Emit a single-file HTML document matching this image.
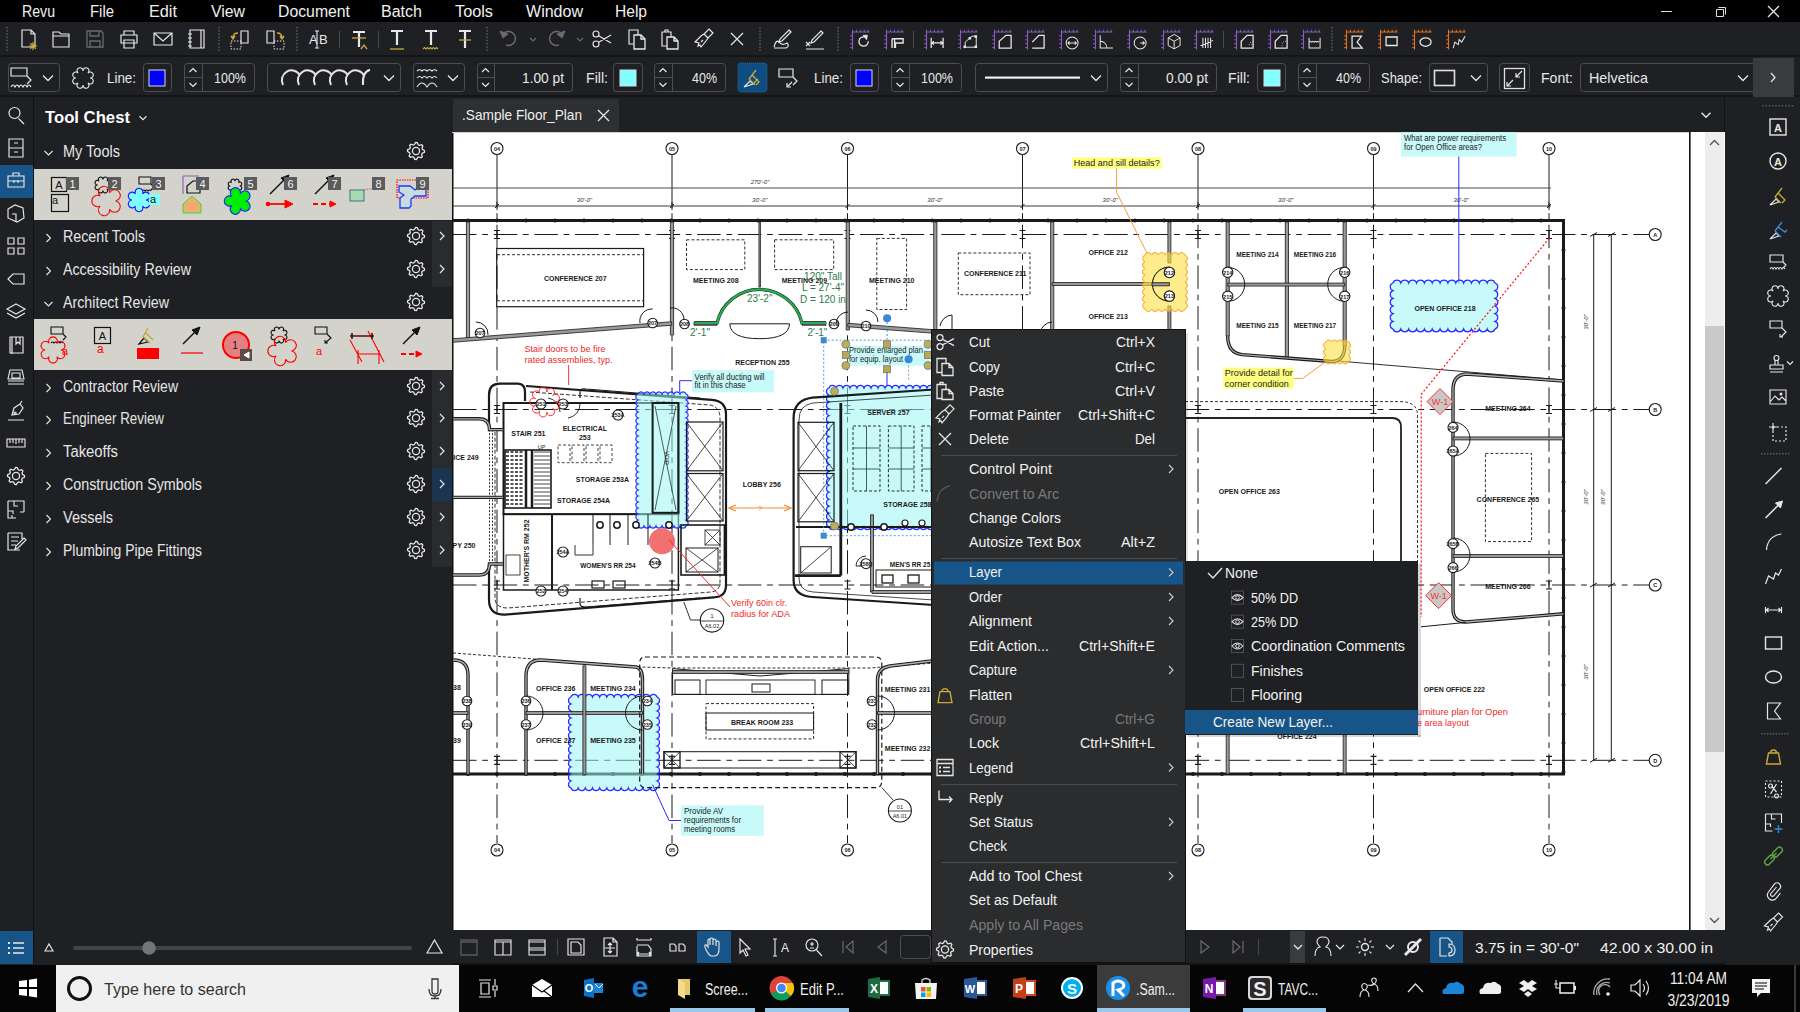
<!DOCTYPE html>
<html><head><meta charset="utf-8"><title>Revu</title>
<style>
*{margin:0;padding:0}
html,body{width:1800px;height:1012px;overflow:hidden;background:#1f2023}
svg{display:block;font-family:"Liberation Sans",sans-serif}
</style></head><body>
<svg width="1800" height="1012" viewBox="0 0 1800 1012" font-family="Liberation Sans, sans-serif">
<rect x="0" y="0" width="1800" height="1012" fill="#1f2023" /><rect x="0" y="0" width="1800" height="22" fill="#000" /><rect x="0" y="55" width="1800" height="2" fill="#141516" /><rect x="0" y="95" width="1800" height="2" fill="#141516" /><text x="22" y="17" font-size="16" fill="#f0f0f0" textLength="33" lengthAdjust="spacingAndGlyphs" >Revu</text><text x="90" y="17" font-size="16" fill="#f0f0f0" textLength="24" lengthAdjust="spacingAndGlyphs" >File</text><text x="149" y="17" font-size="16" fill="#f0f0f0" textLength="28" lengthAdjust="spacingAndGlyphs" >Edit</text><text x="211" y="17" font-size="16" fill="#f0f0f0" textLength="34" lengthAdjust="spacingAndGlyphs" >View</text><text x="278" y="17" font-size="16" fill="#f0f0f0" textLength="72" lengthAdjust="spacingAndGlyphs" >Document</text><text x="381" y="17" font-size="16" fill="#f0f0f0" textLength="41" lengthAdjust="spacingAndGlyphs" >Batch</text><text x="455" y="17" font-size="16" fill="#f0f0f0" textLength="38" lengthAdjust="spacingAndGlyphs" >Tools</text><text x="526" y="17" font-size="16" fill="#f0f0f0" textLength="57" lengthAdjust="spacingAndGlyphs" >Window</text><text x="615" y="17" font-size="16" fill="#f0f0f0" textLength="32" lengthAdjust="spacingAndGlyphs" >Help</text><rect x="1661" y="11" width="11" height="1" fill="#e0e0e0" /><path d="M1716.5,9.5 h7 v7 h-7 z M1718.5,7.5 h7 v7" stroke="#e0e0e0" stroke-width="1" fill="none" /><path d="M1768,6 L1779,17 M1779,6 L1768,17" stroke="#e8e8e8" stroke-width="1.3" fill="none" /><rect x="6.25" y="27" width="1.5" height="1.5" fill="#5a5a5a" /><rect x="6.25" y="30.2" width="1.5" height="1.5" fill="#5a5a5a" /><rect x="6.25" y="33.4" width="1.5" height="1.5" fill="#5a5a5a" /><rect x="6.25" y="36.6" width="1.5" height="1.5" fill="#5a5a5a" /><rect x="6.25" y="39.800000000000004" width="1.5" height="1.5" fill="#5a5a5a" /><rect x="6.25" y="43.00000000000001" width="1.5" height="1.5" fill="#5a5a5a" /><rect x="6.25" y="46.20000000000001" width="1.5" height="1.5" fill="#5a5a5a" /><rect x="6.25" y="49.40000000000001" width="1.5" height="1.5" fill="#5a5a5a" /><g transform="translate(28,39)"><path d="M-6,-9 H3 L7,-5 V8 H-6 Z M3,-9 V-5 H7" stroke="#e8e8e8" stroke-width="1.15" fill="none" /><path d="M5,3 V11 M1,7 H9 M2.2,4.2 L7.8,9.8 M7.8,4.2 L2.2,9.8" stroke="#c9a93a" stroke-width="1.2" fill="none" /></g><g transform="translate(61,39)"><path d="M-8,-7 H-2 L0,-5 H8 V8 H-8 Z M-8,-3 H8" stroke="#e8e8e8" stroke-width="1.15" fill="none" /></g><g transform="translate(95,39)"><path d="M-8,-8 H6 L8,-6 V8 H-8 Z M-5,-8 V-3 H4 V-8 M-5,8 V2 H5 V8" stroke="#6a6a6a" stroke-width="1.3" fill="none" /></g><g transform="translate(129,39)"><path d="M-5,-4 V-8 H5 V-4 M-8,-4 H8 V4 H-8 Z M-5,1 H5 V9 H-5 Z" stroke="#e8e8e8" stroke-width="1.2" fill="none" /></g><g transform="translate(163,39)"><path d="M-9,-6 H9 V6 H-9 Z M-9,-6 L0,2 L9,-6" stroke="#e8e8e8" stroke-width="1.2" fill="none" /></g><g transform="translate(197,39)"><path d="M-7,-9 H7 V9 H-7 Z M4,-9 V9 M-9,-5 H-5 M-9,-1 H-5 M-9,3 H-5 M-9,7 H-5" stroke="#e8e8e8" stroke-width="1.2" fill="none" /></g><rect x="218.25" y="27" width="1.5" height="1.5" fill="#5a5a5a" /><rect x="218.25" y="30.2" width="1.5" height="1.5" fill="#5a5a5a" /><rect x="218.25" y="33.4" width="1.5" height="1.5" fill="#5a5a5a" /><rect x="218.25" y="36.6" width="1.5" height="1.5" fill="#5a5a5a" /><rect x="218.25" y="39.800000000000004" width="1.5" height="1.5" fill="#5a5a5a" /><rect x="218.25" y="43.00000000000001" width="1.5" height="1.5" fill="#5a5a5a" /><rect x="218.25" y="46.20000000000001" width="1.5" height="1.5" fill="#5a5a5a" /><rect x="218.25" y="49.40000000000001" width="1.5" height="1.5" fill="#5a5a5a" /><g transform="translate(240,39)"><path d="M1,-8 H8 V4 H1 Z" stroke="#e8e8e8" stroke-width="1.15" fill="none" /><path d="M-9,2 H1 V10 H-9 Z" stroke="#e8e8e8" stroke-width="1" fill="none" stroke-dasharray="1.5,1.5"/><path d="M-2,-6 Q-7,-6 -7,-1 M-9,-3 L-7,0 L-5,-3" stroke="#c9a93a" stroke-width="1.4" fill="none" /></g><g transform="translate(275,39)"><path d="M-8,-8 H-1 V4 H-8 Z" stroke="#e8e8e8" stroke-width="1.15" fill="none" /><path d="M-1,2 H9 V10 H-1 Z" stroke="#e8e8e8" stroke-width="1" fill="none" stroke-dasharray="1.5,1.5"/><path d="M2,-6 Q7,-6 7,-1 M5,-3 L7,0 L9,-3" stroke="#c9a93a" stroke-width="1.4" fill="none" /></g><rect x="296.25" y="27" width="1.5" height="1.5" fill="#5a5a5a" /><rect x="296.25" y="30.2" width="1.5" height="1.5" fill="#5a5a5a" /><rect x="296.25" y="33.4" width="1.5" height="1.5" fill="#5a5a5a" /><rect x="296.25" y="36.6" width="1.5" height="1.5" fill="#5a5a5a" /><rect x="296.25" y="39.800000000000004" width="1.5" height="1.5" fill="#5a5a5a" /><rect x="296.25" y="43.00000000000001" width="1.5" height="1.5" fill="#5a5a5a" /><rect x="296.25" y="46.20000000000001" width="1.5" height="1.5" fill="#5a5a5a" /><rect x="296.25" y="49.40000000000001" width="1.5" height="1.5" fill="#5a5a5a" /><g transform="translate(318,39)"><text x="-9" y="5" font-size="13" fill="#e8e8e8" >A</text><text x="1" y="5" font-size="13" fill="#e8e8e8" >B</text><path d="M-1,-8 V9 M-3,-8 H1 M-3,9 H1" stroke="#e8e8e8" stroke-width="1.1" fill="none" /></g><rect x="339" y="31" width="1" height="17" fill="#4a4a4a" /><g transform="translate(359,39)"><path d="M-6,-7 H6 M0,-7 V8" stroke="#e8e8e8" stroke-width="2.2" fill="none" /><path d="M-7,-1 H7" stroke="#c9a93a" stroke-width="1.3" fill="none" /><path d="M2,10 L5,6 L8,10" stroke="#c9a93a" stroke-width="1.3" fill="none" /></g><rect x="378" y="31" width="1" height="17" fill="#4a4a4a" /><g transform="translate(397,39)"><path d="M-6,-8 H6 M0,-8 V6" stroke="#e8e8e8" stroke-width="2.2" fill="none" /><path d="M-7,10 H7" stroke="#c9a93a" stroke-width="1.3" fill="none" /></g><g transform="translate(431,39)"><path d="M-6,-8 H6 M0,-8 V6" stroke="#e8e8e8" stroke-width="2.2" fill="none" /><path d="M-8,10 l1.5,-1.5 l1.5,1.5 l1.5,-1.5 l1.5,1.5 l1.5,-1.5 l1.5,1.5 l1.5,-1.5 l1.5,1.5 l1.5,-1.5 l1.5,1.5" stroke="#c9a93a" stroke-width="1.1" fill="none" /></g><g transform="translate(465,39)"><path d="M-6,-8 H6 M0,-8 V9" stroke="#e8e8e8" stroke-width="2.2" fill="none" /><path d="M-6,1 H6" stroke="#c9a93a" stroke-width="1.3" fill="none" /></g><rect x="486.25" y="27" width="1.5" height="1.5" fill="#5a5a5a" /><rect x="486.25" y="30.2" width="1.5" height="1.5" fill="#5a5a5a" /><rect x="486.25" y="33.4" width="1.5" height="1.5" fill="#5a5a5a" /><rect x="486.25" y="36.6" width="1.5" height="1.5" fill="#5a5a5a" /><rect x="486.25" y="39.800000000000004" width="1.5" height="1.5" fill="#5a5a5a" /><rect x="486.25" y="43.00000000000001" width="1.5" height="1.5" fill="#5a5a5a" /><rect x="486.25" y="46.20000000000001" width="1.5" height="1.5" fill="#5a5a5a" /><rect x="486.25" y="49.40000000000001" width="1.5" height="1.5" fill="#5a5a5a" /><g transform="translate(509,39)"><path d="M-6,-5 A7,7 0 1 1 -3,6" stroke="#6a6a6a" stroke-width="1.5" fill="none" /><path d="M-9,-8 L-6,-1 L-1,-5 Z" stroke="#6a6a6a" stroke-width="1" fill="#6a6a6a" /></g><g transform="translate(533,39)"><path d="M-3,-1 L0,2 L3,-1" stroke="#6a6a6a" stroke-width="1.2" fill="none" /></g><g transform="translate(556,39)"><path d="M6,-5 A7,7 0 1 0 3,6" stroke="#6a6a6a" stroke-width="1.5" fill="none" /><path d="M9,-8 L6,-1 L1,-5 Z" stroke="#6a6a6a" stroke-width="1" fill="#6a6a6a" /></g><g transform="translate(580,39)"><path d="M-3,-1 L0,2 L3,-1" stroke="#6a6a6a" stroke-width="1.2" fill="none" /></g><g transform="translate(602,39)"><path d="M-9,-5 a3,3 0 1 0 6,0 a3,3 0 1 0 -6,0 M-9,5 a3,3 0 1 0 6,0 a3,3 0 1 0 -6,0 M-3,-3 L9,4 M-3,3 L9,-4" stroke="#e8e8e8" stroke-width="1.15" fill="none" /></g><g transform="translate(637,39)"><path d="M-8,-9 H1 V5 H-8 Z" stroke="#e8e8e8" stroke-width="1.15" fill="none" /><path d="M-3,-4 H4 L8,0 V10 H-3 Z M4,-4 V0 H8" stroke="#e8e8e8" stroke-width="1.3" fill="#1f2023" /></g><g transform="translate(670,39)"><path d="M-8,-7 H1 V7 H-8 Z M-5,-9 H-2 V-7 H-5 Z" stroke="#e8e8e8" stroke-width="1.15" fill="none" /><path d="M-3,-2 H4 L8,2 V10 H-3 Z M4,-2 V2 H8" stroke="#e8e8e8" stroke-width="1.3" fill="#1f2023" /></g><g transform="translate(704,39)"><path d="M5,-10 L9,-6 L4,-1 L0,-5 Z M0,-5 L4,-1 L2,2 L-3,8 L-4,6 L-6,7 L-5,4 L-9,3 L-3,-3 Z M-3,3 L-1,1" stroke="#e8e8e8" stroke-width="1.15" fill="none" /></g><g transform="translate(737,39)"><path d="M-6,-6 L6,6 M6,-6 L-6,6" stroke="#e8e8e8" stroke-width="1.2" fill="none" /></g><rect x="759.25" y="27" width="1.5" height="1.5" fill="#5a5a5a" /><rect x="759.25" y="30.2" width="1.5" height="1.5" fill="#5a5a5a" /><rect x="759.25" y="33.4" width="1.5" height="1.5" fill="#5a5a5a" /><rect x="759.25" y="36.6" width="1.5" height="1.5" fill="#5a5a5a" /><rect x="759.25" y="39.800000000000004" width="1.5" height="1.5" fill="#5a5a5a" /><rect x="759.25" y="43.00000000000001" width="1.5" height="1.5" fill="#5a5a5a" /><rect x="759.25" y="46.20000000000001" width="1.5" height="1.5" fill="#5a5a5a" /><rect x="759.25" y="49.40000000000001" width="1.5" height="1.5" fill="#5a5a5a" /><g transform="translate(782,39)"><path d="M7,-9 L9,-7 L0,2 L-3,3 L-2,0 Z" stroke="#e8e8e8" stroke-width="1.2" fill="none" /><path d="M-8,8 Q-6,0 -3,3 Q0,7 5,4 Q8,7 4,9 H-8" stroke="#e8e8e8" stroke-width="1.2" fill="none" /></g><g transform="translate(815,39)"><path d="M-9,3 L-5,7 M-5,3 L-9,7 M-9,10 H9" stroke="#e8e8e8" stroke-width="1.2" fill="none" /><path d="M6,-8 L8,-6 L-1,3 L-4,4 L-3,1 Z" stroke="#e8e8e8" stroke-width="1.2" fill="none" /></g><rect x="837.25" y="27" width="1.5" height="1.5" fill="#5a5a5a" /><rect x="837.25" y="30.2" width="1.5" height="1.5" fill="#5a5a5a" /><rect x="837.25" y="33.4" width="1.5" height="1.5" fill="#5a5a5a" /><rect x="837.25" y="36.6" width="1.5" height="1.5" fill="#5a5a5a" /><rect x="837.25" y="39.800000000000004" width="1.5" height="1.5" fill="#5a5a5a" /><rect x="837.25" y="43.00000000000001" width="1.5" height="1.5" fill="#5a5a5a" /><rect x="837.25" y="46.20000000000001" width="1.5" height="1.5" fill="#5a5a5a" /><rect x="837.25" y="49.40000000000001" width="1.5" height="1.5" fill="#5a5a5a" /><g transform="translate(861,39)"><path d="M-8.5,-7 H8.5 M-8.5,-7 V10.5" stroke="#8a5cc4" stroke-width="1.1" fill="none" /><path d="M-8.50,-7 V-9.3" stroke="#8a5cc4" stroke-width="1" fill="none" /><path d="M-4.60,-7 V-9.3" stroke="#8a5cc4" stroke-width="1" fill="none" /><path d="M-0.70,-7 V-9.3" stroke="#8a5cc4" stroke-width="1" fill="none" /><path d="M3.20,-7 V-9.3" stroke="#8a5cc4" stroke-width="1" fill="none" /><path d="M7.10,-7 V-9.3" stroke="#8a5cc4" stroke-width="1" fill="none" /><path d="M-8.5,-3.10 H-10.8" stroke="#8a5cc4" stroke-width="1" fill="none" /><path d="M-8.5,0.80 H-10.8" stroke="#8a5cc4" stroke-width="1" fill="none" /><path d="M-8.5,4.70 H-10.8" stroke="#8a5cc4" stroke-width="1" fill="none" /><path d="M-8.5,8.60 H-10.8" stroke="#8a5cc4" stroke-width="1" fill="none" /><g transform="translate(1.3,1.4) scale(0.85)"><path d="M7,1 A5.5,5.5 0 1 1 3,-4" stroke="#e8e8e8" stroke-width="1.5" fill="none" /><path d="M1,-6 L6,-6 L5,-1 Z" stroke="#e8e8e8" stroke-width="1" fill="#e8e8e8" /></g></g><g transform="translate(895,39)"><path d="M-8.5,-7 H8.5 M-8.5,-7 V10.5" stroke="#8a5cc4" stroke-width="1.1" fill="none" /><path d="M-8.50,-7 V-9.3" stroke="#8a5cc4" stroke-width="1" fill="none" /><path d="M-4.60,-7 V-9.3" stroke="#8a5cc4" stroke-width="1" fill="none" /><path d="M-0.70,-7 V-9.3" stroke="#8a5cc4" stroke-width="1" fill="none" /><path d="M3.20,-7 V-9.3" stroke="#8a5cc4" stroke-width="1" fill="none" /><path d="M7.10,-7 V-9.3" stroke="#8a5cc4" stroke-width="1" fill="none" /><path d="M-8.5,-3.10 H-10.8" stroke="#8a5cc4" stroke-width="1" fill="none" /><path d="M-8.5,0.80 H-10.8" stroke="#8a5cc4" stroke-width="1" fill="none" /><path d="M-8.5,4.70 H-10.8" stroke="#8a5cc4" stroke-width="1" fill="none" /><path d="M-8.5,8.60 H-10.8" stroke="#8a5cc4" stroke-width="1" fill="none" /><g transform="translate(1.3,1.4) scale(0.85)"><path d="M-5,-2 H8 V3 H-1 V9 M-5,-2 V9 M-2,-2 V9" stroke="#e8e8e8" stroke-width="1.6" fill="none" /></g></g><rect x="913" y="31" width="1" height="17" fill="#4a4a4a" /><g transform="translate(935,39)"><path d="M-8.5,-7 H8.5 M-8.5,-7 V10.5" stroke="#8a5cc4" stroke-width="1.1" fill="none" /><path d="M-8.50,-7 V-9.3" stroke="#8a5cc4" stroke-width="1" fill="none" /><path d="M-4.60,-7 V-9.3" stroke="#8a5cc4" stroke-width="1" fill="none" /><path d="M-0.70,-7 V-9.3" stroke="#8a5cc4" stroke-width="1" fill="none" /><path d="M3.20,-7 V-9.3" stroke="#8a5cc4" stroke-width="1" fill="none" /><path d="M7.10,-7 V-9.3" stroke="#8a5cc4" stroke-width="1" fill="none" /><path d="M-8.5,-3.10 H-10.8" stroke="#8a5cc4" stroke-width="1" fill="none" /><path d="M-8.5,0.80 H-10.8" stroke="#8a5cc4" stroke-width="1" fill="none" /><path d="M-8.5,4.70 H-10.8" stroke="#8a5cc4" stroke-width="1" fill="none" /><path d="M-8.5,8.60 H-10.8" stroke="#8a5cc4" stroke-width="1" fill="none" /><g transform="translate(1.3,1.4) scale(0.85)"><path d="M-6,-3 V9 M8,-3 V9 M-5,3 H7 M-3,1 L-5,3 L-3,5 M5,1 L7,3 L5,5" stroke="#e8e8e8" stroke-width="1.5" fill="none" /></g></g><g transform="translate(969,39)"><path d="M-8.5,-7 H8.5 M-8.5,-7 V10.5" stroke="#8a5cc4" stroke-width="1.1" fill="none" /><path d="M-8.50,-7 V-9.3" stroke="#8a5cc4" stroke-width="1" fill="none" /><path d="M-4.60,-7 V-9.3" stroke="#8a5cc4" stroke-width="1" fill="none" /><path d="M-0.70,-7 V-9.3" stroke="#8a5cc4" stroke-width="1" fill="none" /><path d="M3.20,-7 V-9.3" stroke="#8a5cc4" stroke-width="1" fill="none" /><path d="M7.10,-7 V-9.3" stroke="#8a5cc4" stroke-width="1" fill="none" /><path d="M-8.5,-3.10 H-10.8" stroke="#8a5cc4" stroke-width="1" fill="none" /><path d="M-8.5,0.80 H-10.8" stroke="#8a5cc4" stroke-width="1" fill="none" /><path d="M-8.5,4.70 H-10.8" stroke="#8a5cc4" stroke-width="1" fill="none" /><path d="M-8.5,8.60 H-10.8" stroke="#8a5cc4" stroke-width="1" fill="none" /><g transform="translate(1.3,1.4) scale(0.85)"><path d="M-6,8 H7 V-4 M-6,8 V2 L2,-5 H7" stroke="#e8e8e8" stroke-width="1.15" fill="none" /><rect x="-8" y="6" width="3" height="3" fill="#e8e8e8" /><rect x="5" y="6" width="3" height="3" fill="#e8e8e8" /><rect x="5" y="-6" width="3" height="3" fill="#e8e8e8" /><rect x="-2" y="-4" width="3" height="3" fill="#e8e8e8" /></g></g><g transform="translate(1003,39)"><path d="M-8.5,-7 H8.5 M-8.5,-7 V10.5" stroke="#8a5cc4" stroke-width="1.1" fill="none" /><path d="M-8.50,-7 V-9.3" stroke="#8a5cc4" stroke-width="1" fill="none" /><path d="M-4.60,-7 V-9.3" stroke="#8a5cc4" stroke-width="1" fill="none" /><path d="M-0.70,-7 V-9.3" stroke="#8a5cc4" stroke-width="1" fill="none" /><path d="M3.20,-7 V-9.3" stroke="#8a5cc4" stroke-width="1" fill="none" /><path d="M7.10,-7 V-9.3" stroke="#8a5cc4" stroke-width="1" fill="none" /><path d="M-8.5,-3.10 H-10.8" stroke="#8a5cc4" stroke-width="1" fill="none" /><path d="M-8.5,0.80 H-10.8" stroke="#8a5cc4" stroke-width="1" fill="none" /><path d="M-8.5,4.70 H-10.8" stroke="#8a5cc4" stroke-width="1" fill="none" /><path d="M-8.5,8.60 H-10.8" stroke="#8a5cc4" stroke-width="1" fill="none" /><g transform="translate(1.3,1.4) scale(0.85)"><path d="M-6,9 V1 L2,-6 H8 V9 Z" stroke="#e8e8e8" stroke-width="1.5" fill="none" /></g></g><g transform="translate(1036,39)"><path d="M-8.5,-7 H8.5 M-8.5,-7 V10.5" stroke="#8a5cc4" stroke-width="1.1" fill="none" /><path d="M-8.50,-7 V-9.3" stroke="#8a5cc4" stroke-width="1" fill="none" /><path d="M-4.60,-7 V-9.3" stroke="#8a5cc4" stroke-width="1" fill="none" /><path d="M-0.70,-7 V-9.3" stroke="#8a5cc4" stroke-width="1" fill="none" /><path d="M3.20,-7 V-9.3" stroke="#8a5cc4" stroke-width="1" fill="none" /><path d="M7.10,-7 V-9.3" stroke="#8a5cc4" stroke-width="1" fill="none" /><path d="M-8.5,-3.10 H-10.8" stroke="#8a5cc4" stroke-width="1" fill="none" /><path d="M-8.5,0.80 H-10.8" stroke="#8a5cc4" stroke-width="1" fill="none" /><path d="M-8.5,4.70 H-10.8" stroke="#8a5cc4" stroke-width="1" fill="none" /><path d="M-8.5,8.60 H-10.8" stroke="#8a5cc4" stroke-width="1" fill="none" /><g transform="translate(1.3,1.4) scale(0.85)"><path d="M-6,9 H8 V-6 H2 L-6,2" stroke="#e8e8e8" stroke-width="1.5" fill="none" /></g></g><g transform="translate(1070,39)"><path d="M-8.5,-7 H8.5 M-8.5,-7 V10.5" stroke="#8a5cc4" stroke-width="1.1" fill="none" /><path d="M-8.50,-7 V-9.3" stroke="#8a5cc4" stroke-width="1" fill="none" /><path d="M-4.60,-7 V-9.3" stroke="#8a5cc4" stroke-width="1" fill="none" /><path d="M-0.70,-7 V-9.3" stroke="#8a5cc4" stroke-width="1" fill="none" /><path d="M3.20,-7 V-9.3" stroke="#8a5cc4" stroke-width="1" fill="none" /><path d="M7.10,-7 V-9.3" stroke="#8a5cc4" stroke-width="1" fill="none" /><path d="M-8.5,-3.10 H-10.8" stroke="#8a5cc4" stroke-width="1" fill="none" /><path d="M-8.5,0.80 H-10.8" stroke="#8a5cc4" stroke-width="1" fill="none" /><path d="M-8.5,4.70 H-10.8" stroke="#8a5cc4" stroke-width="1" fill="none" /><path d="M-8.5,8.60 H-10.8" stroke="#8a5cc4" stroke-width="1" fill="none" /><g transform="translate(1.3,1.4) scale(0.85)"><path d="M-6,3 a7,7 0 1 0 14,0 a7,7 0 1 0 -14,0 M-4,3 H6 M-2,1 L-4,3 L-2,5 M4,1 L6,3 L4,5" stroke="#e8e8e8" stroke-width="1.2" fill="none" /></g></g><g transform="translate(1104,39)"><path d="M-8.5,-7 H8.5 M-8.5,-7 V10.5" stroke="#8a5cc4" stroke-width="1.1" fill="none" /><path d="M-8.50,-7 V-9.3" stroke="#8a5cc4" stroke-width="1" fill="none" /><path d="M-4.60,-7 V-9.3" stroke="#8a5cc4" stroke-width="1" fill="none" /><path d="M-0.70,-7 V-9.3" stroke="#8a5cc4" stroke-width="1" fill="none" /><path d="M3.20,-7 V-9.3" stroke="#8a5cc4" stroke-width="1" fill="none" /><path d="M7.10,-7 V-9.3" stroke="#8a5cc4" stroke-width="1" fill="none" /><path d="M-8.5,-3.10 H-10.8" stroke="#8a5cc4" stroke-width="1" fill="none" /><path d="M-8.5,0.80 H-10.8" stroke="#8a5cc4" stroke-width="1" fill="none" /><path d="M-8.5,4.70 H-10.8" stroke="#8a5cc4" stroke-width="1" fill="none" /><path d="M-8.5,8.60 H-10.8" stroke="#8a5cc4" stroke-width="1" fill="none" /><g transform="translate(1.3,1.4) scale(0.85)"><path d="M-6,-6 V9 H9 M-6,1 A8,8 0 0 1 2,9" stroke="#e8e8e8" stroke-width="1.2" fill="none" /></g></g><g transform="translate(1138,39)"><path d="M-8.5,-7 H8.5 M-8.5,-7 V10.5" stroke="#8a5cc4" stroke-width="1.1" fill="none" /><path d="M-8.50,-7 V-9.3" stroke="#8a5cc4" stroke-width="1" fill="none" /><path d="M-4.60,-7 V-9.3" stroke="#8a5cc4" stroke-width="1" fill="none" /><path d="M-0.70,-7 V-9.3" stroke="#8a5cc4" stroke-width="1" fill="none" /><path d="M3.20,-7 V-9.3" stroke="#8a5cc4" stroke-width="1" fill="none" /><path d="M7.10,-7 V-9.3" stroke="#8a5cc4" stroke-width="1" fill="none" /><path d="M-8.5,-3.10 H-10.8" stroke="#8a5cc4" stroke-width="1" fill="none" /><path d="M-8.5,0.80 H-10.8" stroke="#8a5cc4" stroke-width="1" fill="none" /><path d="M-8.5,4.70 H-10.8" stroke="#8a5cc4" stroke-width="1" fill="none" /><path d="M-8.5,8.60 H-10.8" stroke="#8a5cc4" stroke-width="1" fill="none" /><g transform="translate(1.3,1.4) scale(0.85)"><path d="M-6,3 a7,7 0 1 0 14,0 a7,7 0 1 0 -14,0 M1,3 H6 M4,1 L6,3 L4,5" stroke="#e8e8e8" stroke-width="1.2" fill="none" /></g></g><g transform="translate(1172,39)"><path d="M-8.5,-7 H8.5 M-8.5,-7 V10.5" stroke="#8a5cc4" stroke-width="1.1" fill="none" /><path d="M-8.50,-7 V-9.3" stroke="#8a5cc4" stroke-width="1" fill="none" /><path d="M-4.60,-7 V-9.3" stroke="#8a5cc4" stroke-width="1" fill="none" /><path d="M-0.70,-7 V-9.3" stroke="#8a5cc4" stroke-width="1" fill="none" /><path d="M3.20,-7 V-9.3" stroke="#8a5cc4" stroke-width="1" fill="none" /><path d="M7.10,-7 V-9.3" stroke="#8a5cc4" stroke-width="1" fill="none" /><path d="M-8.5,-3.10 H-10.8" stroke="#8a5cc4" stroke-width="1" fill="none" /><path d="M-8.5,0.80 H-10.8" stroke="#8a5cc4" stroke-width="1" fill="none" /><path d="M-8.5,4.70 H-10.8" stroke="#8a5cc4" stroke-width="1" fill="none" /><path d="M-8.5,8.60 H-10.8" stroke="#8a5cc4" stroke-width="1" fill="none" /><g transform="translate(1.3,1.4) scale(0.85)"><path d="M-6,-3 L1,-7 L8,-3 V6 L1,10 L-6,6 Z M-6,-3 L1,1 L8,-3 M1,1 V10" stroke="#e8e8e8" stroke-width="1.15" fill="none" /></g></g><g transform="translate(1205,39)"><path d="M-8.5,-7 H8.5 M-8.5,-7 V10.5" stroke="#8a5cc4" stroke-width="1.1" fill="none" /><path d="M-8.50,-7 V-9.3" stroke="#8a5cc4" stroke-width="1" fill="none" /><path d="M-4.60,-7 V-9.3" stroke="#8a5cc4" stroke-width="1" fill="none" /><path d="M-0.70,-7 V-9.3" stroke="#8a5cc4" stroke-width="1" fill="none" /><path d="M3.20,-7 V-9.3" stroke="#8a5cc4" stroke-width="1" fill="none" /><path d="M7.10,-7 V-9.3" stroke="#8a5cc4" stroke-width="1" fill="none" /><path d="M-8.5,-3.10 H-10.8" stroke="#8a5cc4" stroke-width="1" fill="none" /><path d="M-8.5,0.80 H-10.8" stroke="#8a5cc4" stroke-width="1" fill="none" /><path d="M-8.5,4.70 H-10.8" stroke="#8a5cc4" stroke-width="1" fill="none" /><path d="M-8.5,8.60 H-10.8" stroke="#8a5cc4" stroke-width="1" fill="none" /><g transform="translate(1.3,1.4) scale(0.85)"><path d="M-4,-3 V9 M-1,-3 V9 M2,-3 V9 M5,-3 V9 M-7,6 L8,0" stroke="#e8e8e8" stroke-width="1.2" fill="none" /></g></g><rect x="1223" y="31" width="1" height="17" fill="#4a4a4a" /><g transform="translate(1245,39)"><path d="M-8.5,-7 H8.5 M-8.5,-7 V10.5" stroke="#8a5cc4" stroke-width="1.1" fill="none" /><path d="M-8.50,-7 V-9.3" stroke="#8a5cc4" stroke-width="1" fill="none" /><path d="M-4.60,-7 V-9.3" stroke="#8a5cc4" stroke-width="1" fill="none" /><path d="M-0.70,-7 V-9.3" stroke="#8a5cc4" stroke-width="1" fill="none" /><path d="M3.20,-7 V-9.3" stroke="#8a5cc4" stroke-width="1" fill="none" /><path d="M7.10,-7 V-9.3" stroke="#8a5cc4" stroke-width="1" fill="none" /><path d="M-8.5,-3.10 H-10.8" stroke="#8a5cc4" stroke-width="1" fill="none" /><path d="M-8.5,0.80 H-10.8" stroke="#8a5cc4" stroke-width="1" fill="none" /><path d="M-8.5,4.70 H-10.8" stroke="#8a5cc4" stroke-width="1" fill="none" /><path d="M-8.5,8.60 H-10.8" stroke="#8a5cc4" stroke-width="1" fill="none" /><g transform="translate(1.3,1.4) scale(0.85)"><path d="M-6,9 V1 L1,-6 H8 V9 Z" stroke="#e8e8e8" stroke-width="1.5" fill="none" /><path d="M3,5 h1 M6,5 h1 M5,2 v1" stroke="#e8e8e8" stroke-width="1" fill="none" /></g></g><g transform="translate(1279,39)"><path d="M-8.5,-7 H8.5 M-8.5,-7 V10.5" stroke="#8a5cc4" stroke-width="1.1" fill="none" /><path d="M-8.50,-7 V-9.3" stroke="#8a5cc4" stroke-width="1" fill="none" /><path d="M-4.60,-7 V-9.3" stroke="#8a5cc4" stroke-width="1" fill="none" /><path d="M-0.70,-7 V-9.3" stroke="#8a5cc4" stroke-width="1" fill="none" /><path d="M3.20,-7 V-9.3" stroke="#8a5cc4" stroke-width="1" fill="none" /><path d="M7.10,-7 V-9.3" stroke="#8a5cc4" stroke-width="1" fill="none" /><path d="M-8.5,-3.10 H-10.8" stroke="#8a5cc4" stroke-width="1" fill="none" /><path d="M-8.5,0.80 H-10.8" stroke="#8a5cc4" stroke-width="1" fill="none" /><path d="M-8.5,4.70 H-10.8" stroke="#8a5cc4" stroke-width="1" fill="none" /><path d="M-8.5,8.60 H-10.8" stroke="#8a5cc4" stroke-width="1" fill="none" /><g transform="translate(1.3,1.4) scale(0.85)"><path d="M-6,9 V1 L1,-6 H8 V9 Z" stroke="#e8e8e8" stroke-width="1.5" fill="none" /><path d="M2,7 Q2,1 7,1" stroke="#e8e8e8" stroke-width="1" fill="none" stroke-dasharray="1,1.5"/></g></g><g transform="translate(1312,39)"><path d="M-8.5,-7 H8.5 M-8.5,-7 V10.5" stroke="#8a5cc4" stroke-width="1.1" fill="none" /><path d="M-8.50,-7 V-9.3" stroke="#8a5cc4" stroke-width="1" fill="none" /><path d="M-4.60,-7 V-9.3" stroke="#8a5cc4" stroke-width="1" fill="none" /><path d="M-0.70,-7 V-9.3" stroke="#8a5cc4" stroke-width="1" fill="none" /><path d="M3.20,-7 V-9.3" stroke="#8a5cc4" stroke-width="1" fill="none" /><path d="M7.10,-7 V-9.3" stroke="#8a5cc4" stroke-width="1" fill="none" /><path d="M-8.5,-3.10 H-10.8" stroke="#8a5cc4" stroke-width="1" fill="none" /><path d="M-8.5,0.80 H-10.8" stroke="#8a5cc4" stroke-width="1" fill="none" /><path d="M-8.5,4.70 H-10.8" stroke="#8a5cc4" stroke-width="1" fill="none" /><path d="M-8.5,8.60 H-10.8" stroke="#8a5cc4" stroke-width="1" fill="none" /><g transform="translate(1.3,1.4) scale(0.85)"><path d="M-5,-3 V9 H8 V-3 M-5,2 l1.5,-1 l1.5,1 l1.5,-1 l1.5,1 l1.5,-1 l1.5,1 l1.5,-1 l1.5,1" stroke="#e8e8e8" stroke-width="1.2" fill="none" /></g></g><rect x="1331.25" y="27" width="1.5" height="1.5" fill="#5a5a5a" /><rect x="1331.25" y="30.2" width="1.5" height="1.5" fill="#5a5a5a" /><rect x="1331.25" y="33.4" width="1.5" height="1.5" fill="#5a5a5a" /><rect x="1331.25" y="36.6" width="1.5" height="1.5" fill="#5a5a5a" /><rect x="1331.25" y="39.800000000000004" width="1.5" height="1.5" fill="#5a5a5a" /><rect x="1331.25" y="43.00000000000001" width="1.5" height="1.5" fill="#5a5a5a" /><rect x="1331.25" y="46.20000000000001" width="1.5" height="1.5" fill="#5a5a5a" /><rect x="1331.25" y="49.40000000000001" width="1.5" height="1.5" fill="#5a5a5a" /><g transform="translate(1355,39)"><path d="M-8.5,-7 H8.5 M-8.5,-7 V10.5" stroke="#e8731c" stroke-width="1.1" fill="none" /><path d="M-8.50,-7 V-9.3" stroke="#e8731c" stroke-width="1" fill="none" /><path d="M-4.60,-7 V-9.3" stroke="#e8731c" stroke-width="1" fill="none" /><path d="M-0.70,-7 V-9.3" stroke="#e8731c" stroke-width="1" fill="none" /><path d="M3.20,-7 V-9.3" stroke="#e8731c" stroke-width="1" fill="none" /><path d="M7.10,-7 V-9.3" stroke="#e8731c" stroke-width="1" fill="none" /><path d="M-8.5,-3.10 H-10.8" stroke="#e8731c" stroke-width="1" fill="none" /><path d="M-8.5,0.80 H-10.8" stroke="#e8731c" stroke-width="1" fill="none" /><path d="M-8.5,4.70 H-10.8" stroke="#e8731c" stroke-width="1" fill="none" /><path d="M-8.5,8.60 H-10.8" stroke="#e8731c" stroke-width="1" fill="none" /><g transform="translate(1.3,1.4) scale(0.85)"><path d="M-5,-5 H6 L1,2 L7,9 H-5 Z" stroke="#e8e8e8" stroke-width="1.5" fill="none" /></g></g><g transform="translate(1389,39)"><path d="M-8.5,-7 H8.5 M-8.5,-7 V10.5" stroke="#e8731c" stroke-width="1.1" fill="none" /><path d="M-8.50,-7 V-9.3" stroke="#e8731c" stroke-width="1" fill="none" /><path d="M-4.60,-7 V-9.3" stroke="#e8731c" stroke-width="1" fill="none" /><path d="M-0.70,-7 V-9.3" stroke="#e8731c" stroke-width="1" fill="none" /><path d="M3.20,-7 V-9.3" stroke="#e8731c" stroke-width="1" fill="none" /><path d="M7.10,-7 V-9.3" stroke="#e8731c" stroke-width="1" fill="none" /><path d="M-8.5,-3.10 H-10.8" stroke="#e8731c" stroke-width="1" fill="none" /><path d="M-8.5,0.80 H-10.8" stroke="#e8731c" stroke-width="1" fill="none" /><path d="M-8.5,4.70 H-10.8" stroke="#e8731c" stroke-width="1" fill="none" /><path d="M-8.5,8.60 H-10.8" stroke="#e8731c" stroke-width="1" fill="none" /><g transform="translate(1.3,1.4) scale(0.85)"><path d="M-5,-4 H8 V6 H-5 Z" stroke="#e8e8e8" stroke-width="1.5" fill="none" /></g></g><g transform="translate(1423,39)"><path d="M-8.5,-7 H8.5 M-8.5,-7 V10.5" stroke="#e8731c" stroke-width="1.1" fill="none" /><path d="M-8.50,-7 V-9.3" stroke="#e8731c" stroke-width="1" fill="none" /><path d="M-4.60,-7 V-9.3" stroke="#e8731c" stroke-width="1" fill="none" /><path d="M-0.70,-7 V-9.3" stroke="#e8731c" stroke-width="1" fill="none" /><path d="M3.20,-7 V-9.3" stroke="#e8731c" stroke-width="1" fill="none" /><path d="M7.10,-7 V-9.3" stroke="#e8731c" stroke-width="1" fill="none" /><path d="M-8.5,-3.10 H-10.8" stroke="#e8731c" stroke-width="1" fill="none" /><path d="M-8.5,0.80 H-10.8" stroke="#e8731c" stroke-width="1" fill="none" /><path d="M-8.5,4.70 H-10.8" stroke="#e8731c" stroke-width="1" fill="none" /><path d="M-8.5,8.60 H-10.8" stroke="#e8731c" stroke-width="1" fill="none" /><g transform="translate(1.3,1.4) scale(0.85)"><path d="M-5,2 a6.5,5 0 1 0 13,0 a6.5,5 0 1 0 -13,0" stroke="#e8e8e8" stroke-width="1.5" fill="none" /></g></g><g transform="translate(1457,39)"><path d="M-8.5,-7 H8.5 M-8.5,-7 V10.5" stroke="#e8731c" stroke-width="1.1" fill="none" /><path d="M-8.50,-7 V-9.3" stroke="#e8731c" stroke-width="1" fill="none" /><path d="M-4.60,-7 V-9.3" stroke="#e8731c" stroke-width="1" fill="none" /><path d="M-0.70,-7 V-9.3" stroke="#e8731c" stroke-width="1" fill="none" /><path d="M3.20,-7 V-9.3" stroke="#e8731c" stroke-width="1" fill="none" /><path d="M7.10,-7 V-9.3" stroke="#e8731c" stroke-width="1" fill="none" /><path d="M-8.5,-3.10 H-10.8" stroke="#e8731c" stroke-width="1" fill="none" /><path d="M-8.5,0.80 H-10.8" stroke="#e8731c" stroke-width="1" fill="none" /><path d="M-8.5,4.70 H-10.8" stroke="#e8731c" stroke-width="1" fill="none" /><path d="M-8.5,8.60 H-10.8" stroke="#e8731c" stroke-width="1" fill="none" /><g transform="translate(1.3,1.4) scale(0.85)"><path d="M-6,9 L-4,2 L0,5 L1,-1 L4,2 L8,-5" stroke="#e8e8e8" stroke-width="1.2" fill="none" /></g></g><rect x="8.5" y="63.5" width="51" height="28" rx="3" fill="none" stroke="#4d4e51" stroke-width="1"/><g transform="translate(21,77)"><path d="M-10,-9 H6 V-1 H-10 Z M6,-1 L10,3 L6,7" stroke="#e8e8e8" stroke-width="1.2" fill="none" /><path d="M-10,10 q2,-4 4,0 q2,-4 4,0 q2,-4 4,0 q2,-4 4,0 q2,-4 4,0" stroke="#e8e8e8" stroke-width="1.15" fill="none" /></g><path d="M43,75.5 L48,80.5 L53,75.5" stroke="#e8e8e8" stroke-width="1.3" fill="none" /><g transform="translate(83,78)"><path d="M7.02,0.00 A3.01,3.01 0 1 1 4.96,4.96 A3.01,3.01 0 1 1 0.00,7.02 A3.01,3.01 0 1 1 -4.96,4.96 A3.01,3.01 0 1 1 -7.02,0.00 A3.01,3.01 0 1 1 -4.96,-4.96 A3.01,3.01 0 1 1 -0.00,-7.02 A3.01,3.01 0 1 1 4.96,-4.96 A3.01,3.01 0 1 1 7.02,-0.00 Z" stroke="#e8e8e8" stroke-width="1.15" fill="none" /></g><text x="107" y="83" font-size="15" fill="#e8e8e8" textLength="29" lengthAdjust="spacingAndGlyphs" >Line:</text><rect x="143.5" y="63.5" width="28" height="28" rx="3" fill="none" stroke="#4d4e51" stroke-width="1"/><rect x="149" y="70" width="16" height="16" fill="#0000ff" stroke="#dcdcdc" stroke-width="1"/><rect x="184.5" y="63.5" width="70" height="28" rx="3" fill="none" stroke="#4d4e51" stroke-width="1"/><rect x="202" y="64" width="1" height="27" fill="#4d4e51" /><rect x="185" y="77" width="17" height="1" fill="#4d4e51" /><path d="M189.5,72 L193.0,68.5 L196.5,72" stroke="#e8e8e8" stroke-width="1.2" fill="none" /><path d="M189.5,83 L193.0,86.5 L196.5,83" stroke="#e8e8e8" stroke-width="1.2" fill="none" /><text x="246" y="83" font-size="15" fill="#e8e8e8" text-anchor="end" textLength="32" lengthAdjust="spacingAndGlyphs" >100%</text><rect x="267.5" y="63.5" width="133" height="28" rx="3" fill="none" stroke="#4d4e51" stroke-width="1"/><path d="M283.0,85 A9,9.2 0 1 1 300.0,75.5" stroke="#e4e4e4" stroke-width="2" fill="none"/><path d="M299.0,85 A9,9.2 0 1 1 316.0,75.5" stroke="#e4e4e4" stroke-width="2" fill="none"/><path d="M315.0,85 A9,9.2 0 1 1 332.0,75.5" stroke="#e4e4e4" stroke-width="2" fill="none"/><path d="M331.0,85 A9,9.2 0 1 1 348.0,75.5" stroke="#e4e4e4" stroke-width="2" fill="none"/><path d="M347.0,85 A9,9.2 0 1 1 364.0,75.5" stroke="#e4e4e4" stroke-width="2" fill="none"/><path d="M363,85 Q362,72 370,69.8" stroke="#e4e4e4" stroke-width="2" fill="none"/><path d="M384,75.5 L389,80.5 L394,75.5" stroke="#e8e8e8" stroke-width="1.3" fill="none" /><rect x="413.5" y="63.5" width="51" height="28" rx="3" fill="none" stroke="#4d4e51" stroke-width="1"/><g transform="translate(427,78)"><path d="M-10,-7 q2.5,-2.5 5,0 q2.5,-2.5 5,0 q2.5,-2.5 5,0 q2.5,-2.5 5,0 M-10,0 q2.5,-3 5,0 q2.5,-3 5,0 q2.5,-3 5,0 q2.5,-3 5,0 M-10,9 q5,-8 10,0 q5,-8 10,0" stroke="#e8e8e8" stroke-width="1.15" fill="none" /></g><path d="M448,75.5 L453,80.5 L458,75.5" stroke="#e8e8e8" stroke-width="1.3" fill="none" /><rect x="477.5" y="63.5" width="95" height="28" rx="3" fill="none" stroke="#4d4e51" stroke-width="1"/><rect x="494" y="64" width="1" height="27" fill="#4d4e51" /><rect x="478" y="77" width="16" height="1" fill="#4d4e51" /><path d="M482.0,72 L485.5,68.5 L489.0,72" stroke="#e8e8e8" stroke-width="1.2" fill="none" /><path d="M482.0,83 L485.5,86.5 L489.0,83" stroke="#e8e8e8" stroke-width="1.2" fill="none" /><text x="564" y="83" font-size="15" fill="#e8e8e8" text-anchor="end" textLength="42" lengthAdjust="spacingAndGlyphs" >1.00 pt</text><text x="586" y="83" font-size="15" fill="#e8e8e8" textLength="22" lengthAdjust="spacingAndGlyphs" >Fill:</text><rect x="613.5" y="63.5" width="29" height="28" rx="3" fill="none" stroke="#4d4e51" stroke-width="1"/><rect x="620" y="70" width="16" height="16" fill="#80ffff" stroke="#dcdcdc" stroke-width="1"/><rect x="654.5" y="63.5" width="71" height="28" rx="3" fill="none" stroke="#4d4e51" stroke-width="1"/><rect x="672" y="64" width="1" height="27" fill="#4d4e51" /><rect x="655" y="77" width="17" height="1" fill="#4d4e51" /><path d="M659.5,72 L663.0,68.5 L666.5,72" stroke="#e8e8e8" stroke-width="1.2" fill="none" /><path d="M659.5,83 L663.0,86.5 L666.5,83" stroke="#e8e8e8" stroke-width="1.2" fill="none" /><text x="717" y="83" font-size="15" fill="#e8e8e8" text-anchor="end" textLength="25" lengthAdjust="spacingAndGlyphs" >40%</text><rect x="738" y="63" width="29" height="29" rx="3" fill="#0f4c7f" stroke="#2f6a9c" stroke-width="1" stroke-dasharray="1,1"/><g transform="translate(752,78)"><path d="M-8,9 L-2,3 L1,6 Z" stroke="#e8e8e8" stroke-width="1.15" fill="none" /><path d="M-3,1 L4,-8 M-3,1 L3,7 M0,-3 L7,4 L4,7 M2,5 L6,1" stroke="#c9a93a" stroke-width="1.3" fill="none" /></g><g transform="translate(789,78)"><path d="M-10,-9 H4 V-1 H-10 Z M4,-1 L8,3 L4,7" stroke="#e8e8e8" stroke-width="1.2" fill="none" /><path d="M3,4 L-1,8 M-2,5 V9 H2" stroke="#e8e8e8" stroke-width="1.2" fill="none" /></g><text x="814" y="83" font-size="15" fill="#e8e8e8" textLength="29" lengthAdjust="spacingAndGlyphs" >Line:</text><rect x="850.5" y="63.5" width="28" height="28" rx="3" fill="none" stroke="#4d4e51" stroke-width="1"/><rect x="856" y="70" width="16" height="16" fill="#0000ff" stroke="#dcdcdc" stroke-width="1"/><rect x="891.5" y="63.5" width="70" height="28" rx="3" fill="none" stroke="#4d4e51" stroke-width="1"/><rect x="909" y="64" width="1" height="27" fill="#4d4e51" /><rect x="892" y="77" width="17" height="1" fill="#4d4e51" /><path d="M896.5,72 L900.0,68.5 L903.5,72" stroke="#e8e8e8" stroke-width="1.2" fill="none" /><path d="M896.5,83 L900.0,86.5 L903.5,83" stroke="#e8e8e8" stroke-width="1.2" fill="none" /><text x="953" y="83" font-size="15" fill="#e8e8e8" text-anchor="end" textLength="32" lengthAdjust="spacingAndGlyphs" >100%</text><rect x="975.5" y="63.5" width="132" height="28" rx="3" fill="none" stroke="#4d4e51" stroke-width="1"/><rect x="985" y="76.5" width="95" height="2.2" fill="#f0f0f0" /><path d="M1091,75.5 L1096,80.5 L1101,75.5" stroke="#e8e8e8" stroke-width="1.3" fill="none" /><rect x="1120.5" y="63.5" width="96" height="28" rx="3" fill="none" stroke="#4d4e51" stroke-width="1"/><rect x="1138" y="64" width="1" height="27" fill="#4d4e51" /><rect x="1121" y="77" width="17" height="1" fill="#4d4e51" /><path d="M1125.5,72 L1129.0,68.5 L1132.5,72" stroke="#e8e8e8" stroke-width="1.2" fill="none" /><path d="M1125.5,83 L1129.0,86.5 L1132.5,83" stroke="#e8e8e8" stroke-width="1.2" fill="none" /><text x="1208" y="83" font-size="15" fill="#e8e8e8" text-anchor="end" textLength="42" lengthAdjust="spacingAndGlyphs" >0.00 pt</text><text x="1228" y="83" font-size="15" fill="#e8e8e8" textLength="22" lengthAdjust="spacingAndGlyphs" >Fill:</text><rect x="1257.5" y="63.5" width="28" height="28" rx="3" fill="none" stroke="#4d4e51" stroke-width="1"/><rect x="1264" y="70" width="16" height="16" fill="#80ffff" stroke="#dcdcdc" stroke-width="1"/><rect x="1298.5" y="63.5" width="71" height="28" rx="3" fill="none" stroke="#4d4e51" stroke-width="1"/><rect x="1316" y="64" width="1" height="27" fill="#4d4e51" /><rect x="1299" y="77" width="17" height="1" fill="#4d4e51" /><path d="M1303.5,72 L1307.0,68.5 L1310.5,72" stroke="#e8e8e8" stroke-width="1.2" fill="none" /><path d="M1303.5,83 L1307.0,86.5 L1310.5,83" stroke="#e8e8e8" stroke-width="1.2" fill="none" /><text x="1361" y="83" font-size="15" fill="#e8e8e8" text-anchor="end" textLength="25" lengthAdjust="spacingAndGlyphs" >40%</text><text x="1381" y="83" font-size="15" fill="#e8e8e8" textLength="41" lengthAdjust="spacingAndGlyphs" >Shape:</text><rect x="1429.5" y="63.5" width="58" height="28" rx="3" fill="none" stroke="#4d4e51" stroke-width="1"/><rect x="1434.5" y="70.5" width="20" height="15" fill="none" stroke="#e0e0e0" stroke-width="1.6"/><path d="M1471,75.5 L1476,80.5 L1481,75.5" stroke="#e8e8e8" stroke-width="1.3" fill="none" /><rect x="1499.5" y="63.5" width="30" height="28" rx="3" fill="none" stroke="#4d4e51" stroke-width="1"/><rect x="1504.5" y="68.5" width="20" height="20" fill="none" stroke="#e0e0e0" stroke-width="1.3"/><path d="M1507,86 L1513,80 M1507,82 V86 H1511 M1522,71 L1516,77 M1516,73 V77 H1520" stroke="#e8e8e8" stroke-width="1.15" fill="none" /><text x="1541" y="83" font-size="15" fill="#e8e8e8" textLength="32" lengthAdjust="spacingAndGlyphs" >Font:</text><rect x="1580.5" y="63.5" width="179" height="28" rx="3" fill="none" stroke="#4d4e51" stroke-width="1"/><text x="1589" y="83" font-size="15" fill="#e8e8e8" textLength="59" lengthAdjust="spacingAndGlyphs" >Helvetica</text><path d="M1738,75.5 L1743,80.5 L1748,75.5" stroke="#e8e8e8" stroke-width="1.3" fill="none" /><rect x="1753" y="58" width="41" height="39" fill="#3a3b3e" /><path d="M1771,73 L1775,77.5 L1771,82" stroke="#e0e0e0" stroke-width="1.3" fill="none" /><rect x="33" y="97" width="1" height="868" fill="#111214" /><rect x="0" y="165" width="33" height="33" fill="#175589" /><g transform="translate(16,115)"><path d="M-7,-2 a5.5,5.5 0 1 0 11,0 a5.5,5.5 0 1 0 -11,0 M2.5,3.5 L8,9" stroke="#e6e6e6" stroke-width="1.2" fill="none" /></g><g transform="translate(16,148)"><path d="M-7,-9 H7 V9 H-7 Z M-7,0 H7 M-2,-5 H2 M-2,4 H2" stroke="#e6e6e6" stroke-width="1.15" fill="none" /></g><g transform="translate(16,180)"><path d="M-8,-4 H8 V7 H-8 Z M-3,-4 V-7 H3 V-4 M-8,1 H8 M-2,0 V3 M2,0 V3" stroke="#e6e6e6" stroke-width="1.15" fill="none" /></g><g transform="translate(16,213)"><path d="M-8,-4 L-1,-8 L7,-5 L8,5 L1,9 L-8,5 Z M-4,1 H0 V8" stroke="#e6e6e6" stroke-width="1.15" fill="none" /></g><g transform="translate(16,246)"><path d="M-8,-8 h6 v6 h-6 z M2,-8 h6 v6 h-6 z M-8,2 h6 v6 h-6 z M2,2 h6 v6 h-6 z" stroke="#e6e6e6" stroke-width="1.15" fill="none" /></g><g transform="translate(16,279)"><path d="M-8,0 L-3,-5 H8 V5 H-3 Z" stroke="#e6e6e6" stroke-width="1.15" fill="none" /></g><g transform="translate(16,312)"><path d="M0,-8 L9,-3 L0,2 L-9,-3 Z M-9,1 L0,6 L9,1" stroke="#e6e6e6" stroke-width="1.15" fill="none" /></g><g transform="translate(16,345)"><path d="M-6,-8 H7 V8 H-6 Z M-4,-8 V9 M0,-8 V-1 L2,-3 L4,-1 V-8" stroke="#e6e6e6" stroke-width="1.2" fill="none" /></g><g transform="translate(16,377)"><path d="M-6,-7 H6 L8,2 H-8 Z M-4,-4 H4 V1 H-4 Z M-8,4 H8 M-8,7 H8" stroke="#e6e6e6" stroke-width="1.15" fill="none" /></g><g transform="translate(16,411)"><path d="M-8,9 H8 M-4,4 L-2,-3 L4,-7 L7,-3 L3,3 Z M4,-7 L6,-10 M-1,1 a1,1 0 1 0 .1,0" stroke="#e6e6e6" stroke-width="1.2" fill="none" /></g><g transform="translate(16,443)"><path d="M-9,-4 H9 V4 H-9 Z M-6,-4 V0 M-3,-4 V0 M0,-4 V1 M3,-4 V0 M6,-4 V0" stroke="#e6e6e6" stroke-width="1.15" fill="none" /></g><path d="M24.49,475.58 L24.41,477.25 L22.24,478.23 L21.69,479.41 L22.30,481.71 L21.06,482.83 L18.83,481.99 L17.61,482.43 L16.42,484.49 L14.75,484.41 L13.77,482.24 L12.59,481.69 L10.29,482.30 L9.17,481.06 L10.01,478.83 L9.57,477.61 L7.51,476.42 L7.59,474.75 L9.76,473.77 L10.31,472.59 L9.70,470.29 L10.94,469.17 L13.17,470.01 L14.39,469.57 L15.58,467.51 L17.25,467.59 L18.23,469.76 L19.41,470.31 L21.71,469.70 L22.83,470.94 L21.99,473.17 L22.43,474.39 Z" stroke="#e6e6e6" stroke-width="1.3" fill="none" /><circle cx="16" cy="476" r="3.57" stroke="#e6e6e6" stroke-width="1.3" fill="none"/><g transform="translate(16,509)"><path d="M-8,-8 H8 V3 M-8,-8 V9 H0 M-2,-8 V-3 H2 M-8,2 H-3 V5 M4,3 H8 M-4,9 V6" stroke="#e6e6e6" stroke-width="1.15" fill="none" /></g><g transform="translate(16,541)"><path d="M-8,-8 H6 V-2 M-8,-8 V9 H4 M-5,-4 H3 M-5,0 H2 M-5,4 H0 M8,-3 L10,-1 L2,7 L-1,8 L0,5 Z" stroke="#e6e6e6" stroke-width="1.2" fill="none" /></g><rect x="0" y="931" width="33" height="33" fill="#175589" /><g transform="translate(16,948)"><path d="M-3,-5 H8 M-3,0 H8 M-3,5 H8" stroke="#e6e6e6" stroke-width="1.5" fill="none" /><rect x="-8" y="-6" width="2" height="2" fill="#e6e6e6" /><rect x="-8" y="-1" width="2" height="2" fill="#e6e6e6" /><rect x="-8" y="4" width="2" height="2" fill="#e6e6e6" /></g><rect x="34" y="169" width="418" height="51" fill="#d3d3cb" /><rect x="51.5" y="177.5" width="15" height="14" fill="none" stroke="#111" stroke-width="1.2"/><text x="59" y="189" font-size="11" fill="#111" text-anchor="middle" >A</text><rect x="51.5" y="194.5" width="17" height="17" fill="none" stroke="#111" stroke-width="1.2"/><text x="52" y="204" font-size="11" fill="#111" >a</text><rect x="66" y="177" width="13" height="13" fill="#5b5b5b" /><text x="72.5" y="188" font-size="11" fill="#f4f4f4" text-anchor="middle" >1</text><g transform="translate(103,185)"><path d="M5.46,0.00 A2.34,2.34 0 1 1 3.86,3.86 A2.34,2.34 0 1 1 0.00,5.46 A2.34,2.34 0 1 1 -3.86,3.86 A2.34,2.34 0 1 1 -5.46,0.00 A2.34,2.34 0 1 1 -3.86,-3.86 A2.34,2.34 0 1 1 -0.00,-5.46 A2.34,2.34 0 1 1 3.86,-3.86 A2.34,2.34 0 1 1 5.46,-0.00 Z" stroke="#111" stroke-width="1.1" fill="none" /></g><g transform="translate(107,201)"><path d="M8.58,0.00 A5.65,5.65 0 1 1 2.65,8.16 A5.65,5.65 0 1 1 -6.94,5.04 A5.65,5.65 0 1 1 -6.94,-5.04 A5.65,5.65 0 1 1 2.65,-8.16 A5.65,5.65 0 1 1 8.58,-0.00 Z" stroke="#f01010" stroke-width="1.1" fill="none" /></g><rect x="108" y="177" width="13" height="13" fill="#5b5b5b" /><text x="114.5" y="188" font-size="11" fill="#f4f4f4" text-anchor="middle" >2</text><path d="M139,177 H151 V184 H139 Z M151,184 L154,187 L151,190 M139,191 q1.5,-2 3,0 q1.5,-2 3,0 q1.5,-2 3,0 q1.5,-2 3,0" stroke="#111" stroke-width="1.1" fill="none" /><g transform="translate(139,200)"><path d="M7.02,0.00 A3.93,3.93 0 1 1 3.51,6.08 A3.93,3.93 0 1 1 -3.51,6.08 A3.93,3.93 0 1 1 -7.02,0.00 A3.93,3.93 0 1 1 -3.51,-6.08 A3.93,3.93 0 1 1 3.51,-6.08 A3.93,3.93 0 1 1 7.02,-0.00 Z" stroke="#1a1aff" stroke-width="1.1" fill="#80ffff" /></g><rect x="149" y="194" width="11" height="11" fill="#80ffff" /><text x="150" y="203" font-size="11" fill="#111" >a</text><rect x="152" y="177" width="13" height="13" fill="#5b5b5b" /><text x="158.5" y="188" font-size="11" fill="#f4f4f4" text-anchor="middle" >3</text><path d="M183,176 H199 M183,176 V194" stroke="#8a5cc4" stroke-width="1.1" fill="none" /><path d="M187,193 V186 L193,181 H200 V193 Z" stroke="#111" stroke-width="1.2" fill="none" /><path d="M183,204 L192,196 L201,204 V213 H183 Z" stroke="#2ee02e" stroke-width="1" fill="#f4ab72" /><rect x="196" y="177" width="13" height="13" fill="#5b5b5b" /><text x="202.5" y="188" font-size="11" fill="#f4f4f4" text-anchor="middle" >4</text><g transform="translate(235,186)"><path d="M4.68,0.00 A2.01,2.01 0 1 1 3.31,3.31 A2.01,2.01 0 1 1 0.00,4.68 A2.01,2.01 0 1 1 -3.31,3.31 A2.01,2.01 0 1 1 -4.68,0.00 A2.01,2.01 0 1 1 -3.31,-3.31 A2.01,2.01 0 1 1 -0.00,-4.68 A2.01,2.01 0 1 1 3.31,-3.31 A2.01,2.01 0 1 1 4.68,-0.00 Z" stroke="#111" stroke-width="1.1" fill="none" /></g><g transform="translate(238,201)"><path d="M7.80,0.00 A5.13,5.13 0 1 1 2.41,7.42 A5.13,5.13 0 1 1 -6.31,4.58 A5.13,5.13 0 1 1 -6.31,-4.58 A5.13,5.13 0 1 1 2.41,-7.42 A5.13,5.13 0 1 1 7.80,-0.00 Z" stroke="#1a1aff" stroke-width="1.1" fill="#00ee00" /></g><rect x="244" y="177" width="13" height="13" fill="#5b5b5b" /><text x="250.5" y="188" font-size="11" fill="#f4f4f4" text-anchor="middle" >5</text><path d="M270,194 L287,177" stroke="#111" stroke-width="1.4" fill="none" /><path d="M289,175 L281,178 L286,183 Z" stroke="#111" stroke-width="1" fill="#111" /><path d="M267,204 H290" stroke="#ff0000" stroke-width="1.8" fill="none" /><circle cx="268" cy="204" r="2.3" fill="#f00"/><path d="M285,200 L293,204 L285,208 Z" stroke="#f00" stroke-width="1" fill="#f00" /><rect x="284" y="177" width="13" height="13" fill="#5b5b5b" /><text x="290.5" y="188" font-size="11" fill="#f4f4f4" text-anchor="middle" >6</text><path d="M315,194 L332,177" stroke="#111" stroke-width="1.4" fill="none" /><path d="M334,175 L326,178 L331,183 Z" stroke="#111" stroke-width="1" fill="#111" /><path d="M313,204 H330" stroke="#ff0000" stroke-width="1.8" fill="none" stroke-dasharray="5,3"/><path d="M330,201 L336,204 L330,207 Z" stroke="#f00" stroke-width="1" fill="#f00" /><rect x="328" y="177" width="13" height="13" fill="#5b5b5b" /><text x="334.5" y="188" font-size="11" fill="#f4f4f4" text-anchor="middle" >7</text><rect x="350" y="190" width="14" height="11" fill="#a4dcb0" stroke="#4a6a8a" stroke-width="1"/><path d="M364,190 L368,189 H372" stroke="#e03030" stroke-width="0.8" fill="none" stroke-dasharray="1.5,1"/><rect x="372" y="177" width="13" height="13" fill="#5b5b5b" /><text x="378.5" y="188" font-size="11" fill="#f4f4f4" text-anchor="middle" >8</text><path d="M397,180 H428 V198 H397 Z" stroke="#f00" stroke-width="1.2" fill="none" stroke-dasharray="1.5,1"/><path d="M399,186 H410 L415,190 L420,186 H426 V196 H415 L411,199 V206 L409,208 H400 V198 L404,195 L399,192 Z" stroke="#1a3aff" stroke-width="1.3" fill="#c8dce0" /><rect x="416" y="177" width="13" height="13" fill="#5b5b5b" /><text x="422.5" y="188" font-size="11" fill="#f4f4f4" text-anchor="middle" >9</text><rect x="34" y="319" width="418" height="51" fill="#d3d3cb" /><path d="M51,327 H63 V334 H51 Z M63,334 L66,337 L63,340 M51,343 q1.5,-2 3,0 q1.5,-2 3,0 q1.5,-2 3,0 q1.5,-2 3,0" stroke="#111" stroke-width="1.1" fill="none" /><g transform="translate(53,350)"><path d="M7.80,0.00 A4.37,4.37 0 1 1 3.90,6.75 A4.37,4.37 0 1 1 -3.90,6.75 A4.37,4.37 0 1 1 -7.80,0.00 A4.37,4.37 0 1 1 -3.90,-6.75 A4.37,4.37 0 1 1 3.90,-6.75 A4.37,4.37 0 1 1 7.80,-0.00 Z" stroke="#f00" stroke-width="1.1" fill="none" /></g><text x="62" y="355" font-size="11" fill="#f00" >a</text><rect x="94.5" y="327.5" width="16" height="16" fill="none" stroke="#111" stroke-width="1.2"/><text x="102.5" y="340" font-size="11" fill="#111" text-anchor="middle" >A</text><text x="97" y="353" font-size="12" fill="#f00" >a</text><path d="M139,344 L144,338 L148,342 Z" stroke="#111" stroke-width="1.2" fill="none" /><path d="M143,337 L148,328 M143,337 L150,343 M146,333 L153,340" stroke="#b8a830" stroke-width="1.2" fill="none" /><rect x="137" y="348" width="22" height="11" fill="#f00" /><path d="M183,344 L198,329" stroke="#111" stroke-width="1.4" fill="none" /><path d="M200,327 L192,330 L197,335 Z" stroke="#111" stroke-width="1" fill="#111" /><path d="M181,353 H203" stroke="#f00" stroke-width="1.2" fill="none" /><circle cx="236" cy="345" r="13" fill="#e48080" stroke="#f00" stroke-width="2"/><text x="235" y="349" font-size="10" fill="#111" text-anchor="middle" >1</text><rect x="240" y="349" width="12" height="12" fill="#5a4a48" /><path d="M249,352 L244,355 L249,358 Z" stroke="#fff" stroke-width="1" fill="#fff" /><g transform="translate(279,335)"><path d="M5.46,0.00 A2.34,2.34 0 1 1 3.86,3.86 A2.34,2.34 0 1 1 0.00,5.46 A2.34,2.34 0 1 1 -3.86,3.86 A2.34,2.34 0 1 1 -5.46,0.00 A2.34,2.34 0 1 1 -3.86,-3.86 A2.34,2.34 0 1 1 -0.00,-5.46 A2.34,2.34 0 1 1 3.86,-3.86 A2.34,2.34 0 1 1 5.46,-0.00 Z" stroke="#111" stroke-width="1.1" fill="none" /></g><g transform="translate(283,351)"><path d="M8.58,0.00 A5.65,5.65 0 1 1 2.65,8.16 A5.65,5.65 0 1 1 -6.94,5.04 A5.65,5.65 0 1 1 -6.94,-5.04 A5.65,5.65 0 1 1 2.65,-8.16 A5.65,5.65 0 1 1 8.58,-0.00 Z" stroke="#f00" stroke-width="1.1" fill="none" /></g><path d="M315,327 H327 V334 H315 Z M327,334 L331,338 L325,343 M325,340 V343 H328" stroke="#111" stroke-width="1.1" fill="none" /><text x="316" y="355" font-size="11" fill="#f00" >a</text><path d="M350,336 H374 M352,333 V339 M372,333 V339 M368,331 L384,362 M350,340 L362,362 M358,354 H380 M358,350 V364 M379,350 V364" stroke="#f00" stroke-width="1.1" fill="none" /><path d="M350,336 H374 M352,333 V339 M372,333 V339" stroke="#111" stroke-width="1.2" fill="none" /><path d="M403,344 L418,329" stroke="#111" stroke-width="1.4" fill="none" /><path d="M420,327 L412,330 L417,335 Z" stroke="#111" stroke-width="1" fill="#111" /><path d="M401,354 H416" stroke="#f00" stroke-width="1.8" fill="none" stroke-dasharray="5,3"/><path d="M416,351 L422,354 L416,357 Z" stroke="#f00" stroke-width="1" fill="#f00" /><text x="45" y="123" font-size="17" fill="#ffffff" font-weight="bold" textLength="85" lengthAdjust="spacingAndGlyphs" >Tool Chest</text><path d="M139.5,116.25 L143,119.75 L146.5,116.25" stroke="#e6e6e6" stroke-width="1.2" fill="none" /><rect x="432" y="221" width="20" height="66" fill="#2a2b2e" /><rect x="432" y="370" width="20" height="197" fill="#2a2b2e" /><rect x="432" y="468" width="20" height="33" fill="#1b3550" /><path d="M44.5,151.0 L48.5,155.0 L52.5,151.0" stroke="#e6e6e6" stroke-width="1.1" fill="none" /><text x="63" y="157" font-size="16" fill="#e6e6e6" textLength="57" lengthAdjust="spacingAndGlyphs" >My Tools</text><path d="M424.49,150.58 L424.41,152.25 L422.24,153.23 L421.69,154.41 L422.30,156.71 L421.06,157.83 L418.83,156.99 L417.61,157.43 L416.42,159.49 L414.75,159.41 L413.77,157.24 L412.59,156.69 L410.29,157.30 L409.17,156.06 L410.01,153.83 L409.57,152.61 L407.51,151.42 L407.59,149.75 L409.76,148.77 L410.31,147.59 L409.70,145.29 L410.94,144.17 L413.17,145.01 L414.39,144.57 L415.58,142.51 L417.25,142.59 L418.23,144.76 L419.41,145.31 L421.71,144.70 L422.83,145.94 L421.99,148.17 L422.43,149.39 Z" stroke="#e6e6e6" stroke-width="1.3" fill="none" /><circle cx="416" cy="151" r="3.57" stroke="#e6e6e6" stroke-width="1.3" fill="none"/><path d="M46.5,234 L50.5,238 L46.5,242" stroke="#e6e6e6" stroke-width="1.1" fill="none" /><text x="63" y="242" font-size="16" fill="#e6e6e6" textLength="82" lengthAdjust="spacingAndGlyphs" >Recent Tools</text><path d="M424.49,235.58 L424.41,237.25 L422.24,238.23 L421.69,239.41 L422.30,241.71 L421.06,242.83 L418.83,241.99 L417.61,242.43 L416.42,244.49 L414.75,244.41 L413.77,242.24 L412.59,241.69 L410.29,242.30 L409.17,241.06 L410.01,238.83 L409.57,237.61 L407.51,236.42 L407.59,234.75 L409.76,233.77 L410.31,232.59 L409.70,230.29 L410.94,229.17 L413.17,230.01 L414.39,229.57 L415.58,227.51 L417.25,227.59 L418.23,229.76 L419.41,230.31 L421.71,229.70 L422.83,230.94 L421.99,233.17 L422.43,234.39 Z" stroke="#e6e6e6" stroke-width="1.3" fill="none" /><circle cx="416" cy="236" r="3.57" stroke="#e6e6e6" stroke-width="1.3" fill="none"/><path d="M440.0,232 L444.0,236 L440.0,240" stroke="#e6e6e6" stroke-width="1.2" fill="none" /><path d="M46.5,267 L50.5,271 L46.5,275" stroke="#e6e6e6" stroke-width="1.1" fill="none" /><text x="63" y="275" font-size="16" fill="#e6e6e6" textLength="128" lengthAdjust="spacingAndGlyphs" >Accessibility Review</text><path d="M424.49,268.58 L424.41,270.25 L422.24,271.23 L421.69,272.41 L422.30,274.71 L421.06,275.83 L418.83,274.99 L417.61,275.43 L416.42,277.49 L414.75,277.41 L413.77,275.24 L412.59,274.69 L410.29,275.30 L409.17,274.06 L410.01,271.83 L409.57,270.61 L407.51,269.42 L407.59,267.75 L409.76,266.77 L410.31,265.59 L409.70,263.29 L410.94,262.17 L413.17,263.01 L414.39,262.57 L415.58,260.51 L417.25,260.59 L418.23,262.76 L419.41,263.31 L421.71,262.70 L422.83,263.94 L421.99,266.17 L422.43,267.39 Z" stroke="#e6e6e6" stroke-width="1.3" fill="none" /><circle cx="416" cy="269" r="3.57" stroke="#e6e6e6" stroke-width="1.3" fill="none"/><path d="M440.0,265 L444.0,269 L440.0,273" stroke="#e6e6e6" stroke-width="1.2" fill="none" /><path d="M44.5,302.0 L48.5,306.0 L52.5,302.0" stroke="#e6e6e6" stroke-width="1.1" fill="none" /><text x="63" y="308" font-size="16" fill="#e6e6e6" textLength="106" lengthAdjust="spacingAndGlyphs" >Architect Review</text><path d="M424.49,301.58 L424.41,303.25 L422.24,304.23 L421.69,305.41 L422.30,307.71 L421.06,308.83 L418.83,307.99 L417.61,308.43 L416.42,310.49 L414.75,310.41 L413.77,308.24 L412.59,307.69 L410.29,308.30 L409.17,307.06 L410.01,304.83 L409.57,303.61 L407.51,302.42 L407.59,300.75 L409.76,299.77 L410.31,298.59 L409.70,296.29 L410.94,295.17 L413.17,296.01 L414.39,295.57 L415.58,293.51 L417.25,293.59 L418.23,295.76 L419.41,296.31 L421.71,295.70 L422.83,296.94 L421.99,299.17 L422.43,300.39 Z" stroke="#e6e6e6" stroke-width="1.3" fill="none" /><circle cx="416" cy="302" r="3.57" stroke="#e6e6e6" stroke-width="1.3" fill="none"/><path d="M46.5,384 L50.5,388 L46.5,392" stroke="#e6e6e6" stroke-width="1.1" fill="none" /><text x="63" y="392" font-size="16" fill="#e6e6e6" textLength="115" lengthAdjust="spacingAndGlyphs" >Contractor Review</text><path d="M424.49,385.58 L424.41,387.25 L422.24,388.23 L421.69,389.41 L422.30,391.71 L421.06,392.83 L418.83,391.99 L417.61,392.43 L416.42,394.49 L414.75,394.41 L413.77,392.24 L412.59,391.69 L410.29,392.30 L409.17,391.06 L410.01,388.83 L409.57,387.61 L407.51,386.42 L407.59,384.75 L409.76,383.77 L410.31,382.59 L409.70,380.29 L410.94,379.17 L413.17,380.01 L414.39,379.57 L415.58,377.51 L417.25,377.59 L418.23,379.76 L419.41,380.31 L421.71,379.70 L422.83,380.94 L421.99,383.17 L422.43,384.39 Z" stroke="#e6e6e6" stroke-width="1.3" fill="none" /><circle cx="416" cy="386" r="3.57" stroke="#e6e6e6" stroke-width="1.3" fill="none"/><path d="M440.0,382 L444.0,386 L440.0,390" stroke="#e6e6e6" stroke-width="1.2" fill="none" /><path d="M46.5,416 L50.5,420 L46.5,424" stroke="#e6e6e6" stroke-width="1.1" fill="none" /><text x="63" y="424" font-size="16" fill="#e6e6e6" textLength="101" lengthAdjust="spacingAndGlyphs" >Engineer Review</text><path d="M424.49,417.58 L424.41,419.25 L422.24,420.23 L421.69,421.41 L422.30,423.71 L421.06,424.83 L418.83,423.99 L417.61,424.43 L416.42,426.49 L414.75,426.41 L413.77,424.24 L412.59,423.69 L410.29,424.30 L409.17,423.06 L410.01,420.83 L409.57,419.61 L407.51,418.42 L407.59,416.75 L409.76,415.77 L410.31,414.59 L409.70,412.29 L410.94,411.17 L413.17,412.01 L414.39,411.57 L415.58,409.51 L417.25,409.59 L418.23,411.76 L419.41,412.31 L421.71,411.70 L422.83,412.94 L421.99,415.17 L422.43,416.39 Z" stroke="#e6e6e6" stroke-width="1.3" fill="none" /><circle cx="416" cy="418" r="3.57" stroke="#e6e6e6" stroke-width="1.3" fill="none"/><path d="M440.0,414 L444.0,418 L440.0,422" stroke="#e6e6e6" stroke-width="1.2" fill="none" /><path d="M46.5,449 L50.5,453 L46.5,457" stroke="#e6e6e6" stroke-width="1.1" fill="none" /><text x="63" y="457" font-size="16" fill="#e6e6e6" textLength="55" lengthAdjust="spacingAndGlyphs" >Takeoffs</text><path d="M424.49,450.58 L424.41,452.25 L422.24,453.23 L421.69,454.41 L422.30,456.71 L421.06,457.83 L418.83,456.99 L417.61,457.43 L416.42,459.49 L414.75,459.41 L413.77,457.24 L412.59,456.69 L410.29,457.30 L409.17,456.06 L410.01,453.83 L409.57,452.61 L407.51,451.42 L407.59,449.75 L409.76,448.77 L410.31,447.59 L409.70,445.29 L410.94,444.17 L413.17,445.01 L414.39,444.57 L415.58,442.51 L417.25,442.59 L418.23,444.76 L419.41,445.31 L421.71,444.70 L422.83,445.94 L421.99,448.17 L422.43,449.39 Z" stroke="#e6e6e6" stroke-width="1.3" fill="none" /><circle cx="416" cy="451" r="3.57" stroke="#e6e6e6" stroke-width="1.3" fill="none"/><path d="M440.0,447 L444.0,451 L440.0,455" stroke="#e6e6e6" stroke-width="1.2" fill="none" /><path d="M46.5,482 L50.5,486 L46.5,490" stroke="#e6e6e6" stroke-width="1.1" fill="none" /><text x="63" y="490" font-size="16" fill="#e6e6e6" textLength="139" lengthAdjust="spacingAndGlyphs" >Construction Symbols</text><path d="M424.49,483.58 L424.41,485.25 L422.24,486.23 L421.69,487.41 L422.30,489.71 L421.06,490.83 L418.83,489.99 L417.61,490.43 L416.42,492.49 L414.75,492.41 L413.77,490.24 L412.59,489.69 L410.29,490.30 L409.17,489.06 L410.01,486.83 L409.57,485.61 L407.51,484.42 L407.59,482.75 L409.76,481.77 L410.31,480.59 L409.70,478.29 L410.94,477.17 L413.17,478.01 L414.39,477.57 L415.58,475.51 L417.25,475.59 L418.23,477.76 L419.41,478.31 L421.71,477.70 L422.83,478.94 L421.99,481.17 L422.43,482.39 Z" stroke="#e6e6e6" stroke-width="1.3" fill="none" /><circle cx="416" cy="484" r="3.57" stroke="#e6e6e6" stroke-width="1.3" fill="none"/><path d="M440.0,480 L444.0,484 L440.0,488" stroke="#e6e6e6" stroke-width="1.2" fill="none" /><path d="M46.5,515 L50.5,519 L46.5,523" stroke="#e6e6e6" stroke-width="1.1" fill="none" /><text x="63" y="523" font-size="16" fill="#e6e6e6" textLength="50" lengthAdjust="spacingAndGlyphs" >Vessels</text><path d="M424.49,516.58 L424.41,518.25 L422.24,519.23 L421.69,520.41 L422.30,522.71 L421.06,523.83 L418.83,522.99 L417.61,523.43 L416.42,525.49 L414.75,525.41 L413.77,523.24 L412.59,522.69 L410.29,523.30 L409.17,522.06 L410.01,519.83 L409.57,518.61 L407.51,517.42 L407.59,515.75 L409.76,514.77 L410.31,513.59 L409.70,511.29 L410.94,510.17 L413.17,511.01 L414.39,510.57 L415.58,508.51 L417.25,508.59 L418.23,510.76 L419.41,511.31 L421.71,510.70 L422.83,511.94 L421.99,514.17 L422.43,515.39 Z" stroke="#e6e6e6" stroke-width="1.3" fill="none" /><circle cx="416" cy="517" r="3.57" stroke="#e6e6e6" stroke-width="1.3" fill="none"/><path d="M440.0,513 L444.0,517 L440.0,521" stroke="#e6e6e6" stroke-width="1.2" fill="none" /><path d="M46.5,548 L50.5,552 L46.5,556" stroke="#e6e6e6" stroke-width="1.1" fill="none" /><text x="63" y="556" font-size="16" fill="#e6e6e6" textLength="139" lengthAdjust="spacingAndGlyphs" >Plumbing Pipe Fittings</text><path d="M424.49,549.58 L424.41,551.25 L422.24,552.23 L421.69,553.41 L422.30,555.71 L421.06,556.83 L418.83,555.99 L417.61,556.43 L416.42,558.49 L414.75,558.41 L413.77,556.24 L412.59,555.69 L410.29,556.30 L409.17,555.06 L410.01,552.83 L409.57,551.61 L407.51,550.42 L407.59,548.75 L409.76,547.77 L410.31,546.59 L409.70,544.29 L410.94,543.17 L413.17,544.01 L414.39,543.57 L415.58,541.51 L417.25,541.59 L418.23,543.76 L419.41,544.31 L421.71,543.70 L422.83,544.94 L421.99,547.17 L422.43,548.39 Z" stroke="#e6e6e6" stroke-width="1.3" fill="none" /><circle cx="416" cy="550" r="3.57" stroke="#e6e6e6" stroke-width="1.3" fill="none"/><path d="M440.0,546 L444.0,550 L440.0,554" stroke="#e6e6e6" stroke-width="1.2" fill="none" /><path d="M45,951 L49,944 L53,951 Z" stroke="#e6e6e6" stroke-width="1.15" fill="none" /><rect x="73" y="946" width="339" height="4" rx="2" fill="#434447"/><circle cx="149" cy="948" r="6.8" fill="#737476"/><path d="M427,953 L434.5,940 L442,953 Z" stroke="#e6e6e6" stroke-width="1.2" fill="none" /><rect x="452" y="97" width="1273" height="35" fill="#1f2023" /><rect x="453" y="99" width="166" height="33" fill="#2e2f32" /><text x="462" y="120" font-size="15" fill="#f0f0f0" textLength="120" lengthAdjust="spacingAndGlyphs" >.Sample Floor_Plan</text><path d="M598,110 L609,121 M609,110 L598,121" stroke="#e8e8e8" stroke-width="1.3" fill="none" /><path d="M1701.5,112.75 L1706,117.25 L1710.5,112.75" stroke="#e6e6e6" stroke-width="1.4" fill="none" /><rect x="1724" y="97" width="1" height="868" fill="#111214" /><rect x="1762.0" y="105" width="1.5" height="1.5" fill="#5a5a5a" /><rect x="1765.3" y="105" width="1.5" height="1.5" fill="#5a5a5a" /><rect x="1768.6" y="105" width="1.5" height="1.5" fill="#5a5a5a" /><rect x="1771.9" y="105" width="1.5" height="1.5" fill="#5a5a5a" /><rect x="1775.2" y="105" width="1.5" height="1.5" fill="#5a5a5a" /><rect x="1778.5" y="105" width="1.5" height="1.5" fill="#5a5a5a" /><rect x="1781.8" y="105" width="1.5" height="1.5" fill="#5a5a5a" /><rect x="1785.1" y="105" width="1.5" height="1.5" fill="#5a5a5a" /><rect x="1788.4" y="105" width="1.5" height="1.5" fill="#5a5a5a" /><rect x="1791.7" y="105" width="1.5" height="1.5" fill="#5a5a5a" /><rect x="1761" y="453" width="1.5" height="1.5" fill="#5a5a5a" /><rect x="1764" y="453" width="1.5" height="1.5" fill="#5a5a5a" /><rect x="1767" y="453" width="1.5" height="1.5" fill="#5a5a5a" /><rect x="1770" y="453" width="1.5" height="1.5" fill="#5a5a5a" /><rect x="1773" y="453" width="1.5" height="1.5" fill="#5a5a5a" /><rect x="1776" y="453" width="1.5" height="1.5" fill="#5a5a5a" /><rect x="1779" y="453" width="1.5" height="1.5" fill="#5a5a5a" /><rect x="1782" y="453" width="1.5" height="1.5" fill="#5a5a5a" /><rect x="1785" y="453" width="1.5" height="1.5" fill="#5a5a5a" /><rect x="1788" y="453" width="1.5" height="1.5" fill="#5a5a5a" /><rect x="1761.0" y="733" width="1.5" height="1.5" fill="#5a5a5a" /><rect x="1763.9" y="733" width="1.5" height="1.5" fill="#5a5a5a" /><rect x="1766.8" y="733" width="1.5" height="1.5" fill="#5a5a5a" /><rect x="1769.7" y="733" width="1.5" height="1.5" fill="#5a5a5a" /><rect x="1772.6" y="733" width="1.5" height="1.5" fill="#5a5a5a" /><rect x="1775.5" y="733" width="1.5" height="1.5" fill="#5a5a5a" /><rect x="1778.4" y="733" width="1.5" height="1.5" fill="#5a5a5a" /><rect x="1781.3" y="733" width="1.5" height="1.5" fill="#5a5a5a" /><rect x="1784.2" y="733" width="1.5" height="1.5" fill="#5a5a5a" /><rect x="1787.1" y="733" width="1.5" height="1.5" fill="#5a5a5a" /><g transform="translate(1778,127)"><rect x="-8" y="-8" width="16" height="16" fill="none" stroke="#e6e6e6" stroke-width="1.4"/><text x="0" y="4.5" font-size="11" fill="#e6e6e6" text-anchor="middle" font-weight="bold" >A</text></g><g transform="translate(1778,161)"><circle cx="0" cy="0" r="8" stroke="#e6e6e6" stroke-width="1.4" fill="none"/><text x="0" y="4.5" font-size="11" fill="#e6e6e6" text-anchor="middle" font-weight="bold" >A</text></g><g transform="translate(1778,196)"><path d="M-8,9 L-2,3 L1,6 Z" stroke="#e6e6e6" stroke-width="1.15" fill="none" /><path d="M-3,1 L4,-8 M-3,1 L3,7 M0,-3 L7,4 L4,7" stroke="#c9a93a" stroke-width="1.3" fill="none" /></g><g transform="translate(1778,230)"><path d="M-8,9 L-2,3 L1,6 Z" stroke="#e6e6e6" stroke-width="1.15" fill="none" /><path d="M-3,1 L4,-8 M-3,1 L3,7 M0,-3 L7,2 L9,0" stroke="#3a8ee0" stroke-width="1.4" fill="none" /></g><g transform="translate(1778,263)"><path d="M-8,-8 H5 V-1 H-8 Z M5,-1 L8,2 L5,5 M-8,6 q1.5,-3 3,0 q1.5,-3 3,0 q1.5,-3 3,0 q1.5,-3 3,0 q1.5,-3 3,0" stroke="#e6e6e6" stroke-width="1.15" fill="none" /></g><g transform="translate(1778,296)"><path d="M7.02,0.00 A3.01,3.01 0 1 1 4.96,4.96 A3.01,3.01 0 1 1 0.00,7.02 A3.01,3.01 0 1 1 -4.96,4.96 A3.01,3.01 0 1 1 -7.02,0.00 A3.01,3.01 0 1 1 -4.96,-4.96 A3.01,3.01 0 1 1 -0.00,-7.02 A3.01,3.01 0 1 1 4.96,-4.96 A3.01,3.01 0 1 1 7.02,-0.00 Z" stroke="#e6e6e6" stroke-width="1.15" fill="none" /></g><g transform="translate(1778,329)"><path d="M-8,-8 H4 V-1 H-8 Z M4,-1 L8,3 L3,8 M2,5 V8 H5" stroke="#e6e6e6" stroke-width="1.15" fill="none" /></g><g transform="translate(1778,363)"><path d="M-8,6 H5 V2 H-8 Z M-8,9 H5 M-3,2 V-3 M0,2 V-3 M-4,-5 a2.5,2.5 0 1 0 5,0 a2.5,2.5 0 1 0 -5,0" stroke="#e6e6e6" stroke-width="1.15" fill="none" /><path d="M9,-1.5 L12,1.5 L15,-1.5" stroke="#e6e6e6" stroke-width="1.1" fill="none" /></g><g transform="translate(1778,397)"><path d="M-8,-7 H8 V7 H-8 Z M-8,5 L-3,-1 L1,3 L4,0 L8,4" stroke="#e6e6e6" stroke-width="1.15" fill="none" /><circle cx="3" cy="-3" r="1.5" fill="#e6e6e6"/></g><g transform="translate(1778,432)"><path d="M-5,-5 H8 V9 H-5 Z" stroke="#e6e6e6" stroke-width="1.2" fill="none" stroke-dasharray="2,2"/><path d="M-9,-5 H-1 M-5,-9 V-1" stroke="#e6e6e6" stroke-width="1.15" fill="none" /></g><g transform="translate(1773.5,476)"><path d="M-8,8 L8,-8" stroke="#e6e6e6" stroke-width="1.5" fill="none" /></g><g transform="translate(1773.5,509)"><path d="M-8,9 L7,-6" stroke="#e6e6e6" stroke-width="1.5" fill="none" /><path d="M9,-8 L2,-6 L7,-1 Z" stroke="#e6e6e6" stroke-width="1" fill="#e6e6e6" /></g><g transform="translate(1773.5,542)"><path d="M-7,8 Q-6,-6 8,-8" stroke="#e6e6e6" stroke-width="1.2" fill="none" /></g><g transform="translate(1773.5,576)"><path d="M-8,8 L-5,0 L0,3 L2,-3 L5,-1 L8,-7" stroke="#e6e6e6" stroke-width="1.2" fill="none" /></g><g transform="translate(1773.5,610)"><path d="M-8,-3 V3 M8,-3 V3 M-7,0 H7 M-5,-2 L-7,0 L-5,2 M5,-2 L7,0 L5,2" stroke="#e6e6e6" stroke-width="1.2" fill="none" /></g><g transform="translate(1773.5,643)"><rect x="-8" y="-6" width="16" height="12" fill="none" stroke="#e6e6e6" stroke-width="1.4"/></g><g transform="translate(1773.5,677)"><ellipse cx="0" cy="0" rx="8" ry="6" stroke="#e6e6e6" stroke-width="1.4" fill="none"/></g><g transform="translate(1773.5,711)"><path d="M-6,-8 H7 L1,0 L7,8 H-6 Z" stroke="#e6e6e6" stroke-width="1.2" fill="none" /></g><g transform="translate(1773.5,756)"><path d="M-7,8 L-5,-3 H5 L7,8 Z M-3,-3 a3,3 0 0 1 6,0" stroke="#c9a93a" stroke-width="1.4" fill="none" /></g><g transform="translate(1773.5,789)"><path d="M-8,-8 H8 V8 H-8 Z" stroke="#e6e6e6" stroke-width="1.1" fill="none" stroke-dasharray="2,2"/><path d="M-3,-5 a2,2 0 1 0 0.1,0 M3,5 a2,2 0 1 0 0.1,0 M-2,-3 L3,3 M3,-5 L-3,5" stroke="#e6e6e6" stroke-width="1.2" fill="none" /></g><g transform="translate(1773.5,822)"><path d="M-8,-8 H8 V1 M-8,-8 V9 H-1 M-2,-8 V-3 H2 M-8,2 H-3 V5" stroke="#e6e6e6" stroke-width="1.15" fill="none" /><path d="M5,3 V11 M1,7 H9" stroke="#2e8ad8" stroke-width="1.4" fill="none" /></g><g transform="translate(1773.5,856)"><path d="M-8,4 L-4,0 a2.8,2.8 0 0 1 4,4 L-4,8 a2.8,2.8 0 0 1 -4,-4 M8,-4 L4,0 a2.8,2.8 0 0 1 -4,-4 L4,-8 a2.8,2.8 0 0 1 4,4 M-3,3 L3,-3" stroke="#5aaa40" stroke-width="1.4" fill="none" /></g><g transform="translate(1773.5,890)"><path d="M3,-3 L-3,4 a2,2 0 0 0 3,2 L6,-1 a3.5,3.5 0 0 0 -5,-5 L-5,2 a5,5 0 0 0 7,7 L7,3" stroke="#e6e6e6" stroke-width="1.15" fill="none" /></g><g transform="translate(1773.5,923)"><path d="M5,-10 L9,-6 L4,-1 L0,-5 Z M0,-5 L4,-1 L2,2 L-3,8 L-4,6 L-6,7 L-5,4 L-9,3 L-3,-3 Z M-3,3 L-1,1" stroke="#e6e6e6" stroke-width="1.15" fill="none" /></g><defs><clipPath id="docclip"><rect x="453" y="132" width="1236" height="798"/></clipPath></defs><rect x="452" y="132" width="1273" height="798" fill="#ffffff" /><rect x="452" y="132" width="1.5" height="798" fill="#111" /><rect x="452" y="132" width="1237" height="1" fill="#d0d0d0" /><g clip-path="url(#docclip)"><line x1="497" y1="155" x2="497" y2="184" stroke="#1a1a1a" stroke-width="1" /><line x1="497" y1="184" x2="497" y2="843" stroke="#1a1a1a" stroke-width="1" stroke-dasharray="23.5,5.7,5.8,5.7" stroke-dashoffset="0"/><circle cx="497" cy="148.5" r="6" stroke="#1a1a1a" stroke-width="1.1" fill="#fff" /><text x="497" y="150.7" font-size="5.5" fill="#1a1a1a" text-anchor="middle" font-weight="bold" >04</text><circle cx="497" cy="850" r="6" stroke="#1a1a1a" stroke-width="1.1" fill="#fff" /><text x="497" y="852.2" font-size="5.5" fill="#1a1a1a" text-anchor="middle" font-weight="bold" >04</text><line x1="672" y1="155" x2="672" y2="184" stroke="#1a1a1a" stroke-width="1" /><line x1="672" y1="184" x2="672" y2="843" stroke="#1a1a1a" stroke-width="1" stroke-dasharray="23.5,5.7,5.8,5.7" stroke-dashoffset="0"/><circle cx="672" cy="148.5" r="6" stroke="#1a1a1a" stroke-width="1.1" fill="#fff" /><text x="672" y="150.7" font-size="5.5" fill="#1a1a1a" text-anchor="middle" font-weight="bold" >05</text><circle cx="672" cy="850" r="6" stroke="#1a1a1a" stroke-width="1.1" fill="#fff" /><text x="672" y="852.2" font-size="5.5" fill="#1a1a1a" text-anchor="middle" font-weight="bold" >05</text><line x1="847.5" y1="155" x2="847.5" y2="184" stroke="#1a1a1a" stroke-width="1" /><line x1="847.5" y1="184" x2="847.5" y2="843" stroke="#1a1a1a" stroke-width="1" stroke-dasharray="23.5,5.7,5.8,5.7" stroke-dashoffset="0"/><circle cx="847.5" cy="148.5" r="6" stroke="#1a1a1a" stroke-width="1.1" fill="#fff" /><text x="847.5" y="150.7" font-size="5.5" fill="#1a1a1a" text-anchor="middle" font-weight="bold" >06</text><circle cx="847.5" cy="850" r="6" stroke="#1a1a1a" stroke-width="1.1" fill="#fff" /><text x="847.5" y="852.2" font-size="5.5" fill="#1a1a1a" text-anchor="middle" font-weight="bold" >06</text><line x1="1022.5" y1="155" x2="1022.5" y2="184" stroke="#1a1a1a" stroke-width="1" /><line x1="1022.5" y1="184" x2="1022.5" y2="843" stroke="#1a1a1a" stroke-width="1" stroke-dasharray="23.5,5.7,5.8,5.7" stroke-dashoffset="0"/><circle cx="1022.5" cy="148.5" r="6" stroke="#1a1a1a" stroke-width="1.1" fill="#fff" /><text x="1022.5" y="150.7" font-size="5.5" fill="#1a1a1a" text-anchor="middle" font-weight="bold" >07</text><circle cx="1022.5" cy="850" r="6" stroke="#1a1a1a" stroke-width="1.1" fill="#fff" /><text x="1022.5" y="852.2" font-size="5.5" fill="#1a1a1a" text-anchor="middle" font-weight="bold" >07</text><line x1="1198" y1="155" x2="1198" y2="184" stroke="#1a1a1a" stroke-width="1" /><line x1="1198" y1="184" x2="1198" y2="843" stroke="#1a1a1a" stroke-width="1" stroke-dasharray="23.5,5.7,5.8,5.7" stroke-dashoffset="0"/><circle cx="1198" cy="148.5" r="6" stroke="#1a1a1a" stroke-width="1.1" fill="#fff" /><text x="1198" y="150.7" font-size="5.5" fill="#1a1a1a" text-anchor="middle" font-weight="bold" >08</text><circle cx="1198" cy="850" r="6" stroke="#1a1a1a" stroke-width="1.1" fill="#fff" /><text x="1198" y="852.2" font-size="5.5" fill="#1a1a1a" text-anchor="middle" font-weight="bold" >08</text><line x1="1373.5" y1="155" x2="1373.5" y2="184" stroke="#1a1a1a" stroke-width="1" /><line x1="1373.5" y1="184" x2="1373.5" y2="843" stroke="#1a1a1a" stroke-width="1" stroke-dasharray="23.5,5.7,5.8,5.7" stroke-dashoffset="0"/><circle cx="1373.5" cy="148.5" r="6" stroke="#1a1a1a" stroke-width="1.1" fill="#fff" /><text x="1373.5" y="150.7" font-size="5.5" fill="#1a1a1a" text-anchor="middle" font-weight="bold" >09</text><circle cx="1373.5" cy="850" r="6" stroke="#1a1a1a" stroke-width="1.1" fill="#fff" /><text x="1373.5" y="852.2" font-size="5.5" fill="#1a1a1a" text-anchor="middle" font-weight="bold" >09</text><line x1="1549" y1="155" x2="1549" y2="184" stroke="#1a1a1a" stroke-width="1" /><line x1="1549" y1="184" x2="1549" y2="843" stroke="#1a1a1a" stroke-width="1" stroke-dasharray="23.5,5.7,5.8,5.7" stroke-dashoffset="0"/><circle cx="1549" cy="148.5" r="6" stroke="#1a1a1a" stroke-width="1.1" fill="#fff" /><text x="1549" y="150.7" font-size="5.5" fill="#1a1a1a" text-anchor="middle" font-weight="bold" >10</text><circle cx="1549" cy="850" r="6" stroke="#1a1a1a" stroke-width="1.1" fill="#fff" /><text x="1549" y="852.2" font-size="5.5" fill="#1a1a1a" text-anchor="middle" font-weight="bold" >10</text><line x1="453" y1="234.5" x2="1649" y2="234.5" stroke="#1a1a1a" stroke-width="1" stroke-dasharray="23.5,5.7,5.8,5.7"/><circle cx="1655.2" cy="234.5" r="6" stroke="#1a1a1a" stroke-width="1.1" fill="#fff" /><text x="1655.2" y="236.7" font-size="5.5" fill="#1a1a1a" text-anchor="middle" font-weight="bold" >A</text><line x1="453" y1="409.5" x2="1649" y2="409.5" stroke="#1a1a1a" stroke-width="1" stroke-dasharray="23.5,5.7,5.8,5.7"/><circle cx="1655.2" cy="409.5" r="6" stroke="#1a1a1a" stroke-width="1.1" fill="#fff" /><text x="1655.2" y="411.7" font-size="5.5" fill="#1a1a1a" text-anchor="middle" font-weight="bold" >B</text><line x1="453" y1="585" x2="1649" y2="585" stroke="#1a1a1a" stroke-width="1" stroke-dasharray="23.5,5.7,5.8,5.7"/><circle cx="1655.2" cy="585" r="6" stroke="#1a1a1a" stroke-width="1.1" fill="#fff" /><text x="1655.2" y="587.2" font-size="5.5" fill="#1a1a1a" text-anchor="middle" font-weight="bold" >C</text><line x1="453" y1="760.3" x2="1649" y2="760.3" stroke="#1a1a1a" stroke-width="1" stroke-dasharray="23.5,5.7,5.8,5.7"/><circle cx="1655.2" cy="760.3" r="6" stroke="#1a1a1a" stroke-width="1.1" fill="#fff" /><text x="1655.2" y="762.5" font-size="5.5" fill="#1a1a1a" text-anchor="middle" font-weight="bold" >D</text><path d="M494,230.5 H500 M494,238.5 H500 M497,230.5 V238.5" stroke="#1a1a1a" stroke-width="1.2" fill="none" /><path d="M494,405.5 H500 M494,413.5 H500 M497,405.5 V413.5" stroke="#1a1a1a" stroke-width="1.2" fill="none" /><path d="M494,581 H500 M494,589 H500 M497,581 V589" stroke="#1a1a1a" stroke-width="1.2" fill="none" /><path d="M494,756.3 H500 M494,764.3 H500 M497,756.3 V764.3" stroke="#1a1a1a" stroke-width="1.2" fill="none" /><path d="M669,230.5 H675 M669,238.5 H675 M672,230.5 V238.5" stroke="#1a1a1a" stroke-width="1.2" fill="none" /><path d="M669,405.5 H675 M669,413.5 H675 M672,405.5 V413.5" stroke="#1a1a1a" stroke-width="1.2" fill="none" /><path d="M669,581 H675 M669,589 H675 M672,581 V589" stroke="#1a1a1a" stroke-width="1.2" fill="none" /><path d="M669,756.3 H675 M669,764.3 H675 M672,756.3 V764.3" stroke="#1a1a1a" stroke-width="1.2" fill="none" /><path d="M844.5,230.5 H850.5 M844.5,238.5 H850.5 M847.5,230.5 V238.5" stroke="#1a1a1a" stroke-width="1.2" fill="none" /><path d="M844.5,405.5 H850.5 M844.5,413.5 H850.5 M847.5,405.5 V413.5" stroke="#1a1a1a" stroke-width="1.2" fill="none" /><path d="M844.5,581 H850.5 M844.5,589 H850.5 M847.5,581 V589" stroke="#1a1a1a" stroke-width="1.2" fill="none" /><path d="M844.5,756.3 H850.5 M844.5,764.3 H850.5 M847.5,756.3 V764.3" stroke="#1a1a1a" stroke-width="1.2" fill="none" /><path d="M1019.5,230.5 H1025.5 M1019.5,238.5 H1025.5 M1022.5,230.5 V238.5" stroke="#1a1a1a" stroke-width="1.2" fill="none" /><path d="M1019.5,405.5 H1025.5 M1019.5,413.5 H1025.5 M1022.5,405.5 V413.5" stroke="#1a1a1a" stroke-width="1.2" fill="none" /><path d="M1019.5,581 H1025.5 M1019.5,589 H1025.5 M1022.5,581 V589" stroke="#1a1a1a" stroke-width="1.2" fill="none" /><path d="M1019.5,756.3 H1025.5 M1019.5,764.3 H1025.5 M1022.5,756.3 V764.3" stroke="#1a1a1a" stroke-width="1.2" fill="none" /><path d="M1195,230.5 H1201 M1195,238.5 H1201 M1198,230.5 V238.5" stroke="#1a1a1a" stroke-width="1.2" fill="none" /><path d="M1195,405.5 H1201 M1195,413.5 H1201 M1198,405.5 V413.5" stroke="#1a1a1a" stroke-width="1.2" fill="none" /><path d="M1195,581 H1201 M1195,589 H1201 M1198,581 V589" stroke="#1a1a1a" stroke-width="1.2" fill="none" /><path d="M1195,756.3 H1201 M1195,764.3 H1201 M1198,756.3 V764.3" stroke="#1a1a1a" stroke-width="1.2" fill="none" /><path d="M1370.5,230.5 H1376.5 M1370.5,238.5 H1376.5 M1373.5,230.5 V238.5" stroke="#1a1a1a" stroke-width="1.2" fill="none" /><path d="M1370.5,405.5 H1376.5 M1370.5,413.5 H1376.5 M1373.5,405.5 V413.5" stroke="#1a1a1a" stroke-width="1.2" fill="none" /><path d="M1370.5,581 H1376.5 M1370.5,589 H1376.5 M1373.5,581 V589" stroke="#1a1a1a" stroke-width="1.2" fill="none" /><path d="M1370.5,756.3 H1376.5 M1370.5,764.3 H1376.5 M1373.5,756.3 V764.3" stroke="#1a1a1a" stroke-width="1.2" fill="none" /><path d="M1546,230.5 H1552 M1546,238.5 H1552 M1549,230.5 V238.5" stroke="#1a1a1a" stroke-width="1.2" fill="none" /><path d="M1546,405.5 H1552 M1546,413.5 H1552 M1549,405.5 V413.5" stroke="#1a1a1a" stroke-width="1.2" fill="none" /><path d="M1546,581 H1552 M1546,589 H1552 M1549,581 V589" stroke="#1a1a1a" stroke-width="1.2" fill="none" /><path d="M1546,756.3 H1552 M1546,764.3 H1552 M1549,756.3 V764.3" stroke="#1a1a1a" stroke-width="1.2" fill="none" /><line x1="453" y1="188" x2="1551" y2="188" stroke="#4a4a4a" stroke-width="1" /><line x1="453" y1="206" x2="1551" y2="206" stroke="#3a3a3a" stroke-width="1" /><path d="M495,208 L499,204 M497,202 V210" stroke="#1a1a1a" stroke-width="1" fill="none" /><path d="M670,208 L674,204 M672,202 V210" stroke="#1a1a1a" stroke-width="1" fill="none" /><path d="M845.5,208 L849.5,204 M847.5,202 V210" stroke="#1a1a1a" stroke-width="1" fill="none" /><path d="M1020.5,208 L1024.5,204 M1022.5,202 V210" stroke="#1a1a1a" stroke-width="1" fill="none" /><path d="M1196,208 L1200,204 M1198,202 V210" stroke="#1a1a1a" stroke-width="1" fill="none" /><path d="M1371.5,208 L1375.5,204 M1373.5,202 V210" stroke="#1a1a1a" stroke-width="1" fill="none" /><path d="M1547,208 L1551,204 M1549,202 V210" stroke="#1a1a1a" stroke-width="1" fill="none" /><text x="760" y="183.5" font-size="6" fill="#333" text-anchor="middle" font-style="italic">270'-0&quot;</text><text x="584.5" y="201.5" font-size="6" fill="#333" text-anchor="middle" font-style="italic">30'-0&quot;</text><text x="759.75" y="201.5" font-size="6" fill="#333" text-anchor="middle" font-style="italic">30'-0&quot;</text><text x="935.0" y="201.5" font-size="6" fill="#333" text-anchor="middle" font-style="italic">30'-0&quot;</text><text x="1110.25" y="201.5" font-size="6" fill="#333" text-anchor="middle" font-style="italic">30'-0&quot;</text><text x="1285.75" y="201.5" font-size="6" fill="#333" text-anchor="middle" font-style="italic">30'-0&quot;</text><text x="1461.25" y="201.5" font-size="6" fill="#333" text-anchor="middle" font-style="italic">30'-0&quot;</text><line x1="1593.7" y1="234.5" x2="1593.7" y2="760.3" stroke="#1a1a1a" stroke-width="1" /><line x1="1611.3" y1="234.5" x2="1611.3" y2="760.3" stroke="#1a1a1a" stroke-width="1" /><path d="M1590,236.5 L1597,232.5 M1608,236.5 L1615,232.5" stroke="#1a1a1a" stroke-width="1" fill="none" /><path d="M1590,411.5 L1597,407.5 M1608,411.5 L1615,407.5" stroke="#1a1a1a" stroke-width="1" fill="none" /><path d="M1590,587 L1597,583 M1608,587 L1615,583" stroke="#1a1a1a" stroke-width="1" fill="none" /><path d="M1590,762.3 L1597,758.3 M1608,762.3 L1615,758.3" stroke="#1a1a1a" stroke-width="1" fill="none" /><text x="1587.5" y="322" font-size="6" fill="#333" text-anchor="middle" font-style="italic" transform="rotate(-90 1587.5 322)">30'-0"</text><text x="1587.5" y="497" font-size="6" fill="#333" text-anchor="middle" font-style="italic" transform="rotate(-90 1587.5 497)">30'-0"</text><text x="1587.5" y="672" font-size="6" fill="#333" text-anchor="middle" font-style="italic" transform="rotate(-90 1587.5 672)">30'-0"</text><text x="1605" y="497" font-size="6" fill="#333" text-anchor="middle" font-style="italic" transform="rotate(-90 1605 497)">90'-0"</text><path d="M453,220.5 H1563.5 V773.9 H453" stroke="#1a1a1a" stroke-width="3" fill="none" /><circle cx="468.0" cy="220.5" r="2.0" stroke="#1a1a1a" stroke-width="0" fill="#1a1a1a" /><circle cx="468.0" cy="773.9" r="2.0" stroke="#1a1a1a" stroke-width="0" fill="#1a1a1a" /><circle cx="497.0" cy="220.5" r="2.0" stroke="#1a1a1a" stroke-width="0" fill="#1a1a1a" /><circle cx="497.0" cy="773.9" r="2.0" stroke="#1a1a1a" stroke-width="0" fill="#1a1a1a" /><circle cx="526.0" cy="220.5" r="2.0" stroke="#1a1a1a" stroke-width="0" fill="#1a1a1a" /><circle cx="526.0" cy="773.9" r="2.0" stroke="#1a1a1a" stroke-width="0" fill="#1a1a1a" /><circle cx="555.0" cy="220.5" r="2.0" stroke="#1a1a1a" stroke-width="0" fill="#1a1a1a" /><circle cx="555.0" cy="773.9" r="2.0" stroke="#1a1a1a" stroke-width="0" fill="#1a1a1a" /><circle cx="584.0" cy="220.5" r="2.0" stroke="#1a1a1a" stroke-width="0" fill="#1a1a1a" /><circle cx="584.0" cy="773.9" r="2.0" stroke="#1a1a1a" stroke-width="0" fill="#1a1a1a" /><circle cx="613.0" cy="220.5" r="2.0" stroke="#1a1a1a" stroke-width="0" fill="#1a1a1a" /><circle cx="613.0" cy="773.9" r="2.0" stroke="#1a1a1a" stroke-width="0" fill="#1a1a1a" /><circle cx="642.0" cy="220.5" r="2.0" stroke="#1a1a1a" stroke-width="0" fill="#1a1a1a" /><circle cx="642.0" cy="773.9" r="2.0" stroke="#1a1a1a" stroke-width="0" fill="#1a1a1a" /><circle cx="671.0" cy="220.5" r="2.0" stroke="#1a1a1a" stroke-width="0" fill="#1a1a1a" /><circle cx="671.0" cy="773.9" r="2.0" stroke="#1a1a1a" stroke-width="0" fill="#1a1a1a" /><circle cx="700.0" cy="220.5" r="2.0" stroke="#1a1a1a" stroke-width="0" fill="#1a1a1a" /><circle cx="700.0" cy="773.9" r="2.0" stroke="#1a1a1a" stroke-width="0" fill="#1a1a1a" /><circle cx="729.0" cy="220.5" r="2.0" stroke="#1a1a1a" stroke-width="0" fill="#1a1a1a" /><circle cx="729.0" cy="773.9" r="2.0" stroke="#1a1a1a" stroke-width="0" fill="#1a1a1a" /><circle cx="758.0" cy="220.5" r="2.0" stroke="#1a1a1a" stroke-width="0" fill="#1a1a1a" /><circle cx="758.0" cy="773.9" r="2.0" stroke="#1a1a1a" stroke-width="0" fill="#1a1a1a" /><circle cx="787.0" cy="220.5" r="2.0" stroke="#1a1a1a" stroke-width="0" fill="#1a1a1a" /><circle cx="787.0" cy="773.9" r="2.0" stroke="#1a1a1a" stroke-width="0" fill="#1a1a1a" /><circle cx="816.0" cy="220.5" r="2.0" stroke="#1a1a1a" stroke-width="0" fill="#1a1a1a" /><circle cx="816.0" cy="773.9" r="2.0" stroke="#1a1a1a" stroke-width="0" fill="#1a1a1a" /><circle cx="845.0" cy="220.5" r="2.0" stroke="#1a1a1a" stroke-width="0" fill="#1a1a1a" /><circle cx="845.0" cy="773.9" r="2.0" stroke="#1a1a1a" stroke-width="0" fill="#1a1a1a" /><circle cx="874.0" cy="220.5" r="2.0" stroke="#1a1a1a" stroke-width="0" fill="#1a1a1a" /><circle cx="874.0" cy="773.9" r="2.0" stroke="#1a1a1a" stroke-width="0" fill="#1a1a1a" /><circle cx="903.0" cy="220.5" r="2.0" stroke="#1a1a1a" stroke-width="0" fill="#1a1a1a" /><circle cx="903.0" cy="773.9" r="2.0" stroke="#1a1a1a" stroke-width="0" fill="#1a1a1a" /><circle cx="932.0" cy="220.5" r="2.0" stroke="#1a1a1a" stroke-width="0" fill="#1a1a1a" /><circle cx="932.0" cy="773.9" r="2.0" stroke="#1a1a1a" stroke-width="0" fill="#1a1a1a" /><circle cx="961.0" cy="220.5" r="2.0" stroke="#1a1a1a" stroke-width="0" fill="#1a1a1a" /><circle cx="961.0" cy="773.9" r="2.0" stroke="#1a1a1a" stroke-width="0" fill="#1a1a1a" /><circle cx="990.0" cy="220.5" r="2.0" stroke="#1a1a1a" stroke-width="0" fill="#1a1a1a" /><circle cx="990.0" cy="773.9" r="2.0" stroke="#1a1a1a" stroke-width="0" fill="#1a1a1a" /><circle cx="1019.0" cy="220.5" r="2.0" stroke="#1a1a1a" stroke-width="0" fill="#1a1a1a" /><circle cx="1019.0" cy="773.9" r="2.0" stroke="#1a1a1a" stroke-width="0" fill="#1a1a1a" /><circle cx="1048.0" cy="220.5" r="2.0" stroke="#1a1a1a" stroke-width="0" fill="#1a1a1a" /><circle cx="1048.0" cy="773.9" r="2.0" stroke="#1a1a1a" stroke-width="0" fill="#1a1a1a" /><circle cx="1077.0" cy="220.5" r="2.0" stroke="#1a1a1a" stroke-width="0" fill="#1a1a1a" /><circle cx="1077.0" cy="773.9" r="2.0" stroke="#1a1a1a" stroke-width="0" fill="#1a1a1a" /><circle cx="1106.0" cy="220.5" r="2.0" stroke="#1a1a1a" stroke-width="0" fill="#1a1a1a" /><circle cx="1106.0" cy="773.9" r="2.0" stroke="#1a1a1a" stroke-width="0" fill="#1a1a1a" /><circle cx="1135.0" cy="220.5" r="2.0" stroke="#1a1a1a" stroke-width="0" fill="#1a1a1a" /><circle cx="1135.0" cy="773.9" r="2.0" stroke="#1a1a1a" stroke-width="0" fill="#1a1a1a" /><circle cx="1164.0" cy="220.5" r="2.0" stroke="#1a1a1a" stroke-width="0" fill="#1a1a1a" /><circle cx="1164.0" cy="773.9" r="2.0" stroke="#1a1a1a" stroke-width="0" fill="#1a1a1a" /><circle cx="1193.0" cy="220.5" r="2.0" stroke="#1a1a1a" stroke-width="0" fill="#1a1a1a" /><circle cx="1193.0" cy="773.9" r="2.0" stroke="#1a1a1a" stroke-width="0" fill="#1a1a1a" /><circle cx="1222.0" cy="220.5" r="2.0" stroke="#1a1a1a" stroke-width="0" fill="#1a1a1a" /><circle cx="1222.0" cy="773.9" r="2.0" stroke="#1a1a1a" stroke-width="0" fill="#1a1a1a" /><circle cx="1251.0" cy="220.5" r="2.0" stroke="#1a1a1a" stroke-width="0" fill="#1a1a1a" /><circle cx="1251.0" cy="773.9" r="2.0" stroke="#1a1a1a" stroke-width="0" fill="#1a1a1a" /><circle cx="1280.0" cy="220.5" r="2.0" stroke="#1a1a1a" stroke-width="0" fill="#1a1a1a" /><circle cx="1280.0" cy="773.9" r="2.0" stroke="#1a1a1a" stroke-width="0" fill="#1a1a1a" /><circle cx="1309.0" cy="220.5" r="2.0" stroke="#1a1a1a" stroke-width="0" fill="#1a1a1a" /><circle cx="1309.0" cy="773.9" r="2.0" stroke="#1a1a1a" stroke-width="0" fill="#1a1a1a" /><circle cx="1338.0" cy="220.5" r="2.0" stroke="#1a1a1a" stroke-width="0" fill="#1a1a1a" /><circle cx="1338.0" cy="773.9" r="2.0" stroke="#1a1a1a" stroke-width="0" fill="#1a1a1a" /><circle cx="1367.0" cy="220.5" r="2.0" stroke="#1a1a1a" stroke-width="0" fill="#1a1a1a" /><circle cx="1367.0" cy="773.9" r="2.0" stroke="#1a1a1a" stroke-width="0" fill="#1a1a1a" /><circle cx="1396.0" cy="220.5" r="2.0" stroke="#1a1a1a" stroke-width="0" fill="#1a1a1a" /><circle cx="1396.0" cy="773.9" r="2.0" stroke="#1a1a1a" stroke-width="0" fill="#1a1a1a" /><circle cx="1425.0" cy="220.5" r="2.0" stroke="#1a1a1a" stroke-width="0" fill="#1a1a1a" /><circle cx="1425.0" cy="773.9" r="2.0" stroke="#1a1a1a" stroke-width="0" fill="#1a1a1a" /><circle cx="1454.0" cy="220.5" r="2.0" stroke="#1a1a1a" stroke-width="0" fill="#1a1a1a" /><circle cx="1454.0" cy="773.9" r="2.0" stroke="#1a1a1a" stroke-width="0" fill="#1a1a1a" /><circle cx="1483.0" cy="220.5" r="2.0" stroke="#1a1a1a" stroke-width="0" fill="#1a1a1a" /><circle cx="1483.0" cy="773.9" r="2.0" stroke="#1a1a1a" stroke-width="0" fill="#1a1a1a" /><circle cx="1512.0" cy="220.5" r="2.0" stroke="#1a1a1a" stroke-width="0" fill="#1a1a1a" /><circle cx="1512.0" cy="773.9" r="2.0" stroke="#1a1a1a" stroke-width="0" fill="#1a1a1a" /><circle cx="1541.0" cy="220.5" r="2.0" stroke="#1a1a1a" stroke-width="0" fill="#1a1a1a" /><circle cx="1541.0" cy="773.9" r="2.0" stroke="#1a1a1a" stroke-width="0" fill="#1a1a1a" /><circle cx="1563.5" cy="250" r="2.0" stroke="#1a1a1a" stroke-width="0" fill="#1a1a1a" /><circle cx="1563.5" cy="279" r="2.0" stroke="#1a1a1a" stroke-width="0" fill="#1a1a1a" /><circle cx="1563.5" cy="308" r="2.0" stroke="#1a1a1a" stroke-width="0" fill="#1a1a1a" /><circle cx="1563.5" cy="337" r="2.0" stroke="#1a1a1a" stroke-width="0" fill="#1a1a1a" /><circle cx="1563.5" cy="366" r="2.0" stroke="#1a1a1a" stroke-width="0" fill="#1a1a1a" /><circle cx="1563.5" cy="395" r="2.0" stroke="#1a1a1a" stroke-width="0" fill="#1a1a1a" /><circle cx="1563.5" cy="424" r="2.0" stroke="#1a1a1a" stroke-width="0" fill="#1a1a1a" /><circle cx="1563.5" cy="453" r="2.0" stroke="#1a1a1a" stroke-width="0" fill="#1a1a1a" /><circle cx="1563.5" cy="482" r="2.0" stroke="#1a1a1a" stroke-width="0" fill="#1a1a1a" /><circle cx="1563.5" cy="511" r="2.0" stroke="#1a1a1a" stroke-width="0" fill="#1a1a1a" /><circle cx="1563.5" cy="540" r="2.0" stroke="#1a1a1a" stroke-width="0" fill="#1a1a1a" /><circle cx="1563.5" cy="569" r="2.0" stroke="#1a1a1a" stroke-width="0" fill="#1a1a1a" /><circle cx="1563.5" cy="598" r="2.0" stroke="#1a1a1a" stroke-width="0" fill="#1a1a1a" /><circle cx="1563.5" cy="627" r="2.0" stroke="#1a1a1a" stroke-width="0" fill="#1a1a1a" /><circle cx="1563.5" cy="656" r="2.0" stroke="#1a1a1a" stroke-width="0" fill="#1a1a1a" /><circle cx="1563.5" cy="685" r="2.0" stroke="#1a1a1a" stroke-width="0" fill="#1a1a1a" /><circle cx="1563.5" cy="714" r="2.0" stroke="#1a1a1a" stroke-width="0" fill="#1a1a1a" /><circle cx="1563.5" cy="743" r="2.0" stroke="#1a1a1a" stroke-width="0" fill="#1a1a1a" /><circle cx="1563.5" cy="772" r="2.0" stroke="#1a1a1a" stroke-width="0" fill="#1a1a1a" /><polygon points="466.40,222.00 466.40,338.00 469.60,338.00 469.60,222.00" fill="#9a9a9a" stroke="#1a1a1a" stroke-width="0.8"/><polygon points="670.40,222.00 670.40,335.00 673.60,335.00 673.60,222.00" fill="#9a9a9a" stroke="#1a1a1a" stroke-width="0.8"/><polygon points="846.20,222.00 846.20,330.00 849.40,330.00 849.40,222.00" fill="#9a9a9a" stroke="#1a1a1a" stroke-width="0.8"/><polygon points="933.70,222.00 933.70,332.00 936.90,332.00 936.90,222.00" fill="#9a9a9a" stroke="#1a1a1a" stroke-width="0.8"/><polygon points="1050.60,222.00 1050.60,340.00 1053.80,340.00 1053.80,222.00" fill="#9a9a9a" stroke="#1a1a1a" stroke-width="0.8"/><polygon points="1226.10,222.00 1226.10,336.00 1229.30,336.00 1229.30,222.00" fill="#9a9a9a" stroke="#1a1a1a" stroke-width="0.8"/><polygon points="1285.30,222.00 1285.30,358.00 1288.50,358.00 1288.50,222.00" fill="#9a9a9a" stroke="#1a1a1a" stroke-width="0.8"/><polygon points="1343.10,222.00 1343.10,346.00 1346.30,346.00 1346.30,222.00" fill="#9a9a9a" stroke="#1a1a1a" stroke-width="0.8"/><polygon points="758.95,222.00 758.95,287.00 760.45,287.00 760.45,222.00" fill="#9a9a9a" stroke="#1a1a1a" stroke-width="0.8"/><polygon points="453.14,342.24 671.74,325.24 671.46,321.76 452.86,338.76" fill="#9a9a9a" stroke="#1a1a1a" stroke-width="0.8"/><polygon points="694.00,325.25 717.00,325.25 717.00,321.75 694.00,321.75" fill="#9a9a9a" stroke="#1a1a1a" stroke-width="0.8"/><polygon points="802.00,325.25 826.00,325.25 826.00,321.75 802.00,321.75" fill="#9a9a9a" stroke="#1a1a1a" stroke-width="0.8"/><polygon points="847.67,326.75 934.87,333.35 935.13,329.85 847.93,323.25" fill="#9a9a9a" stroke="#1a1a1a" stroke-width="0.8"/><polygon points="934.89,333.10 1051.89,341.50 1052.11,338.50 935.11,330.10" fill="#9a9a9a" stroke="#1a1a1a" stroke-width="0.8"/><path d="M1227.7,336 Q1227.7,353 1242,354.6 L1332,361.5 Q1344.7,361 1344.7,346" stroke="#1a1a1a" stroke-width="3.4" fill="none" /><path d="M1227.7,336 Q1227.7,353 1242,354.6 L1332,361.5 Q1344.7,361 1344.7,346" stroke="#aaa" stroke-width="1.2" fill="none" /><line x1="1338" y1="361" x2="1563.5" y2="380" stroke="#1a1a1a" stroke-width="0.9" /><rect x="496.7" y="248.5" width="146.90000000000003" height="58.19999999999999" rx="0" stroke="#1a1a1a" stroke-width="1.2" fill="none"/><line x1="497" y1="254.7" x2="643" y2="254.7" stroke="#1a1a1a" stroke-width="0.9" stroke-dasharray="3,2"/><line x1="497" y1="300.8" x2="643" y2="300.8" stroke="#1a1a1a" stroke-width="0.9" stroke-dasharray="3,2"/><text x="575.3" y="281" font-size="7" fill="#1a1a1a" text-anchor="middle" font-weight="bold" >CONFERENCE  207</text><rect x="686.5" y="239.8" width="58.299999999999955" height="29.80000000000001" stroke="#1a1a1a" stroke-width="0.9" fill="none" stroke-dasharray="3,2"/><text x="715.8" y="283" font-size="7" fill="#1a1a1a" text-anchor="middle" font-weight="bold" >MEETING  208</text><rect x="774.6" y="239.8" width="59.10000000000002" height="29.80000000000001" stroke="#1a1a1a" stroke-width="0.9" fill="none" stroke-dasharray="3,2"/><text x="804.4" y="283" font-size="7" fill="#1a1a1a" text-anchor="middle" font-weight="bold" >MEETING  209</text><rect x="876.8" y="238.4" width="29.800000000000068" height="71.1" stroke="#1a1a1a" stroke-width="0.9" fill="none" stroke-dasharray="3,2"/><text x="891.7" y="283" font-size="7" fill="#1a1a1a" text-anchor="middle" font-weight="bold" >MEETING  210</text><rect x="958.3" y="253" width="71.70000000000005" height="41.69999999999999" stroke="#1a1a1a" stroke-width="0.9" fill="none" stroke-dasharray="3,2"/><text x="995.2" y="275.5" font-size="7" fill="#1a1a1a" text-anchor="middle" font-weight="bold" >CONFERENCE  211</text><text x="1108.2" y="254.5" font-size="7" fill="#1a1a1a" text-anchor="middle" font-weight="bold" >OFFICE  212</text><text x="1108.2" y="318.7" font-size="7" fill="#1a1a1a" text-anchor="middle" font-weight="bold" >OFFICE  213</text><polygon points="1052.20,285.50 1169.40,285.50 1169.40,282.50 1052.20,282.50" fill="#9a9a9a" stroke="#1a1a1a" stroke-width="0.8"/><polygon points="1167.90,222.00 1167.90,263.00 1170.90,263.00 1170.90,222.00" fill="#9a9a9a" stroke="#1a1a1a" stroke-width="0.8"/><polygon points="1167.90,306.00 1167.90,333.00 1170.90,333.00 1170.90,306.00" fill="#9a9a9a" stroke="#1a1a1a" stroke-width="0.8"/><polygon points="1227.70,286.10 1344.70,286.10 1344.70,283.10 1227.70,283.10" fill="#9a9a9a" stroke="#1a1a1a" stroke-width="0.8"/><text x="1257.4" y="257" font-size="6.5" fill="#1a1a1a" text-anchor="middle" font-weight="bold" >MEETING  214</text><text x="1315" y="257" font-size="6.5" fill="#1a1a1a" text-anchor="middle" font-weight="bold" >MEETING  216</text><text x="1257.4" y="328" font-size="6.5" fill="#1a1a1a" text-anchor="middle" font-weight="bold" >MEETING  215</text><text x="1315" y="328" font-size="6.5" fill="#1a1a1a" text-anchor="middle" font-weight="bold" >MEETING  217</text><path d="" stroke="#1a1a1a" stroke-width="1" fill="none" /><path d="" stroke="#1a1a1a" stroke-width="1" fill="none" /><path d="" stroke="#1a1a1a" stroke-width="1" fill="none" /><path d="" stroke="#1a1a1a" stroke-width="1" fill="none" /><path d="" stroke="#1a1a1a" stroke-width="1" fill="none" /><path d="" stroke="#1a1a1a" stroke-width="1" fill="none" /><path d="M1227.7,267.3 A17,17 0 0 1 1227.7,301.3" stroke="#1a1a1a" stroke-width="1" fill="none" /><circle cx="1227.7" cy="272.3" r="5.2" stroke="#1a1a1a" stroke-width="1.1" fill="#fff" /><text x="1227.7" y="274.5" font-size="5.5" fill="#1a1a1a" text-anchor="middle" font-weight="bold" >214</text><circle cx="1227.7" cy="296.3" r="5.2" stroke="#1a1a1a" stroke-width="1.1" fill="#fff" /><text x="1227.7" y="298.5" font-size="5.5" fill="#1a1a1a" text-anchor="middle" font-weight="bold" >215</text><path d="M1344.7,267.3 A17,17 0 0 0 1344.7,301.3" stroke="#1a1a1a" stroke-width="1" fill="none" /><circle cx="1344.7" cy="272.3" r="5.2" stroke="#1a1a1a" stroke-width="1.1" fill="#fff" /><text x="1344.7" y="274.5" font-size="5.5" fill="#1a1a1a" text-anchor="middle" font-weight="bold" >216</text><circle cx="1344.7" cy="296.3" r="5.2" stroke="#1a1a1a" stroke-width="1.1" fill="#fff" /><text x="1344.7" y="298.5" font-size="5.5" fill="#1a1a1a" text-anchor="middle" font-weight="bold" >217</text><path d="M1169.4,267.3 A17,17 0 0 0 1169.4,301.3" stroke="#1a1a1a" stroke-width="1" fill="none" /><circle cx="1169.4" cy="272.3" r="5.2" stroke="#1a1a1a" stroke-width="1.1" fill="#fff" /><text x="1169.4" y="274.5" font-size="5.5" fill="#1a1a1a" text-anchor="middle" font-weight="bold" >212</text><circle cx="1169.4" cy="296.3" r="5.2" stroke="#1a1a1a" stroke-width="1.1" fill="#fff" /><text x="1169.4" y="298.5" font-size="5.5" fill="#1a1a1a" text-anchor="middle" font-weight="bold" >213</text><path d="M694.6,323 H717 A43.7,43.7 0 0 1 802,323 H826" stroke="#1a1a1a" stroke-width="3.2" fill="none" /><path d="M694.6,323 H717 A43.7,43.7 0 0 1 802,323 H826" stroke="#22b050" stroke-width="2.2" fill="none" /><text x="759.7" y="302" font-size="10" fill="#2d7a4a" text-anchor="middle" >23'-2&quot;</text><text x="700" y="335.5" font-size="10" fill="#2d7a4a" text-anchor="middle" >2'-1&quot;</text><text x="817.4" y="335.5" font-size="10" fill="#2d7a4a" text-anchor="middle" >2'-1&quot;</text><text x="823" y="279.5" font-size="10" fill="#2d7a4a" text-anchor="middle" >120&quot; Tall</text><text x="823" y="291" font-size="10" fill="#2d7a4a" text-anchor="middle" >L = 27'-4&quot;</text><text x="823" y="303" font-size="10" fill="#2d7a4a" text-anchor="middle" >D = 120 in</text><path d="M729.8,323.8 H789.5 Q789,338.7 759.7,338.7 Q730,338.7 729.8,323.8 Z" stroke="#1a1a1a" stroke-width="1" fill="none" /><path d="M652.6,309 A12,12 0 0 0 640,323" stroke="#1a1a1a" stroke-width="1" fill="none" /><path d="M476,322 A12,12 0 0 1 488,335" stroke="#1a1a1a" stroke-width="1" fill="none" /><circle cx="480" cy="333" r="4.8" stroke="#1a1a1a" stroke-width="1.1" fill="#fff" /><text x="480" y="335.2" font-size="5.5" fill="#1a1a1a" text-anchor="middle" font-weight="bold" >207</text><circle cx="652.6" cy="323" r="4.8" stroke="#1a1a1a" stroke-width="1.1" fill="#fff" /><text x="652.6" y="325.2" font-size="5.5" fill="#1a1a1a" text-anchor="middle" font-weight="bold" >207</text><circle cx="684.5" cy="324" r="4.8" stroke="#1a1a1a" stroke-width="1.1" fill="#fff" /><text x="684.5" y="326.2" font-size="5.5" fill="#1a1a1a" text-anchor="middle" font-weight="bold" >208</text><circle cx="834" cy="324" r="4.8" stroke="#1a1a1a" stroke-width="1.1" fill="#fff" /><text x="834" y="326.2" font-size="5.5" fill="#1a1a1a" text-anchor="middle" font-weight="bold" >209</text><circle cx="866" cy="326" r="4.8" stroke="#1a1a1a" stroke-width="1.1" fill="#fff" /><text x="866" y="328.2" font-size="5.5" fill="#1a1a1a" text-anchor="middle" font-weight="bold" >210</text><path d="M670,308 A12,12 0 0 1 684,320" stroke="#1a1a1a" stroke-width="1" fill="none" /><path d="M848,312 A12,12 0 0 0 836,324" stroke="#1a1a1a" stroke-width="1" fill="none" /><path d="M866,310 A12,12 0 0 1 878,322" stroke="#1a1a1a" stroke-width="1" fill="none" /><path d="M940,326 A13,13 0 0 1 952,315 V330" stroke="#1a1a1a" stroke-width="1" fill="none" /><path d="M1052,322 A13,13 0 0 0 1040,333" stroke="#1a1a1a" stroke-width="1" fill="none" /><text x="524.6" y="352" font-size="9" fill="#ee2a2a" textLength="81" lengthAdjust="spacingAndGlyphs" >Stair doors to be fire</text><text x="524.6" y="362.5" font-size="9" fill="#ee2a2a" textLength="88" lengthAdjust="spacingAndGlyphs" >rated assemblies, typ.</text><line x1="568.6" y1="365" x2="568.6" y2="385" stroke="#ee2a2a" stroke-width="0.9" /><text x="762.4" y="364.5" font-size="7" fill="#1a1a1a" text-anchor="middle" font-weight="bold" >RECEPTION  255</text><rect x="692" y="370" width="82" height="22.4" fill="#c8fafa" /><text x="694.6" y="379.5" font-size="8.5" fill="#222" textLength="70" lengthAdjust="spacingAndGlyphs" >Verify all ducting will</text><text x="694.6" y="388.3" font-size="8.5" fill="#222" textLength="51" lengthAdjust="spacingAndGlyphs" >fit in this chase</text><path d="M692,380.7 H679.7 V392.4" stroke="#2a2aff" stroke-width="1" fill="none" /><rect x="1072.3" y="157.4" width="89.3" height="11.2" fill="#ffff80" /><text x="1073.7" y="166" font-size="9" fill="#222" textLength="86" lengthAdjust="spacingAndGlyphs" >Head and sill details?</text><path d="M1116.6,168.6 V192.3 L1147.2,253.5" stroke="#f0a040" stroke-width="1" fill="none" /><path d="M1145,255 A3.50,3.50 0 0 1 1151.67,255.00 A3.50,3.50 0 0 1 1158.33,255.00 A3.50,3.50 0 0 1 1165.00,255.00 A3.50,3.50 0 0 1 1171.67,255.00 A3.50,3.50 0 0 1 1178.33,255.00 A3.50,3.50 0 0 1 1185.00,255.00 A3.54,3.54 0 0 1 1185.00,261.75 A3.54,3.54 0 0 1 1185.00,268.50 A3.54,3.54 0 0 1 1185.00,275.25 A3.54,3.54 0 0 1 1185.00,282.00 A3.54,3.54 0 0 1 1185.00,288.75 A3.54,3.54 0 0 1 1185.00,295.50 A3.54,3.54 0 0 1 1185.00,302.25 A3.54,3.54 0 0 1 1185.00,309.00 A3.50,3.50 0 0 1 1178.33,309.00 A3.50,3.50 0 0 1 1171.67,309.00 A3.50,3.50 0 0 1 1165.00,309.00 A3.50,3.50 0 0 1 1158.33,309.00 A3.50,3.50 0 0 1 1151.67,309.00 A3.50,3.50 0 0 1 1145.00,309.00 A3.54,3.54 0 0 1 1145.00,302.25 A3.54,3.54 0 0 1 1145.00,295.50 A3.54,3.54 0 0 1 1145.00,288.75 A3.54,3.54 0 0 1 1145.00,282.00 A3.54,3.54 0 0 1 1145.00,275.25 A3.54,3.54 0 0 1 1145.00,268.50 A3.54,3.54 0 0 1 1145.00,261.75 A3.54,3.54 0 0 1 1145.00,255.00 Z" stroke="#f5a030" stroke-width="1" fill="#ffe040" fill-opacity="0.6"/><path d="M1169.4,267 A17,17 0 0 0 1169.4,301" stroke="#1a1a1a" stroke-width="1" fill="none" /><circle cx="1169.4" cy="272.5" r="5.2" stroke="#1a1a1a" stroke-width="1.1" fill="#fff" /><text x="1169.4" y="274.7" font-size="5.5" fill="#1a1a1a" text-anchor="middle" font-weight="bold" >212</text><circle cx="1169.4" cy="296.1" r="5.2" stroke="#1a1a1a" stroke-width="1.1" fill="#fff" /><text x="1169.4" y="298.3" font-size="5.5" fill="#1a1a1a" text-anchor="middle" font-weight="bold" >213</text><polygon points="1152.00,285.80 1169.40,285.80 1169.40,282.80 1152.00,282.80" fill="#9a9a9a" stroke="#1a1a1a" stroke-width="0.8"/><rect x="1401" y="132.3" width="115.6" height="24.3" fill="#c8fafa" /><text x="1404" y="141" font-size="8.5" fill="#222" textLength="102" lengthAdjust="spacingAndGlyphs" >What are power requirements</text><text x="1404" y="149.8" font-size="8.5" fill="#222" textLength="78" lengthAdjust="spacingAndGlyphs" >for Open Office areas?</text><line x1="1458.8" y1="156.6" x2="1458.8" y2="283" stroke="#2a2aff" stroke-width="1" /><path d="M1393,283 A4.12,4.12 0 0 1 1400.85,283.00 A4.12,4.12 0 0 1 1408.69,283.00 A4.12,4.12 0 0 1 1416.54,283.00 A4.12,4.12 0 0 1 1424.38,283.00 A4.12,4.12 0 0 1 1432.23,283.00 A4.12,4.12 0 0 1 1440.08,283.00 A4.12,4.12 0 0 1 1447.92,283.00 A4.12,4.12 0 0 1 1455.77,283.00 A4.12,4.12 0 0 1 1463.62,283.00 A4.12,4.12 0 0 1 1471.46,283.00 A4.12,4.12 0 0 1 1479.31,283.00 A4.12,4.12 0 0 1 1487.15,283.00 A4.12,4.12 0 0 1 1495.00,283.00 A4.03,4.03 0 0 1 1495.00,290.67 A4.03,4.03 0 0 1 1495.00,298.33 A4.03,4.03 0 0 1 1495.00,306.00 A4.03,4.03 0 0 1 1495.00,313.67 A4.03,4.03 0 0 1 1495.00,321.33 A4.03,4.03 0 0 1 1495.00,329.00 A4.12,4.12 0 0 1 1487.15,329.00 A4.12,4.12 0 0 1 1479.31,329.00 A4.12,4.12 0 0 1 1471.46,329.00 A4.12,4.12 0 0 1 1463.62,329.00 A4.12,4.12 0 0 1 1455.77,329.00 A4.12,4.12 0 0 1 1447.92,329.00 A4.12,4.12 0 0 1 1440.08,329.00 A4.12,4.12 0 0 1 1432.23,329.00 A4.12,4.12 0 0 1 1424.38,329.00 A4.12,4.12 0 0 1 1416.54,329.00 A4.12,4.12 0 0 1 1408.69,329.00 A4.12,4.12 0 0 1 1400.85,329.00 A4.12,4.12 0 0 1 1393.00,329.00 A4.03,4.03 0 0 1 1393.00,321.33 A4.03,4.03 0 0 1 1393.00,313.67 A4.03,4.03 0 0 1 1393.00,306.00 A4.03,4.03 0 0 1 1393.00,298.33 A4.03,4.03 0 0 1 1393.00,290.67 A4.03,4.03 0 0 1 1393.00,283.00 Z" stroke="#2a2aff" stroke-width="1.2" fill="#9af5f5" fill-opacity="0.55"/><text x="1445" y="311" font-size="7" fill="#1a1a1a" text-anchor="middle" font-weight="bold" >OPEN OFFICE  218</text><path d="M1326,342 A2.89,2.89 0 0 1 1331.50,342.00 A2.89,2.89 0 0 1 1337.00,342.00 A2.89,2.89 0 0 1 1342.50,342.00 A2.89,2.89 0 0 1 1348.00,342.00 A3.50,3.50 0 0 1 1348.00,348.67 A3.50,3.50 0 0 1 1348.00,355.33 A3.50,3.50 0 0 1 1348.00,362.00 A2.89,2.89 0 0 1 1342.50,362.00 A2.89,2.89 0 0 1 1337.00,362.00 A2.89,2.89 0 0 1 1331.50,362.00 A2.89,2.89 0 0 1 1326.00,362.00 A3.50,3.50 0 0 1 1326.00,355.33 A3.50,3.50 0 0 1 1326.00,348.67 A3.50,3.50 0 0 1 1326.00,342.00 Z" stroke="#f5a030" stroke-width="1" fill="#ffe040" fill-opacity="0.6"/><rect x="1223.3" y="367.5" width="70.2" height="21.1" fill="#ffff80" /><text x="1224.8" y="376.3" font-size="9" fill="#222" textLength="68" lengthAdjust="spacingAndGlyphs" >Provide detail for</text><text x="1224.8" y="386.8" font-size="9" fill="#222" textLength="64" lengthAdjust="spacingAndGlyphs" >corner condition</text><path d="M1293.5,378.4 H1302.8 L1324.4,362.6" stroke="#f0a040" stroke-width="1" fill="none" /><path d="M1549.2,238.3 L1421.2,394.3 V617" stroke="#ff2020" stroke-width="1.3" fill="none" stroke-dasharray="2,2"/><path d="M526,386 L712,399.8 Q726,401 726,414 V585 Q726,597 713.7,597.3 L505,614.6 Q489,615 489,600 V564" stroke="#1a1a1a" stroke-width="2.2" fill="none" /><path d="M489.5,429.6 V564 M492.5,429.6 V564" stroke="#1a1a1a" stroke-width="0.9" fill="none" stroke-dasharray="2,1.5"/><path d="M489,428 V395 Q489,383.7 500,383.7 H518 Q525,384 525,392 V401" stroke="#1a1a1a" stroke-width="2.2" fill="none" /><path d="M530,392 L710,405 Q720,407 720,418 V582 Q720,591 711,592 L508,608 Q495,608 495,598 V430" stroke="#1a1a1a" stroke-width="0.9" fill="none" stroke-dasharray="4,2"/><path d="M580,398 V392 Q580,388 586,389 L700,398" stroke="#1a1a1a" stroke-width="1.2" fill="none" /><path d="M580,598 V604 Q580,607 586,607 L700,598" stroke="#1a1a1a" stroke-width="1.2" fill="none" /><rect x="503.5" y="403" width="174.89999999999998" height="111.20000000000005" rx="0" stroke="#1a1a1a" stroke-width="2" fill="none"/><rect x="503.5" y="514.2" width="174.89999999999998" height="75.79999999999995" rx="0" stroke="#1a1a1a" stroke-width="1.5" fill="none"/><text x="528.4" y="436" font-size="7" fill="#1a1a1a" text-anchor="middle" font-weight="bold" >STAIR 251</text><text x="584.8" y="430.5" font-size="7" fill="#1a1a1a" text-anchor="middle" font-weight="bold" >ELECTRICAL</text><text x="584.8" y="440" font-size="7" fill="#1a1a1a" text-anchor="middle" font-weight="bold" >253</text><text x="541.5" y="448.5" font-size="5.5" fill="#1a1a1a" text-anchor="middle" >UP</text><line x1="506" y1="452" x2="524" y2="452" stroke="#1a1a1a" stroke-width="1.6" stroke-dasharray="3,1.5"/><line x1="534" y1="452" x2="550" y2="452" stroke="#1a1a1a" stroke-width="0.8" /><line x1="506" y1="456" x2="524" y2="456" stroke="#1a1a1a" stroke-width="1.6" stroke-dasharray="3,1.5"/><line x1="534" y1="456" x2="550" y2="456" stroke="#1a1a1a" stroke-width="0.8" /><line x1="506" y1="460" x2="524" y2="460" stroke="#1a1a1a" stroke-width="1.6" stroke-dasharray="3,1.5"/><line x1="534" y1="460" x2="550" y2="460" stroke="#1a1a1a" stroke-width="0.8" /><line x1="506" y1="464" x2="524" y2="464" stroke="#1a1a1a" stroke-width="1.6" stroke-dasharray="3,1.5"/><line x1="534" y1="464" x2="550" y2="464" stroke="#1a1a1a" stroke-width="0.8" /><line x1="506" y1="468" x2="524" y2="468" stroke="#1a1a1a" stroke-width="1.6" stroke-dasharray="3,1.5"/><line x1="534" y1="468" x2="550" y2="468" stroke="#1a1a1a" stroke-width="0.8" /><line x1="506" y1="472" x2="524" y2="472" stroke="#1a1a1a" stroke-width="1.6" stroke-dasharray="3,1.5"/><line x1="534" y1="472" x2="550" y2="472" stroke="#1a1a1a" stroke-width="0.8" /><line x1="506" y1="476" x2="524" y2="476" stroke="#1a1a1a" stroke-width="1.6" stroke-dasharray="3,1.5"/><line x1="534" y1="476" x2="550" y2="476" stroke="#1a1a1a" stroke-width="0.8" /><line x1="506" y1="480" x2="524" y2="480" stroke="#1a1a1a" stroke-width="1.6" stroke-dasharray="3,1.5"/><line x1="534" y1="480" x2="550" y2="480" stroke="#1a1a1a" stroke-width="0.8" /><line x1="506" y1="484" x2="524" y2="484" stroke="#1a1a1a" stroke-width="1.6" stroke-dasharray="3,1.5"/><line x1="534" y1="484" x2="550" y2="484" stroke="#1a1a1a" stroke-width="0.8" /><line x1="506" y1="488" x2="524" y2="488" stroke="#1a1a1a" stroke-width="1.6" stroke-dasharray="3,1.5"/><line x1="534" y1="488" x2="550" y2="488" stroke="#1a1a1a" stroke-width="0.8" /><line x1="506" y1="492" x2="524" y2="492" stroke="#1a1a1a" stroke-width="1.6" stroke-dasharray="3,1.5"/><line x1="534" y1="492" x2="550" y2="492" stroke="#1a1a1a" stroke-width="0.8" /><line x1="506" y1="496" x2="524" y2="496" stroke="#1a1a1a" stroke-width="1.6" stroke-dasharray="3,1.5"/><line x1="534" y1="496" x2="550" y2="496" stroke="#1a1a1a" stroke-width="0.8" /><line x1="506" y1="500" x2="524" y2="500" stroke="#1a1a1a" stroke-width="1.6" stroke-dasharray="3,1.5"/><line x1="534" y1="500" x2="550" y2="500" stroke="#1a1a1a" stroke-width="0.8" /><line x1="506" y1="504" x2="524" y2="504" stroke="#1a1a1a" stroke-width="1.6" stroke-dasharray="3,1.5"/><line x1="534" y1="504" x2="550" y2="504" stroke="#1a1a1a" stroke-width="0.8" /><rect x="505" y="450" width="46" height="58" rx="0" stroke="#1a1a1a" stroke-width="1.6" fill="none"/><line x1="526" y1="450" x2="526" y2="508" stroke="#1a1a1a" stroke-width="2.5" /><line x1="532" y1="450" x2="532" y2="508" stroke="#1a1a1a" stroke-width="2.5" /><rect x="558" y="445" width="12" height="17.69999999999999" stroke="#1a1a1a" stroke-width="0.8" fill="none" stroke-dasharray="3,2"/><rect x="572" y="445" width="12" height="17.69999999999999" stroke="#1a1a1a" stroke-width="0.8" fill="none" stroke-dasharray="3,2"/><rect x="586" y="445" width="12" height="17.69999999999999" stroke="#1a1a1a" stroke-width="0.8" fill="none" stroke-dasharray="3,2"/><rect x="600" y="445" width="12" height="17.69999999999999" stroke="#1a1a1a" stroke-width="0.8" fill="none" stroke-dasharray="3,2"/><text x="602.4" y="481.5" font-size="7" fill="#1a1a1a" text-anchor="middle" font-weight="bold" >STORAGE  253A</text><text x="583.5" y="502.5" font-size="7" fill="#1a1a1a" text-anchor="middle" font-weight="bold" >STORAGE  254A</text><line x1="552" y1="514" x2="552" y2="590" stroke="#1a1a1a" stroke-width="2" /><path d="M638,394 A3.15,3.15 0 0 1 644.00,394.00 A3.15,3.15 0 0 1 650.00,394.00 A3.15,3.15 0 0 1 656.00,394.00 A3.15,3.15 0 0 1 662.00,394.00 A3.15,3.15 0 0 1 668.00,394.00 A3.15,3.15 0 0 1 674.00,394.00 A3.15,3.15 0 0 1 680.00,394.00 A3.15,3.15 0 0 1 686.00,394.00 A3.15,3.15 0 0 1 686.00,400.00 A3.15,3.15 0 0 1 686.00,406.00 A3.15,3.15 0 0 1 686.00,412.00 A3.15,3.15 0 0 1 686.00,418.00 A3.15,3.15 0 0 1 686.00,424.00 A3.15,3.15 0 0 1 686.00,430.00 A3.15,3.15 0 0 1 686.00,436.00 A3.15,3.15 0 0 1 686.00,442.00 A3.15,3.15 0 0 1 686.00,448.00 A3.15,3.15 0 0 1 686.00,454.00 A3.15,3.15 0 0 1 686.00,460.00 A3.15,3.15 0 0 1 686.00,466.00 A3.15,3.15 0 0 1 686.00,472.00 A3.15,3.15 0 0 1 686.00,478.00 A3.15,3.15 0 0 1 686.00,484.00 A3.15,3.15 0 0 1 686.00,490.00 A3.15,3.15 0 0 1 686.00,496.00 A3.15,3.15 0 0 1 686.00,502.00 A3.15,3.15 0 0 1 686.00,508.00 A3.15,3.15 0 0 1 686.00,514.00 A3.15,3.15 0 0 1 686.00,520.00 A3.15,3.15 0 0 1 686.00,526.00 A3.15,3.15 0 0 1 680.00,526.00 A3.15,3.15 0 0 1 674.00,526.00 A3.15,3.15 0 0 1 668.00,526.00 A3.15,3.15 0 0 1 662.00,526.00 A3.15,3.15 0 0 1 656.00,526.00 A3.15,3.15 0 0 1 650.00,526.00 A3.15,3.15 0 0 1 644.00,526.00 A3.15,3.15 0 0 1 638.00,526.00 A3.15,3.15 0 0 1 638.00,520.00 A3.15,3.15 0 0 1 638.00,514.00 A3.15,3.15 0 0 1 638.00,508.00 A3.15,3.15 0 0 1 638.00,502.00 A3.15,3.15 0 0 1 638.00,496.00 A3.15,3.15 0 0 1 638.00,490.00 A3.15,3.15 0 0 1 638.00,484.00 A3.15,3.15 0 0 1 638.00,478.00 A3.15,3.15 0 0 1 638.00,472.00 A3.15,3.15 0 0 1 638.00,466.00 A3.15,3.15 0 0 1 638.00,460.00 A3.15,3.15 0 0 1 638.00,454.00 A3.15,3.15 0 0 1 638.00,448.00 A3.15,3.15 0 0 1 638.00,442.00 A3.15,3.15 0 0 1 638.00,436.00 A3.15,3.15 0 0 1 638.00,430.00 A3.15,3.15 0 0 1 638.00,424.00 A3.15,3.15 0 0 1 638.00,418.00 A3.15,3.15 0 0 1 638.00,412.00 A3.15,3.15 0 0 1 638.00,406.00 A3.15,3.15 0 0 1 638.00,400.00 A3.15,3.15 0 0 1 638.00,394.00 Z" stroke="#2a2aff" stroke-width="1.2" fill="#9af5f5" fill-opacity="0.55"/><rect x="652.6" y="403" width="25.799999999999955" height="109.79999999999995" rx="0" stroke="#1a1a1a" stroke-width="2" fill="none"/><line x1="655" y1="406" x2="676" y2="510" stroke="#1a1a1a" stroke-width="0.7" /><line x1="676" y1="406" x2="655" y2="510" stroke="#1a1a1a" stroke-width="0.7" /><text x="665" y="458" font-size="5.5" fill="#222" text-anchor="middle" transform="rotate(90 665 458)">VOID</text><rect x="686.5" y="422" width="36.5" height="48.80000000000001" stroke="#1a1a1a" stroke-width="1.2" fill="none"/><line x1="686.5" y1="422" x2="723" y2="470.8" stroke="#1a1a1a" stroke-width="0.8" /><line x1="723" y1="422" x2="686.5" y2="470.8" stroke="#1a1a1a" stroke-width="0.8" /><rect x="686.5" y="473.5" width="36.5" height="47.5" stroke="#1a1a1a" stroke-width="1.2" fill="none"/><line x1="686.5" y1="473.5" x2="723" y2="521" stroke="#1a1a1a" stroke-width="0.8" /><line x1="723" y1="473.5" x2="686.5" y2="521" stroke="#1a1a1a" stroke-width="0.8" /><rect x="681" y="525" width="43.39999999999998" height="50" rx="0" stroke="#1a1a1a" stroke-width="1.6" fill="none"/><rect x="686" y="548" width="32" height="24" stroke="#1a1a1a" stroke-width="1" fill="none"/><line x1="686" y1="548" x2="718" y2="572" stroke="#1a1a1a" stroke-width="0.8" /><line x1="718" y1="548" x2="686" y2="572" stroke="#1a1a1a" stroke-width="0.8" /><rect x="705" y="530" width="15" height="15" stroke="#1a1a1a" stroke-width="0.8" fill="none"/><line x1="705" y1="530" x2="720" y2="545" stroke="#1a1a1a" stroke-width="0.8" /><line x1="720" y1="530" x2="705" y2="545" stroke="#1a1a1a" stroke-width="0.8" /><text x="529.3" y="551" font-size="7" font-weight="bold" fill="#1a1a1a" text-anchor="middle" transform="rotate(-90 529.3 551)">MOTHER'S RM 252</text><text x="607.9" y="568" font-size="6.5" fill="#1a1a1a" text-anchor="middle" font-weight="bold" >WOMEN'S RR  254</text><circle cx="600" cy="525" r="3.2" stroke="#1a1a1a" stroke-width="1.5" fill="#fff" /><circle cx="617" cy="525" r="3.2" stroke="#1a1a1a" stroke-width="1.5" fill="#fff" /><circle cx="636" cy="525" r="3.2" stroke="#1a1a1a" stroke-width="1.5" fill="#fff" /><circle cx="669" cy="525" r="3.2" stroke="#1a1a1a" stroke-width="1.5" fill="#fff" /><line x1="593" y1="514" x2="593" y2="545" stroke="#1a1a1a" stroke-width="1" /><line x1="610" y1="514" x2="610" y2="545" stroke="#1a1a1a" stroke-width="1" /><line x1="628" y1="514" x2="628" y2="545" stroke="#1a1a1a" stroke-width="1" /><line x1="648" y1="514" x2="648" y2="545" stroke="#1a1a1a" stroke-width="1" /><path d="M575,545 V555 H593 V545" stroke="#1a1a1a" stroke-width="0.9" fill="none" /><rect x="592" y="581" width="12" height="7" rx="0" stroke="#1a1a1a" stroke-width="1.2" fill="none"/><rect x="613" y="581" width="12" height="7" rx="0" stroke="#1a1a1a" stroke-width="1.2" fill="none"/><rect x="506" y="555" width="14" height="20" rx="0" stroke="#1a1a1a" stroke-width="0.8" fill="none"/><circle cx="541" cy="404" r="5" stroke="#1a1a1a" stroke-width="1.1" fill="#fff" /><text x="541" y="406.2" font-size="5.5" fill="#1a1a1a" text-anchor="middle" font-weight="bold" >251</text><circle cx="563" cy="404" r="5" stroke="#1a1a1a" stroke-width="1.1" fill="#fff" /><text x="563" y="406.2" font-size="5.5" fill="#1a1a1a" text-anchor="middle" font-weight="bold" >253</text><circle cx="618" cy="415" r="5" stroke="#1a1a1a" stroke-width="1.1" fill="#fff" /><text x="618" y="417.2" font-size="5.5" fill="#1a1a1a" text-anchor="middle" font-weight="bold" >253A</text><circle cx="563" cy="552" r="5" stroke="#1a1a1a" stroke-width="1.1" fill="#fff" /><text x="563" y="554.2" font-size="5.5" fill="#1a1a1a" text-anchor="middle" font-weight="bold" >254A</text><circle cx="655" cy="563" r="5" stroke="#1a1a1a" stroke-width="1.1" fill="#fff" /><text x="655" y="565.2" font-size="5.5" fill="#1a1a1a" text-anchor="middle" font-weight="bold" >254B</text><circle cx="541" cy="591" r="5" stroke="#1a1a1a" stroke-width="1.1" fill="#fff" /><text x="541" y="593.2" font-size="5.5" fill="#1a1a1a" text-anchor="middle" font-weight="bold" >252</text><circle cx="563" cy="591" r="5" stroke="#1a1a1a" stroke-width="1.1" fill="#fff" /><text x="563" y="593.2" font-size="5.5" fill="#1a1a1a" text-anchor="middle" font-weight="bold" >254</text><path d="M548,398 A14,14 0 0 1 560,412" stroke="#1a1a1a" stroke-width="0.9" fill="none" /><path d="M568,418 A14,14 0 0 0 580,404" stroke="#1a1a1a" stroke-width="0.9" fill="none" /><g transform="translate(545,402)"><path d="M10.14,0.00 A3.88,3.88 0 1 1 7.77,6.52 A3.88,3.88 0 1 1 1.76,9.99 A3.88,3.88 0 1 1 -5.07,8.78 A3.88,3.88 0 1 1 -9.53,3.47 A3.88,3.88 0 1 1 -9.53,-3.47 A3.88,3.88 0 1 1 -5.07,-8.78 A3.88,3.88 0 1 1 1.76,-9.99 A3.88,3.88 0 1 1 7.77,-6.52 A3.88,3.88 0 1 1 10.14,-0.00 Z" stroke="#ff3030" stroke-width="1" fill="none" /></g><circle cx="662" cy="541.3" r="13" stroke="#f66" stroke-width="0" fill="#f06060" opacity="0.9"/><path d="M669,540 L730,607" stroke="#ee2a2a" stroke-width="1" fill="none" /><text x="731" y="606" font-size="9" fill="#ee2a2a" textLength="56" lengthAdjust="spacingAndGlyphs" >Verify 60in clr.</text><text x="731" y="616.5" font-size="9" fill="#ee2a2a" textLength="59" lengthAdjust="spacingAndGlyphs" >radius for ADA</text><path d="M683.8,602 L690.5,620 H701.4" stroke="#1a1a1a" stroke-width="0.9" fill="none" /><circle cx="712" cy="620.4" r="11.7" stroke="#1a1a1a" stroke-width="1.1" fill="#fff" /><line x1="701" y1="621" x2="723" y2="621" stroke="#1a1a1a" stroke-width="0.8" /><text x="712" y="618" font-size="5.5" fill="#1a1a1a" text-anchor="middle" >1</text><text x="712" y="627.5" font-size="5.5" fill="#1a1a1a" text-anchor="middle" >A6.02</text><text x="761.8" y="487" font-size="7" fill="#1a1a1a" text-anchor="middle" font-weight="bold" >LOBBY  256</text><path d="M730,508 H790" stroke="#f08a30" stroke-width="1.2" fill="none" /><path d="M736,505 L729,508 L736,511 M784,505 L791,508 L784,511" stroke="#f08a30" stroke-width="1.2" fill="none" /><text x="760" y="511" font-size="8" fill="#f08a30" text-anchor="middle" >?</text><text x="466" y="460" font-size="7" fill="#1a1a1a" text-anchor="middle" font-weight="bold" >ICE  249</text><text x="464" y="548" font-size="7" fill="#1a1a1a" text-anchor="middle" font-weight="bold" >PY  250</text><path d="M453,418.8 H479 Q489.5,418.8 489.5,429.6 H503" stroke="#1a1a1a" stroke-width="3.4" fill="none" /><path d="M453,418.8 H479 Q489.5,418.8 489.5,429.6 H503" stroke="#b0b0b0" stroke-width="1.3" fill="none" /><path d="M453,497.4 H503" stroke="#1a1a1a" stroke-width="3.4" fill="none" /><path d="M453,497.4 H503" stroke="#b0b0b0" stroke-width="1.3" fill="none" /><path d="M453,575 H479 Q489.5,575 489.5,564 H503" stroke="#1a1a1a" stroke-width="3.4" fill="none" /><path d="M453,575 H479 Q489.5,575 489.5,564 H503" stroke="#b0b0b0" stroke-width="1.3" fill="none" /><path d="M829,388 A3.68,3.68 0 0 1 836.00,388.00 A3.68,3.68 0 0 1 843.00,388.00 A3.68,3.68 0 0 1 850.00,388.00 A3.68,3.68 0 0 1 857.00,388.00 A3.68,3.68 0 0 1 864.00,388.00 A3.68,3.68 0 0 1 871.00,388.00 A3.68,3.68 0 0 1 878.00,388.00 A3.68,3.68 0 0 1 885.00,388.00 A3.68,3.68 0 0 1 892.00,388.00 A3.68,3.68 0 0 1 899.00,388.00 A3.68,3.68 0 0 1 906.00,388.00 A3.68,3.68 0 0 1 913.00,388.00 A3.68,3.68 0 0 1 920.00,388.00 A3.68,3.68 0 0 1 927.00,388.00 A3.68,3.68 0 0 1 934.00,388.00 A3.65,3.65 0 0 1 934.00,394.95 A3.65,3.65 0 0 1 934.00,401.90 A3.65,3.65 0 0 1 934.00,408.85 A3.65,3.65 0 0 1 934.00,415.80 A3.65,3.65 0 0 1 934.00,422.75 A3.65,3.65 0 0 1 934.00,429.70 A3.65,3.65 0 0 1 934.00,436.65 A3.65,3.65 0 0 1 934.00,443.60 A3.65,3.65 0 0 1 934.00,450.55 A3.65,3.65 0 0 1 934.00,457.50 A3.65,3.65 0 0 1 934.00,464.45 A3.65,3.65 0 0 1 934.00,471.40 A3.65,3.65 0 0 1 934.00,478.35 A3.65,3.65 0 0 1 934.00,485.30 A3.65,3.65 0 0 1 934.00,492.25 A3.65,3.65 0 0 1 934.00,499.20 A3.65,3.65 0 0 1 934.00,506.15 A3.65,3.65 0 0 1 934.00,513.10 A3.65,3.65 0 0 1 934.00,520.05 A3.65,3.65 0 0 1 934.00,527.00 A3.68,3.68 0 0 1 927.00,527.00 A3.68,3.68 0 0 1 920.00,527.00 A3.68,3.68 0 0 1 913.00,527.00 A3.68,3.68 0 0 1 906.00,527.00 A3.68,3.68 0 0 1 899.00,527.00 A3.68,3.68 0 0 1 892.00,527.00 A3.68,3.68 0 0 1 885.00,527.00 A3.68,3.68 0 0 1 878.00,527.00 A3.68,3.68 0 0 1 871.00,527.00 A3.68,3.68 0 0 1 864.00,527.00 A3.68,3.68 0 0 1 857.00,527.00 A3.68,3.68 0 0 1 850.00,527.00 A3.68,3.68 0 0 1 843.00,527.00 A3.68,3.68 0 0 1 836.00,527.00 A3.68,3.68 0 0 1 829.00,527.00 A3.65,3.65 0 0 1 829.00,520.05 A3.65,3.65 0 0 1 829.00,513.10 A3.65,3.65 0 0 1 829.00,506.15 A3.65,3.65 0 0 1 829.00,499.20 A3.65,3.65 0 0 1 829.00,492.25 A3.65,3.65 0 0 1 829.00,485.30 A3.65,3.65 0 0 1 829.00,478.35 A3.65,3.65 0 0 1 829.00,471.40 A3.65,3.65 0 0 1 829.00,464.45 A3.65,3.65 0 0 1 829.00,457.50 A3.65,3.65 0 0 1 829.00,450.55 A3.65,3.65 0 0 1 829.00,443.60 A3.65,3.65 0 0 1 829.00,436.65 A3.65,3.65 0 0 1 829.00,429.70 A3.65,3.65 0 0 1 829.00,422.75 A3.65,3.65 0 0 1 829.00,415.80 A3.65,3.65 0 0 1 829.00,408.85 A3.65,3.65 0 0 1 829.00,401.90 A3.65,3.65 0 0 1 829.00,394.95 A3.65,3.65 0 0 1 829.00,388.00 Z" stroke="#2a2aff" stroke-width="1.2" fill="#9af5f5" fill-opacity="0.55"/><path d="M934,389.5 L812.5,397.6 Q793.6,400 793.6,418 V580 Q793.6,596 812.5,597 L934,605" stroke="#1a1a1a" stroke-width="2.2" fill="none" /><path d="M934,395 L813,403 Q799,405 799,420 V578 Q799,591 813,592 L934,600" stroke="#1a1a1a" stroke-width="0.8" fill="none" /><rect x="798" y="422.3" width="36" height="48.39999999999998" stroke="#1a1a1a" stroke-width="1.2" fill="none"/><line x1="798" y1="422.3" x2="834" y2="470.7" stroke="#1a1a1a" stroke-width="0.8" /><line x1="834" y1="422.3" x2="798" y2="470.7" stroke="#1a1a1a" stroke-width="0.8" /><rect x="798" y="473.5" width="36" height="48.299999999999955" stroke="#1a1a1a" stroke-width="1.2" fill="none"/><line x1="798" y1="473.5" x2="834" y2="521.8" stroke="#1a1a1a" stroke-width="0.8" /><line x1="834" y1="473.5" x2="798" y2="521.8" stroke="#1a1a1a" stroke-width="0.8" /><line x1="840.8" y1="403" x2="840.8" y2="575.6" stroke="#1a1a1a" stroke-width="2.8" /><line x1="794.9" y1="575.6" x2="840.8" y2="575.6" stroke="#1a1a1a" stroke-width="2.8" /><polygon points="870.50,514.80 870.50,592.00 873.50,592.00 873.50,514.80" fill="#9a9a9a" stroke="#1a1a1a" stroke-width="0.8"/><polygon points="872.00,593.50 934.00,593.50 934.00,590.50 872.00,590.50" fill="#9a9a9a" stroke="#1a1a1a" stroke-width="0.8"/><rect x="876" y="570" width="58" height="17" rx="0" stroke="#1a1a1a" stroke-width="1" fill="none"/><path d="M866,556 A10,10 0 0 0 856,566 H872" stroke="#1a1a1a" stroke-width="0.9" fill="none" /><rect x="800.7" y="546.7" width="30.5" height="26.299999999999955" rx="0" stroke="#1a1a1a" stroke-width="1" fill="none"/><line x1="800.7" y1="573" x2="831.2" y2="546.7" stroke="#1a1a1a" stroke-width="0.8" /><line x1="796" y1="527" x2="934" y2="527" stroke="#1a1a1a" stroke-width="2" /><text x="888.4" y="414.5" font-size="7" fill="#1a1a1a" text-anchor="middle" font-weight="bold" >SERVER  257</text><text x="907.4" y="506.5" font-size="7" fill="#1a1a1a" text-anchor="middle" font-weight="bold" >STORAGE  258</text><rect x="853" y="426" width="27" height="65" stroke="#1a1a1a" stroke-width="0.9" fill="none" stroke-dasharray="3,2"/><line x1="866.5" y1="426" x2="866.5" y2="491" stroke="#1a1a1a" stroke-width="0.7" /><line x1="853" y1="448" x2="880" y2="448" stroke="#1a1a1a" stroke-width="0.7" /><line x1="853" y1="469" x2="880" y2="469" stroke="#1a1a1a" stroke-width="0.7" /><rect x="888.4" y="426" width="25.600000000000023" height="65" stroke="#1a1a1a" stroke-width="0.9" fill="none" stroke-dasharray="3,2"/><line x1="901.2" y1="426" x2="901.2" y2="491" stroke="#1a1a1a" stroke-width="0.7" /><line x1="888.4" y1="448" x2="914" y2="448" stroke="#1a1a1a" stroke-width="0.7" /><line x1="888.4" y1="469" x2="914" y2="469" stroke="#1a1a1a" stroke-width="0.7" /><rect x="922" y="426" width="18" height="65" stroke="#1a1a1a" stroke-width="0.9" fill="none" stroke-dasharray="3,2"/><line x1="931.0" y1="426" x2="931.0" y2="491" stroke="#1a1a1a" stroke-width="0.7" /><line x1="922" y1="448" x2="940" y2="448" stroke="#1a1a1a" stroke-width="0.7" /><line x1="922" y1="469" x2="940" y2="469" stroke="#1a1a1a" stroke-width="0.7" /><text x="910" y="567" font-size="6.5" fill="#1a1a1a" text-anchor="middle" font-weight="bold" >MEN'S RR  25</text><circle cx="851" cy="527" r="3.2" stroke="#1a1a1a" stroke-width="1.5" fill="#fff" /><circle cx="884" cy="527" r="3.2" stroke="#1a1a1a" stroke-width="1.5" fill="#fff" /><circle cx="905" cy="523" r="3" stroke="#1a1a1a" stroke-width="1.2" fill="#fff" /><circle cx="922" cy="523" r="3" stroke="#1a1a1a" stroke-width="1.2" fill="#fff" /><rect x="882" y="575" width="11" height="8" rx="0" stroke="#1a1a1a" stroke-width="1.3" fill="none"/><rect x="908" y="575" width="11" height="8" rx="0" stroke="#1a1a1a" stroke-width="1.3" fill="none"/><circle cx="866" cy="563.7" r="5" stroke="#1a1a1a" stroke-width="1.1" fill="#fff" /><text x="866" y="565.9000000000001" font-size="5.5" fill="#1a1a1a" text-anchor="middle" font-weight="bold" >258B</text><rect x="823.7" y="340.2" width="176.29999999999995" height="195.50000000000006" stroke="#3a9ae0" stroke-width="0.9" fill="none" stroke-dasharray="2,2"/><rect x="820.7" y="337.2" width="6" height="6" fill="#3a8ad0" /><rect x="820.7" y="532.7" width="6" height="6" fill="#3a8ad0" /><rect x="847.7" y="345.7" width="82" height="20" fill="#c8fafa" /><text x="849" y="353.3" font-size="8.5" fill="#222" textLength="74" lengthAdjust="spacingAndGlyphs" >Provide enlarged plan</text><text x="849" y="362.3" font-size="8.5" fill="#222" textLength="54" lengthAdjust="spacingAndGlyphs" >for equip. layout</text><line x1="887" y1="369" x2="887" y2="386" stroke="#2a2aff" stroke-width="1" /><line x1="908.6" y1="365.6" x2="908.6" y2="380.8" stroke="#999" stroke-width="1" stroke-dasharray="2,2"/><circle cx="845.8" cy="344.3" r="4" stroke="#777" stroke-width="0.8" fill="#b8b060" /><circle cx="845.8" cy="365.6" r="4" stroke="#777" stroke-width="0.8" fill="#b8b060" /><circle cx="928" cy="344.3" r="4" stroke="#777" stroke-width="0.8" fill="#b8b060" /><circle cx="928" cy="365.6" r="4" stroke="#777" stroke-width="0.8" fill="#b8b060" /><circle cx="834.5" cy="391.3" r="4" stroke="#777" stroke-width="0.8" fill="#b8b060" /><circle cx="834.5" cy="526" r="4" stroke="#777" stroke-width="0.8" fill="#b8b060" /><rect x="842.3" y="351.5" width="7" height="7" fill="#b8a850" stroke="#777" stroke-width="0.8"/><rect x="924.5" y="351.5" width="7" height="7" fill="#b8a850" stroke="#777" stroke-width="0.8"/><rect x="883.5" y="340.8" width="7" height="7" fill="#b8a850" stroke="#777" stroke-width="0.8"/><rect x="883.5" y="365.7" width="7" height="7" fill="#b8a850" stroke="#777" stroke-width="0.8"/><circle cx="908.6" cy="359.3" r="4" stroke="#777" stroke-width="0" fill="#3a88d8" /><circle cx="887.1" cy="318.3" r="4" stroke="#777" stroke-width="0" fill="#3a88d8" /><line x1="887.1" y1="322" x2="887.1" y2="340" stroke="#3a9ae0" stroke-width="1" stroke-dasharray="2,2"/><path d="M453,653 L641,667 L672,668 L870,668 L1100,650" stroke="#1a1a1a" stroke-width="0.9" fill="none" stroke-dasharray="3,2"/><path d="M453,660 Q468,660 468,675 V774" stroke="#1a1a1a" stroke-width="3.4" fill="none" /><path d="M453,660 Q468,660 468,675 V774" stroke="#b0b0b0" stroke-width="1.3" fill="none" /><text x="457" y="690" font-size="7" fill="#1a1a1a" text-anchor="middle" font-weight="bold" >38</text><text x="457" y="743" font-size="7" fill="#1a1a1a" text-anchor="middle" font-weight="bold" >39</text><polygon points="453.00,714.50 468.00,714.50 468.00,711.50 453.00,711.50" fill="#9a9a9a" stroke="#1a1a1a" stroke-width="0.8"/><circle cx="467" cy="701" r="4.8" stroke="#1a1a1a" stroke-width="1.1" fill="#fff" /><text x="467" y="703.2" font-size="5.5" fill="#1a1a1a" text-anchor="middle" font-weight="bold" >238</text><circle cx="467" cy="724.5" r="4.8" stroke="#1a1a1a" stroke-width="1.1" fill="#fff" /><text x="467" y="726.7" font-size="5.5" fill="#1a1a1a" text-anchor="middle" font-weight="bold" >239</text><path d="M571,697 A3.76,3.76 0 0 1 578.17,697.00 A3.76,3.76 0 0 1 585.33,697.00 A3.76,3.76 0 0 1 592.50,697.00 A3.76,3.76 0 0 1 599.67,697.00 A3.76,3.76 0 0 1 606.83,697.00 A3.76,3.76 0 0 1 614.00,697.00 A3.76,3.76 0 0 1 621.17,697.00 A3.76,3.76 0 0 1 628.33,697.00 A3.76,3.76 0 0 1 635.50,697.00 A3.76,3.76 0 0 1 642.67,697.00 A3.76,3.76 0 0 1 649.83,697.00 A3.76,3.76 0 0 1 657.00,697.00 A3.68,3.68 0 0 1 657.00,704.00 A3.68,3.68 0 0 1 657.00,711.00 A3.68,3.68 0 0 1 657.00,718.00 A3.68,3.68 0 0 1 657.00,725.00 A3.68,3.68 0 0 1 657.00,732.00 A3.68,3.68 0 0 1 657.00,739.00 A3.68,3.68 0 0 1 657.00,746.00 A3.68,3.68 0 0 1 657.00,753.00 A3.68,3.68 0 0 1 657.00,760.00 A3.68,3.68 0 0 1 657.00,767.00 A3.68,3.68 0 0 1 657.00,774.00 A3.68,3.68 0 0 1 657.00,781.00 A3.68,3.68 0 0 1 657.00,788.00 A3.76,3.76 0 0 1 649.83,788.00 A3.76,3.76 0 0 1 642.67,788.00 A3.76,3.76 0 0 1 635.50,788.00 A3.76,3.76 0 0 1 628.33,788.00 A3.76,3.76 0 0 1 621.17,788.00 A3.76,3.76 0 0 1 614.00,788.00 A3.76,3.76 0 0 1 606.83,788.00 A3.76,3.76 0 0 1 599.67,788.00 A3.76,3.76 0 0 1 592.50,788.00 A3.76,3.76 0 0 1 585.33,788.00 A3.76,3.76 0 0 1 578.17,788.00 A3.76,3.76 0 0 1 571.00,788.00 A3.68,3.68 0 0 1 571.00,781.00 A3.68,3.68 0 0 1 571.00,774.00 A3.68,3.68 0 0 1 571.00,767.00 A3.68,3.68 0 0 1 571.00,760.00 A3.68,3.68 0 0 1 571.00,753.00 A3.68,3.68 0 0 1 571.00,746.00 A3.68,3.68 0 0 1 571.00,739.00 A3.68,3.68 0 0 1 571.00,732.00 A3.68,3.68 0 0 1 571.00,725.00 A3.68,3.68 0 0 1 571.00,718.00 A3.68,3.68 0 0 1 571.00,711.00 A3.68,3.68 0 0 1 571.00,704.00 A3.68,3.68 0 0 1 571.00,697.00 Z" stroke="#2a2aff" stroke-width="1.2" fill="#9af5f5" fill-opacity="0.55"/><path d="M526,774.7 V676 Q526,660 541,660 L636,667 Q642.5,668 642.5,680 V774" stroke="#1a1a1a" stroke-width="3.4" fill="none" /><path d="M526,774.7 V676 Q526,660 541,660 L636,667 Q642.5,668 642.5,680 V774" stroke="#b0b0b0" stroke-width="1.3" fill="none" /><polygon points="526.00,714.50 642.50,714.50 642.50,711.50 526.00,711.50" fill="#9a9a9a" stroke="#1a1a1a" stroke-width="0.8"/><polygon points="582.90,665.80 582.90,774.70 585.90,774.70 585.90,665.80" fill="#9a9a9a" stroke="#1a1a1a" stroke-width="0.8"/><text x="555.7" y="690.5" font-size="7" fill="#1a1a1a" text-anchor="middle" font-weight="bold" >OFFICE  236</text><text x="613" y="690.5" font-size="7" fill="#1a1a1a" text-anchor="middle" font-weight="bold" >MEETING  234</text><text x="555.7" y="743" font-size="7" fill="#1a1a1a" text-anchor="middle" font-weight="bold" >OFFICE  237</text><text x="613" y="743" font-size="7" fill="#1a1a1a" text-anchor="middle" font-weight="bold" >MEETING  235</text><path d="M526,696 A17,17 0 0 1 526,730" stroke="#1a1a1a" stroke-width="1" fill="none" /><path d="M642.5,696 A17,17 0 0 0 642.5,730" stroke="#1a1a1a" stroke-width="1" fill="none" /><circle cx="526" cy="701" r="4.8" stroke="#1a1a1a" stroke-width="1.1" fill="#fff" /><text x="526" y="703.2" font-size="5.5" fill="#1a1a1a" text-anchor="middle" font-weight="bold" >236</text><circle cx="526" cy="724.5" r="4.8" stroke="#1a1a1a" stroke-width="1.1" fill="#fff" /><text x="526" y="726.7" font-size="5.5" fill="#1a1a1a" text-anchor="middle" font-weight="bold" >237</text><circle cx="647.4" cy="701" r="4.8" stroke="#1a1a1a" stroke-width="1.1" fill="#fff" /><text x="647.4" y="703.2" font-size="5.5" fill="#1a1a1a" text-anchor="middle" font-weight="bold" >234</text><circle cx="647.4" cy="724.5" r="4.8" stroke="#1a1a1a" stroke-width="1.1" fill="#fff" /><text x="647.4" y="726.7" font-size="5.5" fill="#1a1a1a" text-anchor="middle" font-weight="bold" >235</text><path d="M645,657 H876 Q881.8,657 881.8,663 V781 Q881.8,787.6 876,787.6 H645 Q639.7,787.6 639.7,781 V663 Q639.7,657 645,657 Z" stroke="#1a1a1a" stroke-width="1.2" fill="none" stroke-dasharray="5,3"/><path d="M672.6,668.6 L760,676 L848.8,668.6 V694.4 H672.6 Z" stroke="#1a1a1a" stroke-width="1" fill="none" /><polygon points="672.60,673.50 848.80,673.50 848.80,670.50 672.60,670.50" fill="#9a9a9a" stroke="#1a1a1a" stroke-width="0.8"/><rect x="675" y="680" width="25" height="14.399999999999977" rx="0" stroke="#1a1a1a" stroke-width="1" fill="none"/><rect x="822" y="680" width="26" height="14.399999999999977" rx="0" stroke="#1a1a1a" stroke-width="1" fill="none"/><rect x="706" y="680" width="109" height="14.399999999999977" rx="0" stroke="#1a1a1a" stroke-width="0.9" fill="none"/><rect x="752" y="684" width="18" height="8" rx="0" stroke="#1a1a1a" stroke-width="1" fill="none"/><rect x="706" y="703.6" width="107.60000000000002" height="35.299999999999955" stroke="#1a1a1a" stroke-width="0.9" fill="none" stroke-dasharray="3,2"/><rect x="706" y="713" width="107.60000000000002" height="17" rx="0" stroke="#1a1a1a" stroke-width="1" fill="none"/><text x="762" y="724.5" font-size="7" fill="#1a1a1a" text-anchor="middle" font-weight="bold" >BREAK ROOM  233</text><rect x="664" y="751.7" width="192" height="16.299999999999955" rx="0" stroke="#1a1a1a" stroke-width="1" fill="none"/><rect x="664" y="751.7" width="16" height="16.299999999999955" stroke="#1a1a1a" stroke-width="1.3" fill="none"/><line x1="664" y1="751.7" x2="680" y2="768" stroke="#1a1a1a" stroke-width="0.8" /><line x1="680" y1="751.7" x2="664" y2="768" stroke="#1a1a1a" stroke-width="0.8" /><rect x="840" y="751.7" width="16" height="16.299999999999955" stroke="#1a1a1a" stroke-width="1.3" fill="none"/><line x1="840" y1="751.7" x2="856" y2="768" stroke="#1a1a1a" stroke-width="0.8" /><line x1="856" y1="751.7" x2="840" y2="768" stroke="#1a1a1a" stroke-width="0.8" /><path d="M877.5,774 V680 Q877.5,668 890,666 L940,660" stroke="#1a1a1a" stroke-width="3.4" fill="none" /><path d="M877.5,774 V680 Q877.5,668 890,666 L940,660" stroke="#b0b0b0" stroke-width="1.3" fill="none" /><polygon points="877.50,714.50 940.00,714.50 940.00,711.50 877.50,711.50" fill="#9a9a9a" stroke="#1a1a1a" stroke-width="0.8"/><text x="907.6" y="692" font-size="7" fill="#1a1a1a" text-anchor="middle" font-weight="bold" >MEETING  231</text><text x="907.6" y="750.5" font-size="7" fill="#1a1a1a" text-anchor="middle" font-weight="bold" >MEETING  232</text><path d="M877.5,696 A17,17 0 0 1 877.5,730" stroke="#1a1a1a" stroke-width="1" fill="none" /><circle cx="872" cy="701" r="4.8" stroke="#1a1a1a" stroke-width="1.1" fill="#fff" /><text x="872" y="703.2" font-size="5.5" fill="#1a1a1a" text-anchor="middle" font-weight="bold" >231</text><circle cx="872" cy="724.5" r="4.8" stroke="#1a1a1a" stroke-width="1.1" fill="#fff" /><text x="872" y="726.7" font-size="5.5" fill="#1a1a1a" text-anchor="middle" font-weight="bold" >232</text><path d="M881.8,787.6 L893,800" stroke="#1a1a1a" stroke-width="0.9" fill="none" /><circle cx="899.9" cy="810.5" r="11.5" stroke="#1a1a1a" stroke-width="1.1" fill="#fff" /><line x1="889" y1="811" x2="911" y2="811" stroke="#1a1a1a" stroke-width="0.8" /><text x="899.9" y="808.5" font-size="5.5" fill="#1a1a1a" text-anchor="middle" >01</text><text x="899.9" y="818" font-size="5.5" fill="#1a1a1a" text-anchor="middle" >A6.01</text><rect x="681" y="805.3" width="82.7" height="30.4" fill="#c8fafa" /><text x="684" y="814" font-size="8.5" fill="#222" textLength="39" lengthAdjust="spacingAndGlyphs" >Provide AV</text><text x="684" y="823" font-size="8.5" fill="#222" textLength="57" lengthAdjust="spacingAndGlyphs" >requirements for</text><text x="684" y="832" font-size="8.5" fill="#222" textLength="51" lengthAdjust="spacingAndGlyphs" >meeting rooms</text><path d="M681,820.5 H669 L652.6,784.7" stroke="#2a2aff" stroke-width="1" fill="none" /><path d="M1185,401.6 H1400 Q1417.5,401.6 1417.5,415 V700" stroke="#1a1a1a" stroke-width="0.9" fill="none" stroke-dasharray="3,2"/><path d="M1185,418 H1392 Q1401,418 1401,427 V700" stroke="#222" stroke-width="1.8" fill="none" /><text x="1249.3" y="493.8" font-size="7" fill="#1a1a1a" text-anchor="middle" font-weight="bold" >OPEN OFFICE  263</text><path d="M1563.5,613.8 L1466,622 Q1453,622 1453,609 V390 Q1453,375 1466,374 L1563.5,381" stroke="#1a1a1a" stroke-width="3.4" fill="none" /><path d="M1563.5,613.8 L1466,622 Q1453,622 1453,609 V390 Q1453,375 1466,374 L1563.5,381" stroke="#b0b0b0" stroke-width="1.3" fill="none" /><polygon points="1453.00,439.90 1563.50,439.90 1563.50,436.90 1453.00,436.90" fill="#9a9a9a" stroke="#1a1a1a" stroke-width="0.8"/><polygon points="1453.00,557.50 1563.50,557.50 1563.50,554.50 1453.00,554.50" fill="#9a9a9a" stroke="#1a1a1a" stroke-width="0.8"/><path d="M1453,422 A17,17 0 0 1 1453,456" stroke="#1a1a1a" stroke-width="1" fill="none" /><path d="M1453,538 A17,17 0 0 1 1453,572" stroke="#1a1a1a" stroke-width="1" fill="none" /><circle cx="1453" cy="427.4" r="5" stroke="#1a1a1a" stroke-width="1.1" fill="#fff" /><text x="1453" y="429.59999999999997" font-size="5.5" fill="#1a1a1a" text-anchor="middle" font-weight="bold" >264</text><circle cx="1453" cy="451" r="5" stroke="#1a1a1a" stroke-width="1.1" fill="#fff" /><text x="1453" y="453.2" font-size="5.5" fill="#1a1a1a" text-anchor="middle" font-weight="bold" >265A</text><circle cx="1453" cy="543.6" r="5" stroke="#1a1a1a" stroke-width="1.1" fill="#fff" /><text x="1453" y="545.8000000000001" font-size="5.5" fill="#1a1a1a" text-anchor="middle" font-weight="bold" >265B</text><circle cx="1453" cy="567.6" r="5" stroke="#1a1a1a" stroke-width="1.1" fill="#fff" /><text x="1453" y="569.8000000000001" font-size="5.5" fill="#1a1a1a" text-anchor="middle" font-weight="bold" >266</text><text x="1507.9" y="411.3" font-size="7" fill="#1a1a1a" text-anchor="middle" font-weight="bold" >MEETING  264</text><rect x="1485.4" y="453.4" width="46.19999999999982" height="88.20000000000005" stroke="#1a1a1a" stroke-width="0.9" fill="none" stroke-dasharray="3,2"/><text x="1507.9" y="502.2" font-size="7" fill="#1a1a1a" text-anchor="middle" font-weight="bold" >CONFERENCE  265</text><text x="1507.9" y="588.8" font-size="7" fill="#1a1a1a" text-anchor="middle" font-weight="bold" >MEETING  266</text><polygon points="1440,388.6 1453,401.6 1440,414.6 1427,401.6" fill="#c8c8c8" stroke="#ff3030" stroke-width="1"/><text x="1440" y="405.1" font-size="9" fill="#ff3030" text-anchor="middle" >W-1</text><polygon points="1438.6,582.6 1451.6,595.6 1438.6,608.6 1425.6,595.6" fill="#c8c8c8" stroke="#ff3030" stroke-width="1"/><text x="1438.6" y="599.1" font-size="9" fill="#ff3030" text-anchor="middle" >W-1</text><line x1="1421" y1="626.8" x2="1466" y2="622.4" stroke="#1a1a1a" stroke-width="1" /><text x="1454.4" y="691.5" font-size="7" fill="#1a1a1a" text-anchor="middle" font-weight="bold" >OPEN OFFICE  222</text><text x="1417" y="715" font-size="9" fill="#ee2a2a" textLength="91" lengthAdjust="spacingAndGlyphs" >urniture plan for Open</text><text x="1417" y="725.5" font-size="9" fill="#ee2a2a" textLength="52" lengthAdjust="spacingAndGlyphs" >e area layout</text><text x="1297" y="738.8" font-size="7" fill="#1a1a1a" text-anchor="middle" font-weight="bold" >OFFICE  224</text><polygon points="1226.20,732.00 1226.20,774.00 1229.20,774.00 1229.20,732.00" fill="#9a9a9a" stroke="#1a1a1a" stroke-width="0.8"/><polygon points="1343.20,732.00 1343.20,774.00 1346.20,774.00 1346.20,732.00" fill="#9a9a9a" stroke="#1a1a1a" stroke-width="0.8"/></g><rect x="1689" y="132" width="1.6" height="798" fill="#111" /><rect x="1705" y="132" width="19" height="798" fill="#ededed" /><rect x="1705" y="326" width="19" height="426" fill="#c9c9c9" /><path d="M1710,145 L1714.5,140.5 L1719,145" stroke="#555" stroke-width="1.4" fill="none" /><path d="M1710,918 L1714.5,922.5 L1719,918" stroke="#555" stroke-width="1.4" fill="none" /><rect x="452" y="930" width="1273" height="33" fill="#1f2023" /><rect x="452" y="963" width="1273" height="2" fill="#121314" /><rect x="697" y="931" width="34" height="32" fill="#175589" /><rect x="1290" y="931" width="15" height="32" fill="#3a3b3e" /><rect x="1430" y="931" width="33" height="32" fill="#175589" /><g transform="translate(469,947)"><path d="M-8,-7 H8 V8 H-8 Z M-8,-5 H8" stroke="#5a5a5a" stroke-width="1.3" fill="none" /></g><g transform="translate(503,947)"><path d="M-8,-7 H8 V8 H-8 Z M-8,-5 H8 M0,-5 V8" stroke="#e6e6e6" stroke-width="1.15" fill="none" /></g><g transform="translate(537,947)"><path d="M-8,-7 H8 V8 H-8 Z M-8,-5 H8 M-8,1 H8 M-8,3 H8" stroke="#e6e6e6" stroke-width="1.15" fill="none" /></g><g transform="translate(576,947)"><path d="M-8,-8 H8 V8 H-8 Z M-5,-5 H2 L5,-2 V6 H-5 Z" stroke="#e6e6e6" stroke-width="1.15" fill="none" /></g><g transform="translate(610,947)"><path d="M-6,-9 H3 L7,-5 V9 H-6 Z M3,-9 V-5 H7 M0,-4 V6 M-5,1 H5 M-2,-2 L0,-4 L2,-2 M-2,4 L0,6 L2,4" stroke="#e6e6e6" stroke-width="1.2" fill="none" /></g><g transform="translate(644,947)"><path d="M-7,-9 V-7 H7 V-9 M-7,-1 V9 H7 V2 L4,-2 H-7 M-7,7 H7 M-5,5 L-7,7 L-5,9 M5,5 L7,7 L5,9" stroke="#e6e6e6" stroke-width="1.2" fill="none" /></g><g transform="translate(678,947)"><path d="M-8,-3 H-4 L-2,-1 V4 H-8 Z M1,-3 H5 L7,-1 V4 H1 Z" stroke="#e6e6e6" stroke-width="1.15" fill="none" /></g><g transform="translate(713,947)"><path d="M-5,6 Q-9,0 -8,-2 Q-7,-3 -5,0 V-7 Q-4,-9 -3,-7 V-2 V-8 Q-1,-10 0,-8 V-2 V-7 Q2,-9 3,-7 V-1 V-5 Q5,-7 6,-5 V2 Q6,8 2,9 H-2 Q-4,8 -5,6 Z" stroke="#e6e6e6" stroke-width="1.15" fill="none" /></g><g transform="translate(746,947)"><path d="M-6,-8 V6 L-3,3 L0,9 L2,8 L-1,2 H4 Z" stroke="#e6e6e6" stroke-width="1.15" fill="none" /></g><g transform="translate(780,947)"><path d="M-7,-8 H-3 M-5,-8 V9 M-7,9 H-3" stroke="#e6e6e6" stroke-width="1.15" fill="none" /><text x="5" y="5" font-size="12" fill="#e6e6e6" text-anchor="middle" >A</text></g><g transform="translate(814,947)"><path d="M-8,-2 a6,6 0 1 0 12,0 a6,6 0 1 0 -12,0 M2.5,3 L8,9 M-4,-3 H0 M-2,-5 V-1 M-4,1 H0" stroke="#e6e6e6" stroke-width="1.15" fill="none" /></g><g transform="translate(848,947)"><path d="M-5,-6 V6 M5,-6 L-2,0 L5,6 Z" stroke="#6a6a6a" stroke-width="1.2" fill="none" /></g><g transform="translate(882,947)"><path d="M4,-6 L-4,0 L4,6 Z" stroke="#6a6a6a" stroke-width="1.2" fill="none" /></g><g transform="translate(1205,947)"><path d="M-4,-6 L4,0 L-4,6 Z" stroke="#6a6a6a" stroke-width="1.2" fill="none" /></g><g transform="translate(1238,947)"><path d="M5,-6 V6 M-5,-6 L2,0 L-5,6 Z" stroke="#6a6a6a" stroke-width="1.2" fill="none" /></g><g transform="translate(1298,947)"><path d="M-4,-2.0 L0,2.0 L4,-2.0" stroke="#e6e6e6" stroke-width="1.3" fill="none" /></g><g transform="translate(1323,947)"><path d="M-8,9 Q-8,1 -3,0 Q-6,-3 -6,-5 Q-6,-10 0,-10 Q6,-10 6,-5 Q6,-3 3,0 Q8,1 8,9" stroke="#e6e6e6" stroke-width="1.15" fill="none" /><path d="M13,-2.0 L17,2.0 L21,-2.0" stroke="#e6e6e6" stroke-width="1.2" fill="none" /></g><g transform="translate(1365,947)"><circle cx="0" cy="0" r="3.5" stroke="#e6e6e6" stroke-width="1.4" fill="none"/><path d="M0,-9 V-6 M0,6 V9 M-9,0 H-6 M6,0 H9 M-6.4,-6.4 L-4.5,-4.5 M4.5,4.5 L6.4,6.4 M-6.4,6.4 L-4.5,4.5 M4.5,-4.5 L6.4,-6.4" stroke="#e6e6e6" stroke-width="1.15" fill="none" /></g><g transform="translate(1390,947)"><path d="M-4,-2.0 L0,2.0 L4,-2.0" stroke="#e6e6e6" stroke-width="1.2" fill="none" /></g><g transform="translate(1413,947)"><circle cx="0" cy="0" r="5" stroke="#e6e6e6" stroke-width="2" fill="none"/><path d="M-8,8 L8,-8" stroke="#e6e6e6" stroke-width="3" fill="none" /></g><g transform="translate(1447,947)"><path d="M-7,-9 H1 L5,-5 V-2 M-7,-9 V9 H0 M2,-3 Q8,-3 8,3 Q8,9 2,9 V6 Q5,6 5,3 Q5,0 2,0 Z" stroke="#e6e6e6" stroke-width="1.15" fill="none" /></g><rect x="557" y="939" width="1" height="16" fill="#4a4a4a" /><rect x="1258" y="939" width="1" height="16" fill="#4a4a4a" /><rect x="900.5" y="935.5" width="30" height="23" rx="3" fill="none" stroke="#4d4e51"/><text x="1475" y="953" font-size="15" fill="#f0f0f0" textLength="104" lengthAdjust="spacingAndGlyphs" >3.75 in = 30'-0&quot;</text><text x="1600" y="953" font-size="15" fill="#f0f0f0" textLength="113" lengthAdjust="spacingAndGlyphs" >42.00 x 30.00 in</text><rect x="0" y="965" width="1800" height="47" fill="#050505" /><g transform="translate(28,988)"><path d="M-9,-7 L-1,-8 V-1 H-9 Z M1,-8.3 L9,-9.5 V-1 H1 Z M-9,1 H-1 V8 L-9,7 Z M1,1 H9 V9.5 L1,8.3 Z" stroke="none" stroke-width="0" fill="#fff" /></g><rect x="56" y="965" width="403" height="47" fill="#f0f0f0" /><circle cx="79.5" cy="988.5" r="11" stroke="#111" stroke-width="3" fill="none"/><text x="104" y="995" font-size="17" fill="#333" textLength="142" lengthAdjust="spacingAndGlyphs" >Type here to search</text><g transform="translate(435,988)"><path d="M-3,-9 H3 V3 Q3,6 0,6 Q-3,6 -3,3 Z M-6,1 Q-6,8 0,8 Q6,8 6,1 M0,8 V10 M-4,10.5 H4" stroke="#333" stroke-width="1.3" fill="none" /></g><g transform="translate(487,988)"><path d="M-8,-8 H4 M-8,9 H4 M-6,-5 H2 V6 H-6 Z M8,-9 V-3 M8,3 V9 M6,-2 H10 V2 H6 Z" stroke="#e6e6e6" stroke-width="1.2" fill="none" /></g><g transform="translate(542,988)"><path d="M-10,-3 L0,-9 L10,-3 V9 H-10 Z" stroke="none" stroke-width="0" fill="#fff" /><path d="M-10,-3 L0,4 L10,-3 M2,3 L10,9" stroke="#050505" stroke-width="1.2" fill="none" /></g><g transform="translate(591,988)"><path d="M-7,-8 L3,-10 V10 L-7,8 Z" stroke="none" stroke-width="0" fill="#0a72c6" /><rect x="3" y="-5" width="9" height="10" fill="#1a86d8" /><text x="-2" y="4" font-size="11" fill="#fff" text-anchor="middle" font-weight="bold" >O</text><path d="M4,-4 L8,0 L12,-4" stroke="#fff" stroke-width="1" fill="none" /></g><g transform="translate(640,988)"><text x="0" y="9" font-size="30" fill="#1a7fd4" text-anchor="middle" font-weight="bold" >e</text></g><g transform="translate(685,988)"><path d="M-7,-9 H5 V7 H-7 Z" stroke="none" stroke-width="0" fill="#e8c76a" /><path d="M-7,-9 L0,-5 V11 L-7,7 Z" stroke="none" stroke-width="0" fill="#f5d985" /></g><text x="705" y="995" font-size="16" fill="#f0f0f0" textLength="43" lengthAdjust="spacingAndGlyphs" >Scree...</text><circle cx="781.5" cy="988" r="12" fill="#db4437"/><path d="M781.5,988 L771,994 A12,12 0 0 0 791,996 Z" fill="#0f9d58"/><path d="M781.5,988 L791,996 A12,12 0 0 0 793,983 L781.5,983 Z" fill="#f4c20d"/><circle cx="781.5" cy="988" r="5.5" fill="#fff"/><circle cx="781.5" cy="988" r="4.3" fill="#4285f4"/><text x="800" y="995" font-size="16" fill="#f0f0f0" textLength="44" lengthAdjust="spacingAndGlyphs" >Edit P...</text><g transform="translate(878,988)"><rect x="0" y="-8" width="12" height="16" fill="#1e7145" /><rect x="2" y="-6" width="8" height="12" fill="#fff" /><path d="M-10,-9 L2,-11 V11 L-10,9 Z" stroke="none" stroke-width="0" fill="#1d6b40" /><text x="-4" y="5" font-size="12" fill="#fff" text-anchor="middle" font-weight="bold" >X</text></g><g transform="translate(926,988)"><path d="M-11,-5 H11 L10,11 H-10 Z" stroke="none" stroke-width="0" fill="#f4f4f4" /><path d="M-4,-5 V-8 Q0,-11 4,-8 V-5" stroke="#ddd" stroke-width="1.3" fill="none" /><rect x="-5" y="-1" width="4.5" height="4.5" fill="#f25022" /><rect x="0.5" y="-1" width="4.5" height="4.5" fill="#7fba00" /><rect x="-5" y="4.5" width="4.5" height="4.5" fill="#00a4ef" /><rect x="0.5" y="4.5" width="4.5" height="4.5" fill="#ffb900" /></g><g transform="translate(975,988)"><rect x="0" y="-8" width="12" height="16" fill="#2b579a" /><rect x="2" y="-6" width="8" height="12" fill="#fff" /><path d="M-11,-9 L2,-11 V11 L-11,9 Z" stroke="none" stroke-width="0" fill="#2b5797" /><text x="-5" y="5" font-size="11" fill="#fff" text-anchor="middle" font-weight="bold" >W</text></g><g transform="translate(1024,988)"><rect x="0" y="-8" width="12" height="16" fill="#d24726" /><rect x="2" y="-6" width="8" height="12" fill="#fff" /><path d="M-11,-9 L2,-11 V11 L-11,9 Z" stroke="none" stroke-width="0" fill="#c43e1c" /><text x="-5" y="5" font-size="12" fill="#fff" text-anchor="middle" font-weight="bold" >P</text></g><g transform="translate(1072,988)"><circle cx="0" cy="0" r="11" fill="#fff"/><circle cx="0" cy="0" r="9" fill="#00aff0"/><text x="0" y="6" font-size="15" fill="#fff" text-anchor="middle" font-weight="bold" >S</text></g><rect x="1097" y="965" width="93" height="47" fill="#3b3b3b" /><g transform="translate(1118,988)"><circle cx="0" cy="0" r="12" fill="#1d8ee6"/><path d="M-5,8 V-5 Q0,-9 5,-5 Q8,0 0,2 L6,8" stroke="#fff" stroke-width="3" fill="none" /></g><text x="1136" y="995" font-size="16" fill="#f0f0f0" textLength="39" lengthAdjust="spacingAndGlyphs" >.Sam...</text><g transform="translate(1214,988)"><rect x="0" y="-8" width="12" height="16" fill="#80397b" /><rect x="2" y="-6" width="8" height="12" fill="#fff" /><path d="M-11,-9 L2,-11 V11 L-11,9 Z" stroke="none" stroke-width="0" fill="#7719aa" /><text x="-5" y="5" font-size="12" fill="#fff" text-anchor="middle" font-weight="bold" >N</text></g><g transform="translate(1260,988)"><rect x="-12" y="-12" width="24" height="24" rx="4" fill="#d8d8d8"/><rect x="-10" y="-10" width="20" height="20" rx="3" fill="#2a2a2a"/><text x="0" y="8" font-size="20" fill="#eee" text-anchor="middle" font-weight="bold" >S</text></g><text x="1278" y="995" font-size="16" fill="#f0f0f0" textLength="40" lengthAdjust="spacingAndGlyphs" >TAVC...</text><rect x="670" y="1008" width="85" height="4" fill="#99c9ea" /><rect x="765" y="1008" width="84" height="4" fill="#99c9ea" /><rect x="1097" y="1008" width="93" height="4" fill="#99c9ea" /><rect x="1243" y="1008" width="83" height="4" fill="#99c9ea" /><g transform="translate(1369,988)"><path d="M-9,9 Q-9,3 -5,2 Q-8,0 -7,-3 Q-5,-6 -2,-3 Q-1,0 -4,2 Q0,3 0,9 M-1,-3 Q3,-2 5,-4 Q2,-6 3,-9 Q5,-11 7,-9 Q8,-6 5,-4 Q9,-3 9,3" stroke="#e6e6e6" stroke-width="1.15" fill="none" /></g><path d="M1408,992 L1415.5,984 L1423,992" stroke="#e6e6e6" stroke-width="1.2" fill="none" /><g transform="translate(1453,988)"><path d="M-10,6 Q-12,1 -7,0 Q-6,-6 1,-5 Q4,-8 8,-4 Q12,-3 11,2 Q12,6 8,6 Z" stroke="none" stroke-width="0" fill="#1b84d8" /></g><g transform="translate(1490,988)"><path d="M-10,6 Q-12,1 -7,0 Q-6,-6 1,-5 Q4,-8 8,-4 Q12,-3 11,2 Q12,6 8,6 Z" stroke="none" stroke-width="0" fill="#f0f0f0" /></g><g transform="translate(1528,988)"><path d="M-4,-8 L-9,-5 L-4,-2 L-9,1 L-4,4 L0,1 L4,4 L9,1 L4,-2 L9,-5 L4,-8 L0,-5 Z M-4,6 L0,9 L4,6 L0,3 Z" stroke="none" stroke-width="0" fill="#eee" /></g><g transform="translate(1565,988)"><rect x="-5" y="-5" width="14" height="10" fill="none" stroke="#eee" stroke-width="1.5"/><path d="M-9,-8 V-4 M-11,-4 H-7 M-9,-4 V0 H-5" stroke="#e6e6e6" stroke-width="1.15" fill="none" /><rect x="9" y="-2" width="2" height="4" fill="#eee" /></g><g transform="translate(1603,988)"><path d="M-9,7 A14,14 0 0 1 7,-9 M-6,7 A10,10 0 0 1 7,-5 M-3,7 A6,6 0 0 1 7,-1" stroke="#aaa" stroke-width="1.3" fill="none" /><circle cx="5" cy="6" r="1.8" fill="#eee"/></g><g transform="translate(1640,988)"><path d="M-9,-3 H-5 L0,-8 V8 L-5,3 H-9 Z M3,-4 Q6,0 3,4 M6,-7 Q11,0 6,7" stroke="#e6e6e6" stroke-width="1.2" fill="none" /></g><text x="1698.5" y="984" font-size="16" fill="#f0f0f0" text-anchor="middle" textLength="57" lengthAdjust="spacingAndGlyphs" >11:04 AM</text><text x="1698.5" y="1006" font-size="16" fill="#f0f0f0" text-anchor="middle" textLength="62" lengthAdjust="spacingAndGlyphs" >3/23/2019</text><g transform="translate(1761,988)"><path d="M-9,-9 H9 V5 H0 L-4,9 V5 H-9 Z" stroke="none" stroke-width="0" fill="#f4f4f4" /><path d="M-6,-5 H6 M-6,-2 H6 M-6,1 H3" stroke="#050505" stroke-width="1" fill="none" /></g><rect x="1794" y="965" width="2" height="47" fill="#3a3a3a" /><rect x="1186" y="333" width="2" height="228" fill="#000" opacity="0.12"/><rect x="1418" y="564" width="3" height="173" fill="#000" opacity="0.15"/><rect x="1188" y="735" width="233" height="2" fill="#000" opacity="0.15"/><rect x="931" y="329" width="255" height="634" fill="#111" /><rect x="932" y="330" width="253" height="632" fill="#2b2c2e" /><rect x="934" y="561.5" width="249" height="23" fill="#175589" /><text x="969" y="346.6" font-size="14" fill="#f2f2f2" textLength="21" lengthAdjust="spacingAndGlyphs" >Cut</text><text x="1155" y="346.6" font-size="14" fill="#f2f2f2" text-anchor="end" textLength="39" lengthAdjust="spacingAndGlyphs" >Ctrl+X</text><g transform="translate(945,341.6)"><path d="M-8,-4 a3,3 0 1 0 6,0 a3,3 0 1 0 -6,0 M-8,5 a3,3 0 1 0 6,0 a3,3 0 1 0 -6,0 M-2,-2 L9,4 M-2,3 L9,-3" stroke="#e6e6e6" stroke-width="1.3" fill="none" /></g><text x="969" y="371.5" font-size="14" fill="#f2f2f2" textLength="31" lengthAdjust="spacingAndGlyphs" >Copy</text><text x="1155" y="371.5" font-size="14" fill="#f2f2f2" text-anchor="end" textLength="40" lengthAdjust="spacingAndGlyphs" >Ctrl+C</text><g transform="translate(945,366.5)"><path d="M-8,-8 H1 V6 H-8 Z" stroke="#e6e6e6" stroke-width="1.3" fill="none" /><path d="M-3,-3 H4 L8,1 V9 H-3 Z M4,-3 V1 H8" stroke="#e6e6e6" stroke-width="1.3" fill="#2b2c2e" /></g><text x="969" y="395.5" font-size="14" fill="#f2f2f2" textLength="35" lengthAdjust="spacingAndGlyphs" >Paste</text><text x="1155" y="395.5" font-size="14" fill="#f2f2f2" text-anchor="end" textLength="40" lengthAdjust="spacingAndGlyphs" >Ctrl+V</text><g transform="translate(945,390.5)"><path d="M-8,-6 H1 V8 H-8 Z M-5,-8 H-2 V-6 H-5 Z" stroke="#e6e6e6" stroke-width="1.3" fill="none" /><path d="M-3,-1 H4 L8,3 V9 H-3 Z M4,-1 V3 H8" stroke="#e6e6e6" stroke-width="1.3" fill="#2b2c2e" /></g><text x="969" y="419.8" font-size="14" fill="#f2f2f2" textLength="92" lengthAdjust="spacingAndGlyphs" >Format Painter</text><text x="1155" y="419.8" font-size="14" fill="#f2f2f2" text-anchor="end" textLength="77" lengthAdjust="spacingAndGlyphs" >Ctrl+Shift+C</text><g transform="translate(945,414.8)"><path d="M5,-10 L9,-6 L4,-1 L0,-5 Z M0,-5 L4,-1 L2,2 L-3,8 L-4,6 L-6,7 L-5,4 L-9,3 L-3,-3 Z M-3,3 L-1,1" stroke="#e6e6e6" stroke-width="1.2" fill="none" /></g><text x="969" y="444" font-size="14" fill="#f2f2f2" textLength="40" lengthAdjust="spacingAndGlyphs" >Delete</text><text x="1155" y="444" font-size="14" fill="#f2f2f2" text-anchor="end" textLength="20" lengthAdjust="spacingAndGlyphs" >Del</text><g transform="translate(945,439)"><path d="M-6,-6 L6,6 M6,-6 L-6,6" stroke="#e6e6e6" stroke-width="1.3" fill="none" /></g><rect x="941" y="455" width="236" height="1" fill="#4a4b4e" /><text x="969" y="474" font-size="14" fill="#f2f2f2" textLength="83" lengthAdjust="spacingAndGlyphs" >Control Point</text><path d="M1169,465 L1173,469 L1169,473" stroke="#d0d0d0" stroke-width="1.1" fill="none" /><text x="969" y="498.6" font-size="14" fill="#7a7a7a" textLength="90" lengthAdjust="spacingAndGlyphs" >Convert to Arc</text><g transform="translate(945,493.6)"><path d="M-8,8 Q-7,-5 5,-8" stroke="#555" stroke-width="1.3" fill="none" /></g><text x="969" y="523" font-size="14" fill="#f2f2f2" textLength="92" lengthAdjust="spacingAndGlyphs" >Change Colors</text><text x="969" y="547" font-size="14" fill="#f2f2f2" textLength="112" lengthAdjust="spacingAndGlyphs" >Autosize Text Box</text><text x="1155" y="547" font-size="14" fill="#f2f2f2" text-anchor="end" textLength="34" lengthAdjust="spacingAndGlyphs" >Alt+Z</text><rect x="941" y="558" width="236" height="1" fill="#4a4b4e" /><text x="969" y="577.4" font-size="14" fill="#f2f2f2" textLength="33" lengthAdjust="spacingAndGlyphs" >Layer</text><path d="M1169,568.4 L1173,572.4 L1169,576.4" stroke="#d0d0d0" stroke-width="1.1" fill="none" /><text x="969" y="602" font-size="14" fill="#f2f2f2" textLength="33" lengthAdjust="spacingAndGlyphs" >Order</text><path d="M1169,593 L1173,597 L1169,601" stroke="#d0d0d0" stroke-width="1.1" fill="none" /><text x="969" y="626" font-size="14" fill="#f2f2f2" textLength="63" lengthAdjust="spacingAndGlyphs" >Alignment</text><path d="M1169,617 L1173,621 L1169,625" stroke="#d0d0d0" stroke-width="1.1" fill="none" /><text x="969" y="650.5" font-size="14" fill="#f2f2f2" textLength="80" lengthAdjust="spacingAndGlyphs" >Edit Action...</text><text x="1155" y="650.5" font-size="14" fill="#f2f2f2" text-anchor="end" textLength="76" lengthAdjust="spacingAndGlyphs" >Ctrl+Shift+E</text><text x="969" y="675" font-size="14" fill="#f2f2f2" textLength="48" lengthAdjust="spacingAndGlyphs" >Capture</text><path d="M1169,666 L1173,670 L1169,674" stroke="#d0d0d0" stroke-width="1.1" fill="none" /><text x="969" y="699.6" font-size="14" fill="#f2f2f2" textLength="43" lengthAdjust="spacingAndGlyphs" >Flatten</text><g transform="translate(945,694.6)"><path d="M-7,8 L-5,-3 H5 L7,8 Z M-3,-3 a3,3 0 0 1 6,0" stroke="#c9a93a" stroke-width="1.4" fill="none" /></g><text x="969" y="723.8" font-size="14" fill="#7a7a7a" textLength="37" lengthAdjust="spacingAndGlyphs" >Group</text><text x="1155" y="723.8" font-size="14" fill="#7a7a7a" text-anchor="end" textLength="40" lengthAdjust="spacingAndGlyphs" >Ctrl+G</text><text x="969" y="748" font-size="14" fill="#f2f2f2" textLength="30" lengthAdjust="spacingAndGlyphs" >Lock</text><text x="1155" y="748" font-size="14" fill="#f2f2f2" text-anchor="end" textLength="75" lengthAdjust="spacingAndGlyphs" >Ctrl+Shift+L</text><text x="969" y="772.5" font-size="14" fill="#f2f2f2" textLength="44" lengthAdjust="spacingAndGlyphs" >Legend</text><path d="M1169,763.5 L1173,767.5 L1169,771.5" stroke="#d0d0d0" stroke-width="1.1" fill="none" /><g transform="translate(945,767.5)"><path d="M-8,-8 H8 V8 H-8 Z M-8,-4 H8 M-2,0 H5 M-2,4 H5" stroke="#e6e6e6" stroke-width="1.3" fill="none" /><rect x="-6" y="-1" width="2" height="2" fill="#e6e6e6" /><rect x="-6" y="3" width="2" height="2" fill="#e6e6e6" /></g><rect x="941" y="784" width="236" height="1" fill="#4a4b4e" /><text x="969" y="802.5" font-size="14" fill="#f2f2f2" textLength="34" lengthAdjust="spacingAndGlyphs" >Reply</text><g transform="translate(945,797.5)"><path d="M-6,-7 V2 H7 M4,-1 L7,2 L4,5" stroke="#e6e6e6" stroke-width="1.3" fill="none" /></g><text x="969" y="827" font-size="14" fill="#f2f2f2" textLength="64" lengthAdjust="spacingAndGlyphs" >Set Status</text><path d="M1169,818 L1173,822 L1169,826" stroke="#d0d0d0" stroke-width="1.1" fill="none" /><text x="969" y="851" font-size="14" fill="#f2f2f2" textLength="38" lengthAdjust="spacingAndGlyphs" >Check</text><rect x="941" y="862" width="236" height="1" fill="#4a4b4e" /><text x="969" y="881" font-size="14" fill="#f2f2f2" textLength="113" lengthAdjust="spacingAndGlyphs" >Add to Tool Chest</text><path d="M1169,872 L1173,876 L1169,880" stroke="#d0d0d0" stroke-width="1.1" fill="none" /><text x="969" y="905" font-size="14" fill="#f2f2f2" textLength="88" lengthAdjust="spacingAndGlyphs" >Set as Default</text><text x="969" y="930" font-size="14" fill="#7a7a7a" textLength="114" lengthAdjust="spacingAndGlyphs" >Apply to All Pages</text><text x="969" y="954.5" font-size="14" fill="#f2f2f2" textLength="64" lengthAdjust="spacingAndGlyphs" >Properties</text><path d="M953.49,949.08 L953.41,950.75 L951.24,951.73 L950.69,952.91 L951.30,955.21 L950.06,956.33 L947.83,955.49 L946.61,955.93 L945.42,957.99 L943.75,957.91 L942.77,955.74 L941.59,955.19 L939.29,955.80 L938.17,954.56 L939.01,952.33 L938.57,951.11 L936.51,949.92 L936.59,948.25 L938.76,947.27 L939.31,946.09 L938.70,943.79 L939.94,942.67 L942.17,943.51 L943.39,943.07 L944.58,941.01 L946.25,941.09 L947.23,943.26 L948.41,943.81 L950.71,943.20 L951.83,944.44 L950.99,946.67 L951.43,947.89 Z" stroke="#e6e6e6" stroke-width="1.3" fill="none" /><circle cx="945" cy="949.5" r="3.57" stroke="#e6e6e6" stroke-width="1.3" fill="none"/><rect x="1185" y="561" width="233" height="174" fill="#1f2023" /><rect x="1185" y="710" width="233" height="24" fill="#175589" /><path d="M1208,573 L1213,578 L1222,568" stroke="#e6e6e6" stroke-width="1.4" fill="none" /><text x="1225" y="578" font-size="14.5" fill="#f2f2f2" textLength="33" lengthAdjust="spacingAndGlyphs" >None</text><rect x="1231.5" y="591.1" width="12" height="13" fill="none" stroke="#4d4e51" stroke-width="1"/><path d="M1232,597.6 Q1237.5,591.6 1243,597.6 Q1237.5,603.6 1232,597.6 Z" stroke="#e0e0e0" stroke-width="1.1" fill="none" /><circle cx="1237.5" cy="597.6" r="1.8" fill="none" stroke="#e0e0e0" stroke-width="1"/><text x="1251" y="602.6" font-size="14.5" fill="#f2f2f2" textLength="47" lengthAdjust="spacingAndGlyphs" >50% DD</text><rect x="1231.5" y="615.2" width="12" height="13" fill="none" stroke="#4d4e51" stroke-width="1"/><path d="M1232,621.7 Q1237.5,615.7 1243,621.7 Q1237.5,627.7 1232,621.7 Z" stroke="#e0e0e0" stroke-width="1.1" fill="none" /><circle cx="1237.5" cy="621.7" r="1.8" fill="none" stroke="#e0e0e0" stroke-width="1"/><text x="1251" y="626.7" font-size="14.5" fill="#f2f2f2" textLength="47" lengthAdjust="spacingAndGlyphs" >25% DD</text><rect x="1231.5" y="639.5" width="12" height="13" fill="none" stroke="#4d4e51" stroke-width="1"/><path d="M1232,646 Q1237.5,640 1243,646 Q1237.5,652 1232,646 Z" stroke="#e0e0e0" stroke-width="1.1" fill="none" /><circle cx="1237.5" cy="646" r="1.8" fill="none" stroke="#e0e0e0" stroke-width="1"/><text x="1251" y="651" font-size="14.5" fill="#f2f2f2" textLength="154" lengthAdjust="spacingAndGlyphs" >Coordination Comments</text><rect x="1231.5" y="664.3" width="12" height="13" fill="none" stroke="#505154" stroke-width="1"/><text x="1251" y="675.8" font-size="14.5" fill="#f2f2f2" textLength="52" lengthAdjust="spacingAndGlyphs" >Finishes</text><rect x="1231.5" y="688.5" width="12" height="13" fill="none" stroke="#505154" stroke-width="1"/><text x="1251" y="700" font-size="14.5" fill="#f2f2f2" textLength="51" lengthAdjust="spacingAndGlyphs" >Flooring</text><text x="1213" y="727" font-size="14.5" fill="#f2f2f2" textLength="120" lengthAdjust="spacingAndGlyphs" >Create New Layer...</text>
</svg>
</body></html>
